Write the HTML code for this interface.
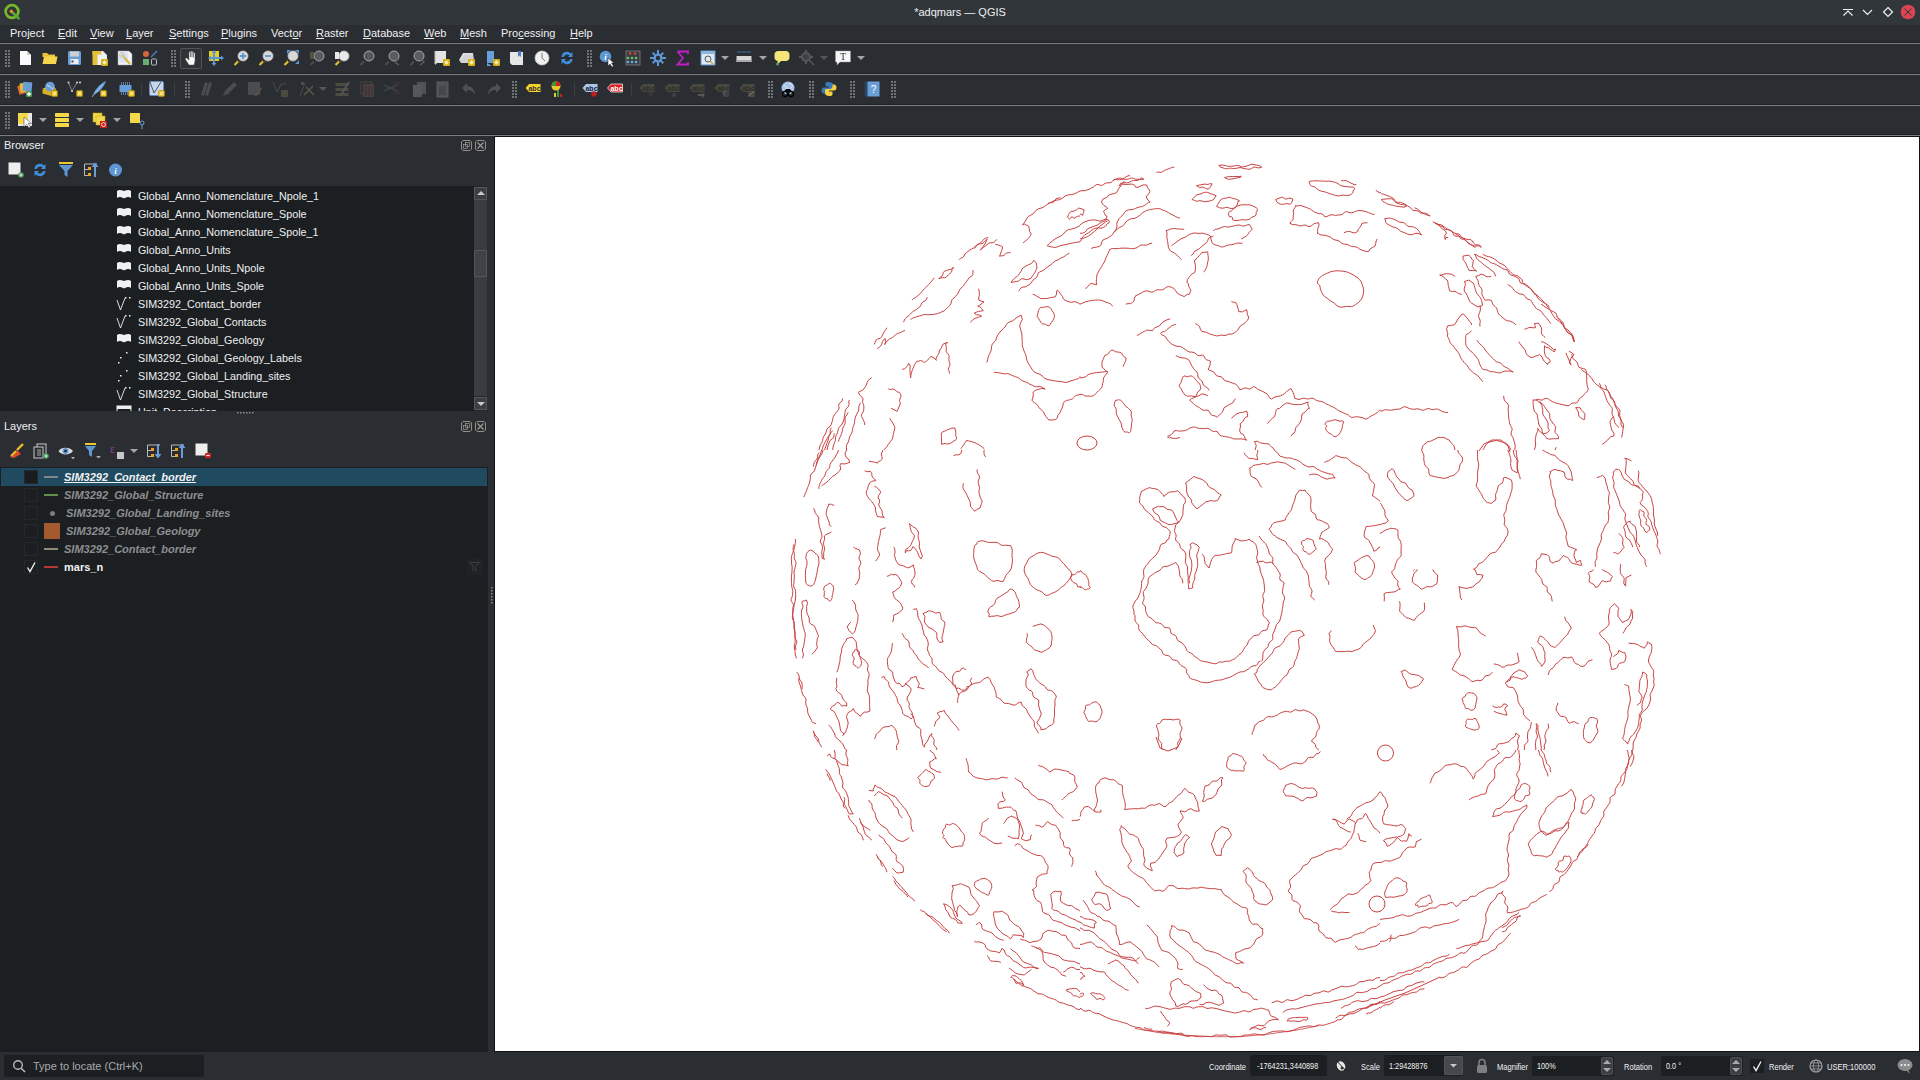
<!DOCTYPE html>
<html><head><meta charset="utf-8">
<style>
*{margin:0;padding:0;box-sizing:border-box}
html,body{width:1920px;height:1080px;overflow:hidden;background:#2a2d31;font-family:"Liberation Sans",sans-serif;color:#eff0f1;font-size:11px}
.a{position:absolute}
.mi{font-size:11px;color:#eff0f1;white-space:pre}
.mi u{text-decoration:underline;text-underline-offset:1px}
.st{font-size:9px;color:#eff0f1;white-space:pre}
.fld{background:#1c1f22;border-radius:2px}
svg{overflow:visible}
</style></head><body>
<div class="a" style="left:0;top:0;width:1920px;height:25px;background:#31363b"></div>
<svg class="a" style="left:0px;top:0px;" width="24" height="24" viewBox="0 0 24 24"><circle cx="12" cy="11.5" r="6.4" fill="none" stroke="#78b82a" stroke-width="2.7"/><path d="M11.5 11.5L18.5 18.3" stroke="#5aa83a" stroke-width="2.6" stroke-linecap="round"/><circle cx="11.3" cy="11.3" r="1.7" fill="#f08a20"/></svg>
<div class="a" style="left:0;top:5px;width:1920px;text-align:center;font-size:11px;color:#eff0f1;line-height:14px">*adqmars — QGIS</div>
<svg class="a" style="left:1840px;top:0px;" width="16" height="25" viewBox="0 0 16 25"><path d="M3 9.5H13M3.5 15.5L8 11L12.5 15.5" stroke="#eff0f1" stroke-width="1.2" fill="none"/></svg>
<svg class="a" style="left:1860px;top:0px;" width="16" height="25" viewBox="0 0 16 25"><path d="M3 10L7.5 14.5L12 10" stroke="#eff0f1" stroke-width="1.2" fill="none"/></svg>
<svg class="a" style="left:1880px;top:0px;" width="16" height="25" viewBox="0 0 16 25"><path d="M8 7.5L12.5 12L8 16.5L3.5 12Z" stroke="#eff0f1" stroke-width="1.2" fill="none"/></svg>
<svg class="a" style="left:1900px;top:0px;" width="16" height="25" viewBox="0 0 16 25"><circle cx="8" cy="12" r="7.3" fill="#da4453"/><path d="M4.5 8.5L11.5 15.5M11.5 8.5L4.5 15.5" stroke="#31363b" stroke-width="1"/></svg>
<div class="a" style="left:0;top:25px;width:1920px;height:18px;background:#2a2d31"></div>
<div class="a mi" style="left:10px;top:26px;line-height:14px">Pro<u>j</u>ect</div>
<div class="a mi" style="left:58px;top:26px;line-height:14px"><u>E</u>dit</div>
<div class="a mi" style="left:90px;top:26px;line-height:14px"><u>V</u>iew</div>
<div class="a mi" style="left:126px;top:26px;line-height:14px"><u>L</u>ayer</div>
<div class="a mi" style="left:169px;top:26px;line-height:14px"><u>S</u>ettings</div>
<div class="a mi" style="left:221px;top:26px;line-height:14px"><u>P</u>lugins</div>
<div class="a mi" style="left:271px;top:26px;line-height:14px">Vect<u>o</u>r</div>
<div class="a mi" style="left:316px;top:26px;line-height:14px"><u>R</u>aster</div>
<div class="a mi" style="left:363px;top:26px;line-height:14px"><u>D</u>atabase</div>
<div class="a mi" style="left:424px;top:26px;line-height:14px"><u>W</u>eb</div>
<div class="a mi" style="left:460px;top:26px;line-height:14px"><u>M</u>esh</div>
<div class="a mi" style="left:501px;top:26px;line-height:14px">Pro<u>c</u>essing</div>
<div class="a mi" style="left:570px;top:26px;line-height:14px"><u>H</u>elp</div>
<div class="a" style="left:0;top:44px;width:1920px;height:30px;background:#2a2d31"></div>
<div class="a" style="left:0;top:75px;width:1920px;height:30px;background:#2a2d31"></div>
<div class="a" style="left:0;top:106px;width:1920px;height:29px;background:#2a2d31"></div>
<div class="a" style="left:0;top:42px;width:1920px;height:1px;background:#1f2225"></div>
<div class="a" style="left:0;top:43px;width:1920px;height:1px;background:#7b7f82"></div>
<div class="a" style="left:0;top:73px;width:1920px;height:1px;background:#1f2225"></div>
<div class="a" style="left:0;top:74px;width:1920px;height:1px;background:#7b7f82"></div>
<div class="a" style="left:0;top:104px;width:1920px;height:1px;background:#1f2225"></div>
<div class="a" style="left:0;top:105px;width:1920px;height:1px;background:#7b7f82"></div>
<div class="a" style="left:0;top:134px;width:1920px;height:1px;background:#1f2225"></div>
<div class="a" style="left:0;top:135px;width:1920px;height:1px;background:#7b7f82"></div>
<svg class="a" style="left:5px;top:50px;" width="5" height="18" viewBox="0 0 5 18"><rect x="0" y="0" width="2" height="2" fill="#6f7276"/><rect x="3" y="0" width="2" height="2" fill="#6f7276"/><rect x="0" y="3" width="2" height="2" fill="#6f7276"/><rect x="3" y="3" width="2" height="2" fill="#6f7276"/><rect x="0" y="6" width="2" height="2" fill="#6f7276"/><rect x="3" y="6" width="2" height="2" fill="#6f7276"/><rect x="0" y="9" width="2" height="2" fill="#6f7276"/><rect x="3" y="9" width="2" height="2" fill="#6f7276"/><rect x="0" y="12" width="2" height="2" fill="#6f7276"/><rect x="3" y="12" width="2" height="2" fill="#6f7276"/><rect x="0" y="15" width="2" height="2" fill="#6f7276"/><rect x="3" y="15" width="2" height="2" fill="#6f7276"/></svg>
<svg class="a" style="left:17px;top:50px;" width="16" height="16" viewBox="0 0 16 16"><path d="M3 1H10L14 5V15H3Z" fill="#fafafa"/><path d="M10 1V5H14" fill="#ccc"/></svg>
<svg class="a" style="left:42px;top:50px;" width="16" height="16" viewBox="0 0 16 16"><path d="M0.5 3H5L6.5 4.5H13V7H0.5Z" fill="#e6c23a"/><path d="M0.5 14L2 6.5H15.5L14 14Z" fill="#f7d64e"/></svg>
<svg class="a" style="left:67px;top:50px;" width="16" height="16" viewBox="0 0 16 16"><rect x="1" y="1" width="13" height="14" rx="1.5" fill="#6a9ed8"/><rect x="3" y="1.5" width="9" height="5" fill="#cfcfcf"/><rect x="3.5" y="9" width="8" height="5" fill="#eee"/><rect x="4.5" y="10.5" width="2" height="2" fill="#2a4a70"/></svg>
<svg class="a" style="left:92px;top:50px;" width="16" height="16" viewBox="0 0 16 16"><path d="M4 1H11L15 5V15H4Z" fill="#eef1f8"/><rect x="0.5" y="1" width="5" height="14" fill="#e4c03a"/><rect x="0.5" y="1" width="9" height="3.5" fill="#e4c03a"/><rect x="9" y="9" width="7" height="7" rx="1" fill="#d4b21c"/><path d="M12.5 10.2v4.6M10.3 12.5h4.4M11 11l3 3M14 11l-3 3" stroke="#fff6c0" stroke-width="0.8"/></svg>
<svg class="a" style="left:117px;top:50px;" width="16" height="16" viewBox="0 0 16 16"><path d="M1 1H12L15 4V15H1Z" fill="#f0f2f8" stroke="#9aa" stroke-width="0.5"/><rect x="2" y="2.5" width="9" height="10" fill="#dbe4f6"/><path d="M5 5L13 14" stroke="#d8b83a" stroke-width="2.2"/><circle cx="5" cy="5" r="2.3" fill="none" stroke="#ccc" stroke-width="1.2"/></svg>
<svg class="a" style="left:142px;top:50px;" width="16" height="16" viewBox="0 0 16 16"><circle cx="4" cy="4" r="3" fill="#d9663a"/><path d="M9 7L15 1" stroke="#4a7cc0" stroke-width="1.5"/><rect x="1" y="9" width="6" height="6" fill="#6bab72"/><rect x="9.5" y="9" width="5" height="6" rx="1" fill="none" stroke="#bbb" stroke-width="1"/></svg>
<svg class="a" style="left:171px;top:50px;" width="5" height="18" viewBox="0 0 5 18"><rect x="0" y="0" width="2" height="2" fill="#6f7276"/><rect x="3" y="0" width="2" height="2" fill="#6f7276"/><rect x="0" y="3" width="2" height="2" fill="#6f7276"/><rect x="3" y="3" width="2" height="2" fill="#6f7276"/><rect x="0" y="6" width="2" height="2" fill="#6f7276"/><rect x="3" y="6" width="2" height="2" fill="#6f7276"/><rect x="0" y="9" width="2" height="2" fill="#6f7276"/><rect x="3" y="9" width="2" height="2" fill="#6f7276"/><rect x="0" y="12" width="2" height="2" fill="#6f7276"/><rect x="3" y="12" width="2" height="2" fill="#6f7276"/><rect x="0" y="15" width="2" height="2" fill="#6f7276"/><rect x="3" y="15" width="2" height="2" fill="#6f7276"/></svg>
<div class="a" style="left:180px;top:48px;width:22px;height:21px;border:1px solid #505357;border-radius:2px;background:#2f3236"></div>
<svg class="a" style="left:184px;top:50px;" width="16" height="16" viewBox="0 0 16 16"><path d="M5 15L1.5 9.5C1 8.5 2 7.5 3 8.3L5 10V2.5C5 1.5 6.5 1.5 6.5 2.5V7V1.8C6.5 0.8 8 0.8 8 1.8V7V2.2C8 1.2 9.5 1.2 9.5 2.2V7.5V3.5C9.5 2.5 11 2.5 11 3.5V11L10 15Z" fill="#fafafa" stroke="#555" stroke-width="0.5"/></svg>
<svg class="a" style="left:208px;top:50px;" width="16" height="16" viewBox="0 0 16 16"><rect x="1" y="1" width="10" height="10" fill="#e9cf2a"/><path d="M6 0L8.5 3H3.5ZM6 16L8.5 13H3.5ZM0 8L3 5.5V10.5ZM16 8L13 5.5V10.5Z" fill="#5d97d3"/><rect x="5" y="2" width="2" height="12" fill="#5d97d3"/><rect x="1" y="7" width="14" height="2" fill="#5d97d3"/></svg>
<svg class="a" style="left:233px;top:50px;" width="16" height="16" viewBox="0 0 16 16"><path d="M1.5 15L6 10.5" stroke="#e3c231" stroke-width="2.2"/><path d="M5 11.5L6.8 9.7" stroke="#222" stroke-width="1.5"/><circle cx="10" cy="6" r="5" fill="#d9d9d9" stroke="#bbb" stroke-width="0.8"/><path d="M10 3V9M7 6H13" stroke="#5d97d3" stroke-width="1.8"/></svg>
<svg class="a" style="left:258px;top:50px;" width="16" height="16" viewBox="0 0 16 16"><path d="M1.5 15L6 10.5" stroke="#e3c231" stroke-width="2.2"/><path d="M5 11.5L6.8 9.7" stroke="#222" stroke-width="1.5"/><circle cx="10" cy="6" r="5" fill="#d9d9d9" stroke="#bbb" stroke-width="0.8"/><path d="M7 6H13" stroke="#5d97d3" stroke-width="1.8"/></svg>
<svg class="a" style="left:283px;top:50px;" width="16" height="16" viewBox="0 0 16 16"><path d="M1.5 15L6 10.5" stroke="#e3c231" stroke-width="2.2"/><path d="M5 11.5L6.8 9.7" stroke="#222" stroke-width="1.5"/><circle cx="10" cy="6" r="5" fill="#d9d9d9" stroke="#bbb" stroke-width="0.8"/><path d="M4 0H8L4 4ZM16 0V4L12 0ZM16 14V10L12 14Z" fill="#5d97d3"/></svg>
<svg class="a" style="left:309px;top:50px;" width="16" height="16" viewBox="0 0 16 16"><path d="M1.5 15L6 10.5" stroke="#4a4c4e" stroke-width="2.2"/><path d="M5 11.5L6.8 9.7" stroke="#222" stroke-width="1.5"/><circle cx="10" cy="6" r="5" fill="#5a5c5f" stroke="#bbb" stroke-width="0.8"/><rect x="1" y="2" width="4" height="7" fill="#505246"/></svg>
<svg class="a" style="left:334px;top:50px;" width="16" height="16" viewBox="0 0 16 16"><path d="M1.5 15L6 10.5" stroke="#e3c231" stroke-width="2.2"/><path d="M5 11.5L6.8 9.7" stroke="#222" stroke-width="1.5"/><circle cx="10" cy="6" r="5" fill="#e8e8e8" stroke="#bbb" stroke-width="0.8"/><rect x="1" y="2" width="4" height="7" fill="#e9e9e9"/></svg>
<svg class="a" style="left:359px;top:50px;" width="16" height="16" viewBox="0 0 16 16"><path d="M1.5 15L6 10.5" stroke="#4a4c4e" stroke-width="2.2"/><path d="M5 11.5L6.8 9.7" stroke="#222" stroke-width="1.5"/><circle cx="10" cy="6" r="5" fill="#5a5c5f" stroke="#bbb" stroke-width="0.8"/><text x="10" y="8" font-size="6" text-anchor="middle" fill="#3a3c3e" font-family="Liberation Sans">1:1</text></svg>
<svg class="a" style="left:384px;top:50px;" width="16" height="16" viewBox="0 0 16 16"><path d="M1.5 15L6 10.5" stroke="#4a4c4e" stroke-width="2.2"/><path d="M5 11.5L6.8 9.7" stroke="#222" stroke-width="1.5"/><circle cx="10" cy="6" r="5" fill="#5a5c5f" stroke="#bbb" stroke-width="0.8"/><path d="M15 9L11 12L15 15" stroke="#5a5c5f" stroke-width="1.5" fill="none"/></svg>
<svg class="a" style="left:409px;top:50px;" width="16" height="16" viewBox="0 0 16 16"><path d="M1.5 15L6 10.5" stroke="#4a4c4e" stroke-width="2.2"/><path d="M5 11.5L6.8 9.7" stroke="#222" stroke-width="1.5"/><circle cx="10" cy="6" r="5" fill="#5a5c5f" stroke="#bbb" stroke-width="0.8"/><path d="M11 9L15 12L11 15" stroke="#5a5c5f" stroke-width="1.5" fill="none"/></svg>
<svg class="a" style="left:434px;top:50px;" width="16" height="16" viewBox="0 0 16 16"><path d="M1 1H12V13H3L1 15Z" fill="#e3e3e3"/><path d="M1 1V14" stroke="#bbb"/><rect x="9" y="9" width="7" height="7" rx="1" fill="#d4b21c"/><path d="M12.5 10.2v4.6M10.3 12.5h4.4M11 11l3 3M14 11l-3 3" stroke="#fff6c0" stroke-width="0.8"/></svg>
<svg class="a" style="left:459px;top:50px;" width="16" height="16" viewBox="0 0 16 16"><path d="M0 10L4 3H14L15 10L11 13H2Z" fill="#d3d3d3"/><path d="M2 9L5 4H13" stroke="#eee" stroke-width="0.8" fill="none"/><rect x="9" y="9" width="7" height="7" rx="1" fill="#d4b21c"/><path d="M12.5 10.2v4.6M10.3 12.5h4.4M11 11l3 3M14 11l-3 3" stroke="#fff6c0" stroke-width="0.8"/></svg>
<svg class="a" style="left:484px;top:50px;" width="16" height="16" viewBox="0 0 16 16"><path d="M3 1H10V13H3Z" fill="#6a9ed8"/><path d="M3 13L8 16H3Z" fill="#6a9ed8"/><rect x="9" y="9" width="7" height="7" rx="1" fill="#d4b21c"/><path d="M12.5 10.2v4.6M10.3 12.5h4.4M11 11l3 3M14 11l-3 3" stroke="#fff6c0" stroke-width="0.8"/></svg>
<svg class="a" style="left:509px;top:50px;" width="16" height="16" viewBox="0 0 16 16"><path d="M1 2H14V15H3L1 13Z" fill="#e6e6e6"/><path d="M9 1H12V7L10.5 5.5L9 7Z" fill="#4a7cc0"/></svg>
<svg class="a" style="left:534px;top:50px;" width="16" height="16" viewBox="0 0 16 16"><circle cx="8" cy="8" r="7" fill="#f1f1f1" stroke="#c8c8c8" stroke-width="0.8"/><path d="M8 3V8L11 11" stroke="#777" stroke-width="1" fill="none"/></svg>
<svg class="a" style="left:559px;top:50px;" width="16" height="16" viewBox="0 0 16 16"><path d="M2.5 7A5.5 5.5 0 0 1 12 3.5L13.5 2V7H9L10.5 5.5A3.5 3.5 0 0 0 4.8 7Z" fill="#3f8fd8"/><path d="M13.5 9A5.5 5.5 0 0 1 4 12.5L2.5 14V9H7L5.5 10.5A3.5 3.5 0 0 0 11.2 9Z" fill="#3f8fd8"/></svg>
<svg class="a" style="left:587px;top:50px;" width="5" height="18" viewBox="0 0 5 18"><rect x="0" y="0" width="2" height="2" fill="#6f7276"/><rect x="3" y="0" width="2" height="2" fill="#6f7276"/><rect x="0" y="3" width="2" height="2" fill="#6f7276"/><rect x="3" y="3" width="2" height="2" fill="#6f7276"/><rect x="0" y="6" width="2" height="2" fill="#6f7276"/><rect x="3" y="6" width="2" height="2" fill="#6f7276"/><rect x="0" y="9" width="2" height="2" fill="#6f7276"/><rect x="3" y="9" width="2" height="2" fill="#6f7276"/><rect x="0" y="12" width="2" height="2" fill="#6f7276"/><rect x="3" y="12" width="2" height="2" fill="#6f7276"/><rect x="0" y="15" width="2" height="2" fill="#6f7276"/><rect x="3" y="15" width="2" height="2" fill="#6f7276"/></svg>
<svg class="a" style="left:599px;top:50px;" width="16" height="16" viewBox="0 0 16 16"><circle cx="6.5" cy="6.5" r="5.8" fill="#5d97d3"/><text x="6.5" y="10" font-size="9" font-style="italic" font-weight="bold" text-anchor="middle" fill="#fff" font-family="Liberation Serif">i</text><path d="M9 8V16L11 14L13 17L14.5 16L12.5 13H15Z" fill="#fff" stroke="#222" stroke-width="0.5"/></svg>
<svg class="a" style="left:625px;top:50px;" width="16" height="16" viewBox="0 0 16 16"><rect x="1" y="1" width="14" height="14" fill="#3a3d40" stroke="#999" stroke-width="0.6"/><circle cx="5" cy="3.5" r="1.3" fill="#e04040"/><circle cx="10" cy="3.5" r="1.3" fill="#e04040"/><circle cx="3" cy="8" r="1.3" fill="#6bbf6b"/><circle cx="7" cy="8" r="1.3" fill="#6bbf6b"/><circle cx="11" cy="8" r="1.3" fill="#6bbf6b"/><circle cx="3" cy="12" r="1.3" fill="#6ab0e0"/><circle cx="7" cy="12" r="1.3" fill="#6ab0e0"/><circle cx="11" cy="12" r="1.3" fill="#6ab0e0"/></svg>
<svg class="a" style="left:650px;top:50px;" width="16" height="16" viewBox="0 0 16 16"><g fill="#5d97d3"><circle cx="8" cy="8" r="4.5"/><path d="M7 0H9V16H7ZM0 7H16V9H0Z"/><path d="M2 3.4L3.4 2L14 12.6L12.6 14ZM12.6 2L14 3.4L3.4 14L2 12.6Z"/></g><circle cx="8" cy="8" r="2.2" fill="#2a2d31"/></svg>
<svg class="a" style="left:675px;top:50px;" width="16" height="16" viewBox="0 0 16 16"><path d="M2.5 1.5H13V4M2.5 1.5L8 8L2.5 14.5H13V12" stroke="#c020c8" stroke-width="1.8" fill="none"/></svg>
<svg class="a" style="left:700px;top:50px;" width="16" height="16" viewBox="0 0 16 16"><rect x="1" y="1" width="14" height="14" fill="#dfe8f5" stroke="#5d8fc8" stroke-width="1"/><rect x="1" y="1" width="14" height="3" fill="#8fb4e0"/><circle cx="8" cy="9" r="3" fill="none" stroke="#555" stroke-width="1"/><path d="M10 11L13 14" stroke="#c8a040" stroke-width="1.2"/></svg>
<svg class="a" style="left:736px;top:50px;" width="16" height="16" viewBox="0 0 16 16"><path d="M1 2H15" stroke="#3d6e9e" stroke-width="1"/><rect x="0.5" y="6" width="15" height="6" fill="#d8d8d8"/><rect x="0.5" y="10" width="15" height="2" fill="#aaa"/></svg>
<svg class="a" style="left:774px;top:50px;" width="16" height="16" viewBox="0 0 16 16"><rect x="0.5" y="1" width="15" height="10" rx="4" fill="#f2e67a"/><path d="M4 10L3 15L8 10" fill="#f2e67a"/><circle cx="3.5" cy="14" r="1.5" fill="#5a9e5a"/></svg>
<svg class="a" style="left:799px;top:50px;" width="16" height="16" viewBox="0 0 16 16"><g fill="#55585b"><circle cx="7" cy="7" r="5"/><path d="M6 0H8V14H6ZM0 6H14V8H0Z"/></g><circle cx="7" cy="7" r="3" fill="#3e4144"/><path d="M9 9L15 15" stroke="#55585b" stroke-width="1.5"/></svg>
<svg class="a" style="left:835px;top:50px;" width="16" height="16" viewBox="0 0 16 16"><path d="M0.5 1H15.5V12H5L2 15V12H0.5Z" fill="#f7f7f7" stroke="#999" stroke-width="0.5"/><text x="8" y="10" font-size="10" text-anchor="middle" fill="#333" font-family="Liberation Serif">T</text></svg>
<svg class="a" style="left:721px;top:56px;" width="8" height="5" viewBox="0 0 8 5"><path d="M0 0H8L4 4Z" fill="#a3a5a8"/></svg>
<svg class="a" style="left:759px;top:56px;" width="8" height="5" viewBox="0 0 8 5"><path d="M0 0H8L4 4Z" fill="#a3a5a8"/></svg>
<svg class="a" style="left:820px;top:56px;" width="8" height="5" viewBox="0 0 8 5"><path d="M0 0H8L4 4Z" fill="#55585b"/></svg>
<svg class="a" style="left:857px;top:56px;" width="8" height="5" viewBox="0 0 8 5"><path d="M0 0H8L4 4Z" fill="#a3a5a8"/></svg>
<svg class="a" style="left:5px;top:81px;" width="5" height="18" viewBox="0 0 5 18"><rect x="0" y="0" width="2" height="2" fill="#6f7276"/><rect x="3" y="0" width="2" height="2" fill="#6f7276"/><rect x="0" y="3" width="2" height="2" fill="#6f7276"/><rect x="3" y="3" width="2" height="2" fill="#6f7276"/><rect x="0" y="6" width="2" height="2" fill="#6f7276"/><rect x="3" y="6" width="2" height="2" fill="#6f7276"/><rect x="0" y="9" width="2" height="2" fill="#6f7276"/><rect x="3" y="9" width="2" height="2" fill="#6f7276"/><rect x="0" y="12" width="2" height="2" fill="#6f7276"/><rect x="3" y="12" width="2" height="2" fill="#6f7276"/><rect x="0" y="15" width="2" height="2" fill="#6f7276"/><rect x="3" y="15" width="2" height="2" fill="#6f7276"/></svg>
<svg class="a" style="left:17px;top:81px;" width="16" height="16" viewBox="0 0 16 16"><rect x="1" y="4" width="8" height="9" fill="#e06a3a" transform="rotate(-15 5 8)"/><rect x="3" y="2" width="8" height="9" fill="#e8c030" transform="rotate(-8 7 6)"/><rect x="6" y="1" width="9" height="9" fill="#6a9ed8" transform="rotate(5 10 5)"/><rect x="9" y="10" width="6" height="6" rx="1" fill="#4d9a5a"/><path d="M12 11V15M10 13H14" stroke="#fff" stroke-width="1.3"/></svg>
<svg class="a" style="left:42px;top:81px;" width="16" height="16" viewBox="0 0 16 16"><path d="M0.5 8L5 5.5L14 7.5L9.5 10Z" fill="#f2d448"/><path d="M0.5 8V12.5L9.5 15V10Z" fill="#d6b222"/><path d="M9.5 10V15L14 12.5V7.5Z" fill="#b8941a"/><circle cx="8" cy="5.5" r="4.8" fill="#6a9ed8"/><path d="M5 4C6 6 8 4.5 9 6.5S11 8 12 6" stroke="#e8eef8" stroke-width="0.9" fill="none"/><rect x="9.5" y="9.5" width="6" height="6" rx="1" fill="#e8c32a" stroke="#b08a10" stroke-width="0.6"/><rect x="11" y="11" width="3" height="3" fill="#f7e48a"/></svg>
<svg class="a" style="left:67px;top:81px;" width="16" height="16" viewBox="0 0 16 16"><circle cx="1.5" cy="1.5" r="1" fill="#ddd"/><circle cx="10" cy="1.5" r="1" fill="#ddd"/><circle cx="13" cy="1.5" r="1" fill="#ddd"/><circle cx="5" cy="10" r="1" fill="#ddd"/><path d="M1.5 1.5L5 10L10 1.5" stroke="#bbb" stroke-width="0.6" fill="none"/><rect x="9.5" y="9.5" width="6" height="6" rx="1" fill="#e8c32a" stroke="#b08a10" stroke-width="0.6"/><rect x="11" y="11" width="3" height="3" fill="#f7e48a"/></svg>
<svg class="a" style="left:91px;top:81px;" width="16" height="16" viewBox="0 0 16 16"><path d="M1 16C3 10 8 3 15 0C13 6 8 12 3 13Z" fill="#6a9ed8"/><path d="M1 16L12 3" stroke="#cfe0f5" stroke-width="0.6"/><rect x="9.5" y="9.5" width="6" height="6" rx="1" fill="#e8c32a" stroke="#b08a10" stroke-width="0.6"/><rect x="11" y="11" width="3" height="3" fill="#f7e48a"/></svg>
<svg class="a" style="left:119px;top:81px;" width="16" height="16" viewBox="0 0 16 16"><rect x="0.5" y="4" width="12" height="7" fill="#6a9ed8"/><path d="M2.5 1V4M4.5 1V4M6.5 1V4M8.5 1V4M10.5 1V4M2.5 11V14M4.5 11V14M6.5 11V14M8.5 11V14" stroke="#8fb4e0" stroke-width="0.6"/><rect x="9.5" y="9.5" width="6" height="6" rx="1" fill="#e8c32a" stroke="#b08a10" stroke-width="0.6"/><rect x="11" y="11" width="3" height="3" fill="#f7e48a"/></svg>
<svg class="a" style="left:149px;top:81px;" width="16" height="16" viewBox="0 0 16 16"><rect x="0.5" y="0.5" width="14" height="14" rx="1.5" fill="#c6d6ee" stroke="#6a8fc8" stroke-width="0.8"/><path d="M1 1L5 12L12 1" stroke="#333" stroke-width="0.8" fill="none"/><rect x="9.5" y="9.5" width="6" height="6" rx="1" fill="#e8c32a" stroke="#b08a10" stroke-width="0.6"/><rect x="11" y="11" width="3" height="3" fill="#f7e48a"/></svg>
<div class="a" style="left:141px;top:83px;width:1px;height:14px;background:#3c3f43"></div>
<div class="a" style="left:174px;top:83px;width:1px;height:14px;background:#3c3f43"></div>
<svg class="a" style="left:185px;top:81px;" width="5" height="18" viewBox="0 0 5 18"><rect x="0" y="0" width="2" height="2" fill="#6f7276"/><rect x="3" y="0" width="2" height="2" fill="#6f7276"/><rect x="0" y="3" width="2" height="2" fill="#6f7276"/><rect x="3" y="3" width="2" height="2" fill="#6f7276"/><rect x="0" y="6" width="2" height="2" fill="#6f7276"/><rect x="3" y="6" width="2" height="2" fill="#6f7276"/><rect x="0" y="9" width="2" height="2" fill="#6f7276"/><rect x="3" y="9" width="2" height="2" fill="#6f7276"/><rect x="0" y="12" width="2" height="2" fill="#6f7276"/><rect x="3" y="12" width="2" height="2" fill="#6f7276"/><rect x="0" y="15" width="2" height="2" fill="#6f7276"/><rect x="3" y="15" width="2" height="2" fill="#6f7276"/></svg>
<svg class="a" style="left:199px;top:81px;" width="16" height="16" viewBox="0 0 16 16"><path d="M2 14L6 1L9 2L5 15Z" fill="#4a4c4f"/><path d="M6 14L10 1L13 2L9 15Z" fill="#4a4c4f"/></svg>
<svg class="a" style="left:222px;top:81px;" width="16" height="16" viewBox="0 0 16 16"><path d="M1 15L3 10L12 1L15 4L6 13Z" fill="#4a4c4f"/></svg>
<svg class="a" style="left:247px;top:81px;" width="16" height="16" viewBox="0 0 16 16"><rect x="1" y="1" width="12" height="13" fill="#4a4c4f"/><path d="M8 15L14 7" stroke="#55504a" stroke-width="2.5"/></svg>
<svg class="a" style="left:272px;top:81px;" width="16" height="16" viewBox="0 0 16 16"><path d="M1 1L5 11L9 3H14" stroke="#4a4c4f" stroke-width="1" fill="none"/><rect x="9" y="9" width="7" height="7" fill="#4a4a40"/></svg>
<svg class="a" style="left:299px;top:81px;" width="16" height="16" viewBox="0 0 16 16"><path d="M1 15L6 2" stroke="#4a4c4f"/><rect x="2" y="1" width="3" height="3" fill="#4a4c4f"/><path d="M5 14L14 5M7 6L15 14" stroke="#5a5646" stroke-width="1.6"/></svg>
<svg class="a" style="left:335px;top:81px;" width="16" height="16" viewBox="0 0 16 16"><rect x="0.5" y="2" width="13" height="3" fill="#4d4c40"/><rect x="0.5" y="7" width="13" height="3" fill="#4d4c40"/><rect x="0.5" y="12" width="13" height="3" fill="#4d4c40"/><path d="M6 14L14 1" stroke="#555" stroke-width="2"/></svg>
<svg class="a" style="left:360px;top:81px;" width="16" height="16" viewBox="0 0 16 16"><rect x="1" y="1" width="11" height="12" fill="none" stroke="#4a4440" stroke-width="1"/><rect x="3" y="3" width="11" height="13" fill="#4a3f3f"/><path d="M6 5V15M9 5V15M12 5V15" stroke="#3a3030"/></svg>
<svg class="a" style="left:384px;top:81px;" width="16" height="16" viewBox="0 0 16 16"><path d="M0 4L13 10M0 10L13 4" stroke="#4a4c4f" stroke-width="1.2"/><circle cx="13" cy="3" r="2" fill="none" stroke="#4a3a3a"/><circle cx="13" cy="11" r="2" fill="none" stroke="#4a3a3a"/></svg>
<svg class="a" style="left:411px;top:81px;" width="16" height="16" viewBox="0 0 16 16"><rect x="6" y="1" width="9" height="12" fill="#4f5255"/><rect x="2" y="4" width="9" height="12" fill="#55585b"/></svg>
<svg class="a" style="left:436px;top:81px;" width="16" height="16" viewBox="0 0 16 16"><rect x="1" y="1" width="11" height="15" fill="#505356" stroke="#5a5d60"/><rect x="3" y="5" width="7" height="9" fill="#45484b"/></svg>
<svg class="a" style="left:461px;top:81px;" width="16" height="16" viewBox="0 0 16 16"><path d="M6 2L1 7L6 12V9C10 9 12 10 14 14C14 9 11 5 6 5Z" fill="#4e5154"/></svg>
<svg class="a" style="left:486px;top:81px;" width="16" height="16" viewBox="0 0 16 16"><path d="M10 2L15 7L10 12V9C6 9 4 10 2 14C2 9 5 5 10 5Z" fill="#4e5154"/></svg>
<svg class="a" style="left:319px;top:87px;" width="8" height="5" viewBox="0 0 8 5"><path d="M0 0H8L4 4Z" fill="#55585b"/></svg>
<svg class="a" style="left:512px;top:81px;" width="5" height="18" viewBox="0 0 5 18"><rect x="0" y="0" width="2" height="2" fill="#6f7276"/><rect x="3" y="0" width="2" height="2" fill="#6f7276"/><rect x="0" y="3" width="2" height="2" fill="#6f7276"/><rect x="3" y="3" width="2" height="2" fill="#6f7276"/><rect x="0" y="6" width="2" height="2" fill="#6f7276"/><rect x="3" y="6" width="2" height="2" fill="#6f7276"/><rect x="0" y="9" width="2" height="2" fill="#6f7276"/><rect x="3" y="9" width="2" height="2" fill="#6f7276"/><rect x="0" y="12" width="2" height="2" fill="#6f7276"/><rect x="3" y="12" width="2" height="2" fill="#6f7276"/><rect x="0" y="15" width="2" height="2" fill="#6f7276"/><rect x="3" y="15" width="2" height="2" fill="#6f7276"/></svg>
<svg class="a" style="left:525px;top:81px;" width="16" height="16" viewBox="0 0 16 16"><path d="M0.5 7L4 3H15.5V11H4Z" fill="#f2d22c"/><text x="9.5" y="9.8" font-size="7" text-anchor="middle" fill="#333" font-family="Liberation Sans" font-weight="bold">abc</text></svg>
<svg class="a" style="left:551px;top:81px;" width="16" height="16" viewBox="0 0 16 16"><circle cx="5" cy="5" r="4.5" fill="#e8c82a"/><path d="M5 5V0.5A4.5 4.5 0 0 1 9.5 5Z" fill="#cc2020"/><path d="M5 5L0.5 5A4.5 4.5 0 0 1 5 0.5Z" fill="#3a9a3a"/><rect x="6" y="9" width="2" height="7" fill="#3a9a3a"/><rect x="3" y="12" width="2" height="4" fill="#e8c82a"/><rect x="9" y="13" width="2" height="3" fill="#cc2020"/></svg>
<svg class="a" style="left:582px;top:81px;" width="16" height="16" viewBox="0 0 16 16"><path d="M0.5 7L4 3H15.5V11H4Z" fill="#a8c8ee"/><text x="9.5" y="9.8" font-size="7" text-anchor="middle" fill="#223" font-family="Liberation Sans" font-weight="bold">abc</text><circle cx="12" cy="13" r="2.8" fill="#c02020"/></svg>
<svg class="a" style="left:607px;top:81px;" width="16" height="16" viewBox="0 0 16 16"><path d="M0.5 7L4 3H15.5V11H4Z" fill="#d82020" stroke="#fff" stroke-width="0.7"/><text x="9.5" y="9.8" font-size="7" text-anchor="middle" fill="#fff" font-family="Liberation Sans" font-weight="bold">abc</text></svg>
<svg class="a" style="left:639px;top:81px;" width="16" height="16" viewBox="0 0 16 16"><path d="M0.5 7L4 3H15.5V11H4Z" fill="#48483e"/><text x="9.5" y="9.8" font-size="7" text-anchor="middle" fill="#2e2e2a" font-family="Liberation Sans" font-weight="bold">abc</text><circle cx="12" cy="13" r="2.5" fill="#3e3434"/></svg>
<svg class="a" style="left:664px;top:81px;" width="16" height="16" viewBox="0 0 16 16"><path d="M0.5 7L4 3H15.5V11H4Z" fill="#48483e"/><text x="9.5" y="9.8" font-size="7" text-anchor="middle" fill="#2e2e2a" font-family="Liberation Sans" font-weight="bold">abc</text><circle cx="10" cy="14" r="1.3" fill="none" stroke="#666" stroke-width="0.6"/></svg>
<svg class="a" style="left:689px;top:81px;" width="16" height="16" viewBox="0 0 16 16"><path d="M0.5 7L4 3H15.5V11H4Z" fill="#48483e"/><text x="9.5" y="9.8" font-size="7" text-anchor="middle" fill="#2e2e2a" font-family="Liberation Sans" font-weight="bold">abc</text><path d="M9 13H13V11L16 14L13 17V15H9Z" fill="#555"/></svg>
<svg class="a" style="left:714px;top:81px;" width="16" height="16" viewBox="0 0 16 16"><path d="M0.5 7L4 3H15.5V11H4Z" fill="#48483e"/><text x="9.5" y="9.8" font-size="7" text-anchor="middle" fill="#2e2e2a" font-family="Liberation Sans" font-weight="bold">abc</text><rect x="9" y="10" width="6" height="6" fill="#3e4144"/><path d="M13 11A2 2 0 1 0 11 14" stroke="#666" fill="none"/></svg>
<svg class="a" style="left:739px;top:81px;" width="16" height="16" viewBox="0 0 16 16"><path d="M0.5 7L4 3H15.5V11H4Z" fill="#48483e"/><text x="9.5" y="9.8" font-size="7" text-anchor="middle" fill="#2e2e2a" font-family="Liberation Sans" font-weight="bold">abc</text><rect x="9" y="10" width="7" height="6" fill="#4a4a40"/><path d="M10 15L15 10" stroke="#777" stroke-width="1"/></svg>
<div class="a" style="left:574px;top:83px;width:1px;height:14px;background:#3c3f43"></div>
<div class="a" style="left:631px;top:83px;width:1px;height:14px;background:#3c3f43"></div>
<svg class="a" style="left:768px;top:81px;" width="5" height="18" viewBox="0 0 5 18"><rect x="0" y="0" width="2" height="2" fill="#6f7276"/><rect x="3" y="0" width="2" height="2" fill="#6f7276"/><rect x="0" y="3" width="2" height="2" fill="#6f7276"/><rect x="3" y="3" width="2" height="2" fill="#6f7276"/><rect x="0" y="6" width="2" height="2" fill="#6f7276"/><rect x="3" y="6" width="2" height="2" fill="#6f7276"/><rect x="0" y="9" width="2" height="2" fill="#6f7276"/><rect x="3" y="9" width="2" height="2" fill="#6f7276"/><rect x="0" y="12" width="2" height="2" fill="#6f7276"/><rect x="3" y="12" width="2" height="2" fill="#6f7276"/><rect x="0" y="15" width="2" height="2" fill="#6f7276"/><rect x="3" y="15" width="2" height="2" fill="#6f7276"/></svg>
<svg class="a" style="left:780px;top:81px;" width="16" height="16" viewBox="0 0 16 16"><circle cx="8" cy="7" r="6.5" fill="#a9c4e4"/><path d="M4 4C5 6 7 5 7 8S10 9 12 6M9 2C10 3 12 3 13 5" stroke="#e8f0f8" stroke-width="1" fill="none"/><circle cx="5" cy="13" r="2.5" fill="none" stroke="#000" stroke-width="1.3"/><circle cx="11" cy="13" r="2.5" fill="none" stroke="#000" stroke-width="1.3"/><path d="M4 11L6 8H10L12 11" fill="#000"/></svg>
<svg class="a" style="left:809px;top:81px;" width="5" height="18" viewBox="0 0 5 18"><rect x="0" y="0" width="2" height="2" fill="#6f7276"/><rect x="3" y="0" width="2" height="2" fill="#6f7276"/><rect x="0" y="3" width="2" height="2" fill="#6f7276"/><rect x="3" y="3" width="2" height="2" fill="#6f7276"/><rect x="0" y="6" width="2" height="2" fill="#6f7276"/><rect x="3" y="6" width="2" height="2" fill="#6f7276"/><rect x="0" y="9" width="2" height="2" fill="#6f7276"/><rect x="3" y="9" width="2" height="2" fill="#6f7276"/><rect x="0" y="12" width="2" height="2" fill="#6f7276"/><rect x="3" y="12" width="2" height="2" fill="#6f7276"/><rect x="0" y="15" width="2" height="2" fill="#6f7276"/><rect x="3" y="15" width="2" height="2" fill="#6f7276"/></svg>
<svg class="a" style="left:821px;top:81px;" width="16" height="16" viewBox="0 0 16 16"><path d="M7.5 1C4 1 4.5 2.5 4.5 4V5.5H8V6.5H3C1 6.5 0.5 8 0.5 9.5S1.5 12.5 3 12.5H4.5V10.5C4.5 9 5.5 8 7 8H10.5C11.5 8 12 7.5 12 6.5V4C12 2 10.5 1 7.5 1Z" fill="#3c7ab8"/><path d="M8.5 15C12 15 11.5 13.5 11.5 12V10.5H8V9.5H13C15 9.5 15.5 8 15.5 6.5S14.5 3.5 13 3.5H11.5V5.5C11.5 7 10.5 8 9 8H5.5C4.5 8 4 8.5 4 9.5V12C4 14 5.5 15 8.5 15Z" fill="#f2d040"/></svg>
<svg class="a" style="left:850px;top:81px;" width="5" height="18" viewBox="0 0 5 18"><rect x="0" y="0" width="2" height="2" fill="#6f7276"/><rect x="3" y="0" width="2" height="2" fill="#6f7276"/><rect x="0" y="3" width="2" height="2" fill="#6f7276"/><rect x="3" y="3" width="2" height="2" fill="#6f7276"/><rect x="0" y="6" width="2" height="2" fill="#6f7276"/><rect x="3" y="6" width="2" height="2" fill="#6f7276"/><rect x="0" y="9" width="2" height="2" fill="#6f7276"/><rect x="3" y="9" width="2" height="2" fill="#6f7276"/><rect x="0" y="12" width="2" height="2" fill="#6f7276"/><rect x="3" y="12" width="2" height="2" fill="#6f7276"/><rect x="0" y="15" width="2" height="2" fill="#6f7276"/><rect x="3" y="15" width="2" height="2" fill="#6f7276"/></svg>
<svg class="a" style="left:864px;top:81px;" width="16" height="16" viewBox="0 0 16 16"><rect x="0.5" y="0.5" width="3" height="15" fill="#2b4563"/><rect x="3.5" y="0.5" width="12" height="15" fill="#6a9ed8"/><text x="9.5" y="12" font-size="10" text-anchor="middle" fill="#fff" font-family="Liberation Sans">?</text></svg>
<svg class="a" style="left:891px;top:81px;" width="5" height="18" viewBox="0 0 5 18"><rect x="0" y="0" width="2" height="2" fill="#6f7276"/><rect x="3" y="0" width="2" height="2" fill="#6f7276"/><rect x="0" y="3" width="2" height="2" fill="#6f7276"/><rect x="3" y="3" width="2" height="2" fill="#6f7276"/><rect x="0" y="6" width="2" height="2" fill="#6f7276"/><rect x="3" y="6" width="2" height="2" fill="#6f7276"/><rect x="0" y="9" width="2" height="2" fill="#6f7276"/><rect x="3" y="9" width="2" height="2" fill="#6f7276"/><rect x="0" y="12" width="2" height="2" fill="#6f7276"/><rect x="3" y="12" width="2" height="2" fill="#6f7276"/><rect x="0" y="15" width="2" height="2" fill="#6f7276"/><rect x="3" y="15" width="2" height="2" fill="#6f7276"/></svg>
<svg class="a" style="left:5px;top:112px;" width="5" height="18" viewBox="0 0 5 18"><rect x="0" y="0" width="2" height="2" fill="#6f7276"/><rect x="3" y="0" width="2" height="2" fill="#6f7276"/><rect x="0" y="3" width="2" height="2" fill="#6f7276"/><rect x="3" y="3" width="2" height="2" fill="#6f7276"/><rect x="0" y="6" width="2" height="2" fill="#6f7276"/><rect x="3" y="6" width="2" height="2" fill="#6f7276"/><rect x="0" y="9" width="2" height="2" fill="#6f7276"/><rect x="3" y="9" width="2" height="2" fill="#6f7276"/><rect x="0" y="12" width="2" height="2" fill="#6f7276"/><rect x="3" y="12" width="2" height="2" fill="#6f7276"/><rect x="0" y="15" width="2" height="2" fill="#6f7276"/><rect x="3" y="15" width="2" height="2" fill="#6f7276"/></svg>
<svg class="a" style="left:17px;top:112px;" width="16" height="16" viewBox="0 0 16 16"><rect x="1" y="1" width="14" height="13" fill="#e8e8e8"/><rect x="1" y="1" width="10" height="11" fill="#f2d84a"/><path d="M7 5V15L9.5 12.5L12 16L13.5 15L11 11.5H14.5Z" fill="#fff" stroke="#333" stroke-width="0.5"/></svg>
<svg class="a" style="left:54px;top:112px;" width="16" height="16" viewBox="0 0 16 16"><rect x="1" y="1" width="14" height="4" rx="0.8" fill="#f2d84a"/><rect x="1" y="6" width="14" height="4" rx="0.8" fill="#f2d84a"/><rect x="1" y="11" width="14" height="4" rx="0.8" fill="#f2d84a"/></svg>
<svg class="a" style="left:92px;top:112px;" width="16" height="16" viewBox="0 0 16 16"><rect x="1" y="1" width="9" height="9" fill="#f2d84a" stroke="#c8a81a" stroke-width="0.5"/><rect x="4" y="4" width="9" height="9" fill="#f2d84a" stroke="#c8a81a" stroke-width="0.5"/><rect x="8" y="9" width="7" height="7" fill="#cc2020"/><circle cx="11.5" cy="12.5" r="2" fill="none" stroke="#fff" stroke-width="0.8"/></svg>
<svg class="a" style="left:129px;top:112px;" width="16" height="16" viewBox="0 0 16 16"><rect x="1" y="1" width="10" height="10" fill="#f2d84a"/><circle cx="13" cy="11" r="2" fill="none" stroke="#6a9ed8" stroke-width="1"/><path d="M13 13V17" stroke="#6a9ed8"/></svg>
<svg class="a" style="left:39px;top:118px;" width="8" height="5" viewBox="0 0 8 5"><path d="M0 0H8L4 4Z" fill="#a3a5a8"/></svg>
<svg class="a" style="left:76px;top:118px;" width="8" height="5" viewBox="0 0 8 5"><path d="M0 0H8L4 4Z" fill="#a3a5a8"/></svg>
<svg class="a" style="left:113px;top:118px;" width="8" height="5" viewBox="0 0 8 5"><path d="M0 0H8L4 4Z" fill="#a3a5a8"/></svg>
<div class="a" style="left:0;top:136px;width:495px;height:915px;background:#2a2d31"></div>
<div class="a" style="left:4px;top:139px;font-size:11px;line-height:13px;color:#eff0f1">Browser</div>
<svg class="a" style="left:461px;top:140px;" width="11" height="11" viewBox="0 0 11 11"><path d="M2 0.5H9L10.5 2V9L9 10.5H2L0.5 9V2Z" fill="none" stroke="#9e9a94" stroke-width="0.9"/><rect x="4.5" y="2.5" width="4" height="4" fill="none" stroke="#9e9a94" stroke-width="0.7"/><rect x="2.5" y="4.5" width="4" height="4" fill="none" stroke="#9e9a94" stroke-width="0.7"/></svg><svg class="a" style="left:475px;top:140px;" width="11" height="11" viewBox="0 0 11 11"><path d="M2 0.5H9L10.5 2V9L9 10.5H2L0.5 9V2Z" fill="none" stroke="#9e9a94" stroke-width="0.9"/><path d="M2.5 2.5L8.5 8.5M8.5 2.5L2.5 8.5" stroke="#9e9a94" stroke-width="1.2"/></svg>
<svg class="a" style="left:8px;top:162px;" width="16" height="16" viewBox="0 0 16 16"><rect x="0.5" y="0.5" width="12" height="12" fill="#eeeeee"/><circle cx="13" cy="13" r="2.8" fill="#4d9a5a"/><path d="M13 11.5V14.5M11.5 13H14.5" stroke="#fff" stroke-width="0.8"/></svg>
<svg class="a" style="left:33px;top:162px;" width="16" height="16" viewBox="0 0 16 16"><path d="M1.5 7A5.5 5.5 0 0 1 11 3.5L12.5 2V7H8L9.5 5.5A3.5 3.5 0 0 0 3.8 7Z" fill="#3f8fd8"/><path d="M12.5 9A5.5 5.5 0 0 1 3 12.5L1.5 14V9H6L4.5 10.5A3.5 3.5 0 0 0 10.2 9Z" fill="#3f8fd8"/></svg>
<svg class="a" style="left:58px;top:162px;" width="16" height="16" viewBox="0 0 16 16"><rect x="1" y="0" width="14" height="2" fill="#e8c830"/><path d="M1 3H15L9.5 9V15L6.5 13V9Z" fill="#5d97d3"/></svg>
<svg class="a" style="left:83px;top:162px;" width="16" height="16" viewBox="0 0 16 16"><path d="M1.5 2V13.5H5M1.5 2H14M1.5 7.5H5" stroke="#c8c8c8" stroke-width="0.9" fill="none"/><rect x="5" y="5" width="3" height="3" fill="#f0a020"/><rect x="5" y="11" width="3" height="3" fill="#f0a020"/><path d="M11 15V5H8.5L12 0.5L15.5 5H13V15Z" fill="#6a9ed8"/></svg>
<svg class="a" style="left:108px;top:162px;" width="16" height="16" viewBox="0 0 16 16"><circle cx="7.5" cy="8" r="6.5" fill="#5d97d3"/><text x="7.5" y="11.5" font-size="9" font-style="italic" font-weight="bold" text-anchor="middle" fill="#fff" font-family="Liberation Serif">i</text></svg>
<div class="a" style="left:0;top:186px;width:474px;height:225px;background:#1c1f22;overflow:hidden">
<svg class="a" style="left:116px;top:2px;" width="16" height="16" viewBox="0 0 16 16"><path d="M1 3C3 1.5 5 2 8 3C11 2 13 1.5 15 3V10C13 8.5 11 9 8 10.5C5 9 3 8.5 1 10Z" fill="#f0f0f0"/></svg>
<div class="a" style="left:138px;top:4px;font-size:10.75px;line-height:13px;color:#eff0f1;white-space:pre">Global_Anno_Nomenclature_Npole_1</div>
<svg class="a" style="left:116px;top:20px;" width="16" height="16" viewBox="0 0 16 16"><path d="M1 3C3 1.5 5 2 8 3C11 2 13 1.5 15 3V10C13 8.5 11 9 8 10.5C5 9 3 8.5 1 10Z" fill="#f0f0f0"/></svg>
<div class="a" style="left:138px;top:22px;font-size:10.75px;line-height:13px;color:#eff0f1;white-space:pre">Global_Anno_Nomenclature_Spole</div>
<svg class="a" style="left:116px;top:38px;" width="16" height="16" viewBox="0 0 16 16"><path d="M1 3C3 1.5 5 2 8 3C11 2 13 1.5 15 3V10C13 8.5 11 9 8 10.5C5 9 3 8.5 1 10Z" fill="#f0f0f0"/></svg>
<div class="a" style="left:138px;top:40px;font-size:10.75px;line-height:13px;color:#eff0f1;white-space:pre">Global_Anno_Nomenclature_Spole_1</div>
<svg class="a" style="left:116px;top:56px;" width="16" height="16" viewBox="0 0 16 16"><path d="M1 3C3 1.5 5 2 8 3C11 2 13 1.5 15 3V10C13 8.5 11 9 8 10.5C5 9 3 8.5 1 10Z" fill="#f0f0f0"/></svg>
<div class="a" style="left:138px;top:58px;font-size:10.75px;line-height:13px;color:#eff0f1;white-space:pre">Global_Anno_Units</div>
<svg class="a" style="left:116px;top:74px;" width="16" height="16" viewBox="0 0 16 16"><path d="M1 3C3 1.5 5 2 8 3C11 2 13 1.5 15 3V10C13 8.5 11 9 8 10.5C5 9 3 8.5 1 10Z" fill="#f0f0f0"/></svg>
<div class="a" style="left:138px;top:76px;font-size:10.75px;line-height:13px;color:#eff0f1;white-space:pre">Global_Anno_Units_Npole</div>
<svg class="a" style="left:116px;top:92px;" width="16" height="16" viewBox="0 0 16 16"><path d="M1 3C3 1.5 5 2 8 3C11 2 13 1.5 15 3V10C13 8.5 11 9 8 10.5C5 9 3 8.5 1 10Z" fill="#f0f0f0"/></svg>
<div class="a" style="left:138px;top:94px;font-size:10.75px;line-height:13px;color:#eff0f1;white-space:pre">Global_Anno_Units_Spole</div>
<svg class="a" style="left:116px;top:110px;" width="16" height="16" viewBox="0 0 16 16"><path d="M1 4L4.5 14L9 2" stroke="#eee" stroke-width="0.9" fill="none"/><rect x="9" y="1" width="1.5" height="1.5" fill="#eee"/><rect x="13" y="1" width="1.5" height="1.5" fill="#eee"/></svg>
<div class="a" style="left:138px;top:112px;font-size:10.75px;line-height:13px;color:#eff0f1;white-space:pre">SIM3292_Contact_border</div>
<svg class="a" style="left:116px;top:128px;" width="16" height="16" viewBox="0 0 16 16"><path d="M1 4L4.5 14L9 2" stroke="#eee" stroke-width="0.9" fill="none"/><rect x="9" y="1" width="1.5" height="1.5" fill="#eee"/><rect x="13" y="1" width="1.5" height="1.5" fill="#eee"/></svg>
<div class="a" style="left:138px;top:130px;font-size:10.75px;line-height:13px;color:#eff0f1;white-space:pre">SIM3292_Global_Contacts</div>
<svg class="a" style="left:116px;top:146px;" width="16" height="16" viewBox="0 0 16 16"><path d="M1 3C3 1.5 5 2 8 3C11 2 13 1.5 15 3V10C13 8.5 11 9 8 10.5C5 9 3 8.5 1 10Z" fill="#f0f0f0"/></svg>
<div class="a" style="left:138px;top:148px;font-size:10.75px;line-height:13px;color:#eff0f1;white-space:pre">SIM3292_Global_Geology</div>
<svg class="a" style="left:116px;top:164px;" width="16" height="16" viewBox="0 0 16 16"><rect x="2" y="12" width="1.5" height="1.5" fill="#eee"/><rect x="4" y="7" width="1.5" height="1.5" fill="#eee"/><rect x="10" y="2" width="1.5" height="1.5" fill="#eee"/></svg>
<div class="a" style="left:138px;top:166px;font-size:10.75px;line-height:13px;color:#eff0f1;white-space:pre">SIM3292_Global_Geology_Labels</div>
<svg class="a" style="left:116px;top:182px;" width="16" height="16" viewBox="0 0 16 16"><rect x="2" y="12" width="1.5" height="1.5" fill="#eee"/><rect x="4" y="7" width="1.5" height="1.5" fill="#eee"/><rect x="10" y="2" width="1.5" height="1.5" fill="#eee"/></svg>
<div class="a" style="left:138px;top:184px;font-size:10.75px;line-height:13px;color:#eff0f1;white-space:pre">SIM3292_Global_Landing_sites</div>
<svg class="a" style="left:116px;top:200px;" width="16" height="16" viewBox="0 0 16 16"><path d="M1 4L4.5 14L9 2" stroke="#eee" stroke-width="0.9" fill="none"/><rect x="9" y="1" width="1.5" height="1.5" fill="#eee"/><rect x="13" y="1" width="1.5" height="1.5" fill="#eee"/></svg>
<div class="a" style="left:138px;top:202px;font-size:10.75px;line-height:13px;color:#eff0f1;white-space:pre">SIM3292_Global_Structure</div>
<svg class="a" style="left:116px;top:218px;" width="16" height="16" viewBox="0 0 16 16"><rect x="1" y="2" width="14" height="11" fill="none" stroke="#eee" stroke-width="1"/><rect x="1" y="2" width="14" height="3" fill="#eee"/></svg>
<div class="a" style="left:138px;top:220px;font-size:10.75px;line-height:13px;color:#eff0f1;white-space:pre">Unit_Description</div>
</div>
<div class="a" style="left:474px;top:186px;width:13px;height:225px;background:#232629"></div>
<div class="a" style="left:474px;top:187px;width:13px;height:13px;background:#3b3e42;border:1px solid #53565a"></div>
<svg class="a" style="left:477px;top:190px;" width="8" height="6" viewBox="0 0 8 6"><path d="M0 5L4 1L8 5Z" fill="#c8c9ca"/></svg>
<div class="a" style="left:474px;top:397px;width:13px;height:13px;background:#3b3e42;border:1px solid #53565a"></div>
<svg class="a" style="left:477px;top:401px;" width="8" height="6" viewBox="0 0 8 6"><path d="M0 1L4 5L8 1Z" fill="#c8c9ca"/></svg>
<div class="a" style="left:474px;top:200px;width:13px;height:196px;background:#393c40"></div>
<div class="a" style="left:474px;top:250px;width:13px;height:27px;background:#3f4246;border:1px solid #53565a;border-radius:1px"></div>
<svg class="a" style="left:237px;top:412px;" width="18" height="3" viewBox="0 0 18 3"><rect x="0" y="0" width="1.5" height="1.5" fill="#8a8d90"/><rect x="3" y="0" width="1.5" height="1.5" fill="#8a8d90"/><rect x="6" y="0" width="1.5" height="1.5" fill="#8a8d90"/><rect x="9" y="0" width="1.5" height="1.5" fill="#8a8d90"/><rect x="12" y="0" width="1.5" height="1.5" fill="#8a8d90"/><rect x="15" y="0" width="1.5" height="1.5" fill="#8a8d90"/></svg>
<div class="a" style="left:4px;top:420px;font-size:11px;line-height:13px;color:#eff0f1">Layers</div>
<svg class="a" style="left:461px;top:421px;" width="11" height="11" viewBox="0 0 11 11"><path d="M2 0.5H9L10.5 2V9L9 10.5H2L0.5 9V2Z" fill="none" stroke="#9e9a94" stroke-width="0.9"/><rect x="4.5" y="2.5" width="4" height="4" fill="none" stroke="#9e9a94" stroke-width="0.7"/><rect x="2.5" y="4.5" width="4" height="4" fill="none" stroke="#9e9a94" stroke-width="0.7"/></svg><svg class="a" style="left:475px;top:421px;" width="11" height="11" viewBox="0 0 11 11"><path d="M2 0.5H9L10.5 2V9L9 10.5H2L0.5 9V2Z" fill="none" stroke="#9e9a94" stroke-width="0.9"/><path d="M2.5 2.5L8.5 8.5M8.5 2.5L2.5 8.5" stroke="#9e9a94" stroke-width="1.2"/></svg>
<svg class="a" style="left:8px;top:443px;" width="16" height="16" viewBox="0 0 16 16"><path d="M2 14L9 7L13 11L6 15Z" fill="#d84a2a"/><path d="M3 13L8 8" stroke="#e8c030" stroke-width="2"/><path d="M9 7L15 1" stroke="#e8c030" stroke-width="2.4"/></svg>
<svg class="a" style="left:33px;top:443px;" width="16" height="16" viewBox="0 0 16 16"><rect x="4" y="1" width="9" height="11" fill="none" stroke="#ccc" stroke-width="1"/><rect x="1" y="4" width="9" height="11" fill="#2a2d31" stroke="#ccc" stroke-width="1"/><path d="M5 6V13M7 6V13" stroke="#aaa"/><circle cx="13" cy="13" r="2.8" fill="#4d9a5a"/><path d="M13 11.5V14.5M11.5 13H14.5" stroke="#fff" stroke-width="0.8"/></svg>
<svg class="a" style="left:58px;top:443px;" width="18" height="17" viewBox="0 0 18 17"><path d="M0.5 8C3 3.5 12 3.5 15 8C12 12.5 3 12.5 0.5 8Z" fill="#ddd"/><circle cx="7.5" cy="8" r="3" fill="#5d97d3"/><circle cx="7.5" cy="8" r="1.3" fill="#223"/><path d="M13 14H17L15 16.5Z" fill="#aaa"/></svg>
<svg class="a" style="left:84px;top:443px;" width="18" height="17" viewBox="0 0 18 17"><rect x="1" y="0" width="11" height="2" fill="#e8c830"/><path d="M1 3H12L8 8V14L5 12V8Z" fill="#5d97d3"/><path d="M12 13H17L14.5 15.5Z" fill="#aaa"/></svg>
<svg class="a" style="left:109px;top:443px;" width="16" height="16" viewBox="0 0 16 16"><text x="1" y="10" font-size="12" fill="#9040a0" font-family="Liberation Serif">ε</text><rect x="8" y="9" width="7" height="7" fill="#c8c8c8"/></svg>
<svg class="a" style="left:130px;top:449px;" width="8" height="5" viewBox="0 0 8 5"><path d="M0 0H8L4 4Z" fill="#a3a5a8"/></svg>
<svg class="a" style="left:146px;top:443px;" width="16" height="16" viewBox="0 0 16 16"><path d="M1.5 2V13.5H5M1.5 2H14M1.5 7.5H5" stroke="#c8c8c8" stroke-width="0.9" fill="none"/><rect x="5" y="5" width="3" height="3" fill="#f0a020"/><rect x="5" y="11" width="3" height="3" fill="#f0a020"/><path d="M11 1V11H8.5L12 15.5L15.5 11H13V1Z" fill="#6a9ed8"/></svg>
<svg class="a" style="left:170px;top:443px;" width="16" height="16" viewBox="0 0 16 16"><path d="M1.5 2V13.5H5M1.5 2H14M1.5 7.5H5" stroke="#c8c8c8" stroke-width="0.9" fill="none"/><rect x="5" y="5" width="3" height="3" fill="#f0a020"/><rect x="5" y="11" width="3" height="3" fill="#f0a020"/><path d="M11 15V5H8.5L12 0.5L15.5 5H13V15Z" fill="#6a9ed8"/></svg>
<svg class="a" style="left:195px;top:443px;" width="16" height="16" viewBox="0 0 16 16"><rect x="0.5" y="0.5" width="12" height="12" fill="#eeeeee"/><rect x="10" y="10" width="6" height="5" rx="1" fill="#d82020"/><path d="M11.5 12.5H14.5" stroke="#fff" stroke-width="1"/></svg>
<div class="a" style="left:0;top:467px;width:488px;height:585px;background:#1c1f22"></div>
<div class="a" style="left:1px;top:468px;width:486px;height:18px;background:#1f4a5f"></div>
<div class="a" style="left:24px;top:470px;width:14px;height:14px;background:#1a1d20;border:1px solid #25282b"></div>
<div class="a" style="left:44px;top:476px;width:14px;height:2px;background:#8b8e90;opacity:0.9"></div>
<div class="a" style="left:64px;top:471px;font-size:11px;line-height:13px;color:#eff0f1;white-space:pre;font-weight:bold;font-style:italic;text-decoration:underline;">SIM3292_Contact_border</div>
<div class="a" style="left:24px;top:488px;width:14px;height:14px;background:#1c1f22;border:1px solid #25282b"></div>
<div class="a" style="left:44px;top:494px;width:14px;height:2px;background:#6c9a50;opacity:0.9"></div>
<div class="a" style="left:64px;top:489px;font-size:11px;line-height:13px;color:#8c8e90;white-space:pre;font-weight:bold;font-style:italic;">SIM3292_Global_Structure</div>
<div class="a" style="left:24px;top:506px;width:14px;height:14px;background:#1c1f22;border:1px solid #25282b"></div>
<div class="a" style="left:50px;top:511px;width:5px;height:5px;border-radius:50%;background:#7b7e80"></div>
<div class="a" style="left:66px;top:507px;font-size:11px;line-height:13px;color:#8c8e90;white-space:pre;font-weight:bold;font-style:italic;">SIM3292_Global_Landing_sites</div>
<div class="a" style="left:24px;top:524px;width:14px;height:14px;background:#1c1f22;border:1px solid #25282b"></div>
<div class="a" style="left:44px;top:523px;width:16px;height:16px;background:#a35a2e"></div>
<div class="a" style="left:66px;top:525px;font-size:11px;line-height:13px;color:#8c8e90;white-space:pre;font-weight:bold;font-style:italic;">SIM3292_Global_Geology</div>
<div class="a" style="left:24px;top:542px;width:14px;height:14px;background:#1c1f22;border:1px solid #25282b"></div>
<div class="a" style="left:44px;top:548px;width:14px;height:2px;background:#a09680;opacity:0.9"></div>
<div class="a" style="left:64px;top:543px;font-size:11px;line-height:13px;color:#8c8e90;white-space:pre;font-weight:bold;font-style:italic;">SIM3292_Contact_border</div>
<div class="a" style="left:24px;top:560px;width:14px;height:14px;background:#1c1f22;border:1px solid #25282b"></div>
<svg class="a" style="left:25px;top:561px;" width="12" height="12" viewBox="0 0 12 12"><path d="M2.5 6.5L5 10.5L10 1.5" stroke="#eff0f1" stroke-width="1.4" fill="none"/></svg>
<div class="a" style="left:44px;top:566px;width:14px;height:2px;background:#c83a3a;opacity:0.9"></div>
<div class="a" style="left:64px;top:561px;font-size:11px;line-height:13px;color:#eff0f1;white-space:pre;font-weight:bold;">mars_n</div>
<div class="a" style="left:467px;top:559px;width:16px;height:16px;background:#202326"></div>
<svg class="a" style="left:468px;top:560px;" width="14" height="14" viewBox="0 0 14 14"><path d="M1.5 2.5H11.5L7.5 6.5V11.5M1.5 2.5L5 5.5V11" stroke="#3e4144" stroke-width="0.9" fill="none"/></svg>
<svg class="a" style="left:491px;top:587px;" width="3" height="18" viewBox="0 0 3 18"><rect x="0" y="0" width="1.5" height="1.5" fill="#8a8d90"/><rect x="0" y="3" width="1.5" height="1.5" fill="#8a8d90"/><rect x="0" y="6" width="1.5" height="1.5" fill="#8a8d90"/><rect x="0" y="9" width="1.5" height="1.5" fill="#8a8d90"/><rect x="0" y="12" width="1.5" height="1.5" fill="#8a8d90"/><rect x="0" y="15" width="1.5" height="1.5" fill="#8a8d90"/></svg>
<div class="a" style="left:0;top:1052px;width:1920px;height:28px;background:#2a2d31"></div>
<div class="a" style="left:4px;top:1055px;width:200px;height:22px;background:#1c1f22;border-radius:3px"></div>
<svg class="a" style="left:12px;top:1059px;" width="14" height="14" viewBox="0 0 14 14"><circle cx="6" cy="6" r="4.3" fill="none" stroke="#b8b9ba" stroke-width="1.4"/><path d="M9.2 9.2L13 13" stroke="#b8b9ba" stroke-width="1.6"/></svg>
<div class="a" style="left:33px;top:1060px;font-size:11px;line-height:13px;color:#a8aaac;white-space:pre">Type to locate (Ctrl+K)</div>
<div class="a st" style="left:1209px;top:1062px;line-height:11px;transform:scaleX(0.84);transform-origin:0 0">Coordinate</div>
<div class="a fld" style="left:1250px;top:1055px;width:77px;height:21px"></div>
<div class="a st" style="left:1257px;top:1061px;line-height:11px;transform:scaleX(0.81);transform-origin:0 0">-1764231,3440898</div>
<svg class="a" style="left:1333px;top:1057px;" width="16" height="16" viewBox="0 0 16 16"><ellipse cx="8" cy="9" rx="4" ry="5" fill="#e8e8e8" transform="rotate(-30 8 9)"/><path d="M3 3L13 14" stroke="#222" stroke-width="1"/><circle cx="9" cy="11" r="1.5" fill="#333"/></svg>
<div class="a st" style="left:1361px;top:1062px;line-height:11px;transform:scaleX(0.84);transform-origin:0 0">Scale</div>
<div class="a fld" style="left:1384px;top:1055px;width:79px;height:21px"></div>
<div class="a st" style="left:1389px;top:1061px;line-height:11px;transform:scaleX(0.81);transform-origin:0 0">1:29428876</div>
<div class="a" style="left:1444px;top:1056px;width:19px;height:19px;background:#45484c;border:1px solid #505357;border-radius:1px"></div>
<svg class="a" style="left:1450px;top:1064px;" width="7" height="4" viewBox="0 0 7 4"><path d="M0 0H7L3.5 3.5Z" fill="#c8c9ca"/></svg>
<svg class="a" style="left:1476px;top:1058px;" width="12" height="16" viewBox="0 0 12 16"><path d="M3 7V4.5A3 3 0 0 1 9 4.5V7" stroke="#7d7f81" stroke-width="1.6" fill="none"/><rect x="1" y="7" width="10" height="8" rx="1.5" fill="#7d7f81"/></svg>
<div class="a st" style="left:1497px;top:1062px;line-height:11px;transform:scaleX(0.84);transform-origin:0 0">Magnifier</div>
<div class="a fld" style="left:1532px;top:1056px;width:82px;height:20px"></div>
<div class="a st" style="left:1537px;top:1061px;line-height:11px;transform:scaleX(0.81);transform-origin:0 0">100%</div>
<div class="a" style="left:1601px;top:1057px;width:12px;height:18px;background:#3b3e42;border:1px solid #4d5054;border-radius:2px"></div>
<svg class="a" style="left:1603px;top:1060px;" width="8" height="12" viewBox="0 0 8 12"><path d="M0 4L4 0L8 4Z" fill="#aaa"/><path d="M0 8L4 12L8 8Z" fill="#aaa"/></svg>
<div class="a st" style="left:1624px;top:1062px;line-height:11px;transform:scaleX(0.84);transform-origin:0 0">Rotation</div>
<div class="a fld" style="left:1661px;top:1056px;width:82px;height:20px"></div>
<div class="a st" style="left:1666px;top:1061px;line-height:11px;transform:scaleX(0.81);transform-origin:0 0">0.0 °</div>
<div class="a" style="left:1730px;top:1057px;width:12px;height:18px;background:#3b3e42;border:1px solid #4d5054;border-radius:2px"></div>
<svg class="a" style="left:1732px;top:1060px;" width="8" height="12" viewBox="0 0 8 12"><path d="M0 4L4 0L8 4Z" fill="#aaa"/><path d="M0 8L4 12L8 8Z" fill="#aaa"/></svg>
<div class="a" style="left:1750px;top:1059px;width:14px;height:14px;background:#1c1f22"></div>
<svg class="a" style="left:1751px;top:1060px;" width="12" height="12" viewBox="0 0 12 12"><path d="M2.5 6.5L5 10.5L10 1.5" stroke="#eff0f1" stroke-width="1.4" fill="none"/></svg>
<div class="a st" style="left:1769px;top:1062px;line-height:11px;transform:scaleX(0.84);transform-origin:0 0">Render</div>
<svg class="a" style="left:1809px;top:1059px;" width="14" height="14" viewBox="0 0 14 14"><circle cx="7" cy="7" r="6" fill="none" stroke="#9a9c9e" stroke-width="1.2"/><ellipse cx="7" cy="7" rx="2.5" ry="6" fill="none" stroke="#9a9c9e" stroke-width="0.9"/><path d="M1 7H13M2 4H12M2 10H12" stroke="#9a9c9e" stroke-width="0.8"/></svg>
<div class="a st" style="left:1827px;top:1062px;line-height:11px;transform:scaleX(0.84);transform-origin:0 0">USER:100000</div>
<svg class="a" style="left:1897px;top:1058px;" width="16" height="16" viewBox="0 0 16 16"><ellipse cx="8" cy="7" rx="7.5" ry="6" fill="#8a8c8e"/><path d="M9 12L13 16L11 11" fill="#8a8c8e"/><circle cx="4.5" cy="7" r="1.1" fill="#eee"/><circle cx="8" cy="7" r="1.1" fill="#eee"/><circle cx="11.5" cy="7" r="1.1" fill="#eee"/></svg>
<div class="a" style="left:494px;top:136px;width:1426px;height:916px;background:#0e1012"></div>
<div class="a" style="left:495px;top:137px;width:1424px;height:914px;background:#fff"></div>
<svg class="a" style="left:0;top:0;overflow:hidden" width="1920" height="1080" viewBox="0 0 1920 1080"><defs><clipPath id="mc"><rect x="495" y="137" width="1424" height="914"/></clipPath></defs><g clip-path="url(#mc)" fill="none" stroke="#c94040" stroke-width="1" stroke-linejoin="round">
<path d="M1080.0 191.1 1077.3 192.4 1074.6 193.9 1071.5 194.6 1068.2 194.8 1065.2 196.0 1062.6 198.1 1059.8 199.6 1056.7 200.1 1053.8 200.7 1051.3 202.1 1049.0 203.4 1046.9 204.7 1044.5 206.6 1041.9 207.9 1039.0 208.6 1036.5 209.9 1034.6 212.0 1032.9 214.0 1030.6 215.3 1028.3 216.5 1026.7 218.5 1025.5 220.9 1024.1 222.9 1022.6 225.1 1024.3 224.0 1026.5 225.2 1028.7 226.2 1029.3 228.8 1029.6 231.3 1031.0 233.5 1030.6 235.5 1029.4 237.2 1027.9 238.7 1026.4 240.3 1024.5 241.5 1023.1 243.1M1048.1 203.3 1050.2 202.6 1052.7 202.7 1054.6 201.2 1056.0 198.7 1058.2 198.1 1060.6 197.8M1080.0 225.6 1077.4 227.1 1074.7 228.1 1071.7 229.0 1068.6 229.6 1065.8 231.2 1063.6 233.8 1061.1 235.9 1058.1 237.3 1055.1 238.9 1052.4 241.0 1049.6 243.2 1047.1 245.7 1049.1 246.3 1051.1 246.8 1053.3 247.3 1055.8 247.4 1058.4 246.4 1061.1 245.5 1064.1 244.9 1067.1 244.2 1070.2 243.5 1073.4 242.8 1076.7 242.3 1080.0 241.7M1067.5 217.2 1068.0 215.9 1068.5 214.6 1069.3 213.4 1070.1 212.2 1071.3 211.4 1073.0 211.3 1074.3 210.9 1075.5 210.3 1076.7 209.7 1077.7 208.8 1078.8 208.1 1080.0 208.3M1080.0 216.1 1078.5 216.0 1077.1 216.4 1076.0 217.0 1075.0 218.1 1073.9 218.2 1072.6 217.2 1071.6 216.8 1070.7 218.2 1069.7 219.1 1068.9 218.6 1068.2 217.7 1067.5 217.2M1018.3 291.1 1019.8 289.7 1021.0 287.8 1022.9 287.1 1025.1 286.9 1026.9 286.0 1028.7 285.0 1030.4 283.9 1031.7 282.0 1032.9 280.3 1034.6 278.9 1036.3 277.7 1037.4 275.8 1038.1 273.6 1039.4 272.0 1041.7 271.2 1043.7 270.1 1045.5 268.6 1047.3 267.3 1049.1 265.9 1051.0 264.6 1052.5 263.3 1054.0 261.9 1055.7 260.7 1057.7 260.0 1059.5 259.0 1061.2 257.8 1063.2 257.2 1065.3 255.8 1067.2 254.2 1069.4 253.3M1011.0 282.3 1012.3 280.7 1013.6 279.1 1015.2 277.7 1017.1 276.5 1018.5 275.0 1019.7 273.2 1020.9 271.6 1021.7 269.5 1023.1 267.8 1025.0 266.7 1026.8 265.6 1028.7 264.6 1030.8 263.8 1032.5 262.5 1033.7 260.4 1036.3 262.9 1036.6 265.5 1037.0 268.0 1035.9 270.3 1034.9 272.5 1033.6 274.4 1032.2 276.4 1030.9 278.4 1028.3 279.3 1026.3 279.7 1024.1 279.0 1021.9 278.6 1020.1 279.8 1018.3 281.1 1016.3 281.5 1013.5 282.0 1011.0 282.3M1032.8 294.4 1035.1 295.0 1037.0 296.4 1039.1 297.5 1041.1 298.7 1043.1 298.5 1045.2 298.6 1047.3 298.5 1049.2 298.0 1051.2 297.5 1053.2 297.2 1055.2 296.8 1056.5 294.3 1056.5 291.9 1057.3 290.0 1059.2 291.8 1060.2 293.5 1061.4 295.1 1062.6 296.7 1063.2 298.7 1065.1 300.3 1067.1 301.1 1069.2 301.9 1071.3 302.4 1073.9 301.7 1076.1 301.9 1078.1 302.9 1080.0 304.2M1037.2 316.7 1037.4 315.0 1037.9 313.6 1038.2 312.2 1038.3 310.8 1039.0 309.6 1039.7 308.3 1040.9 307.4 1042.5 307.3 1043.9 307.3 1045.3 306.9 1046.6 306.6 1048.0 306.7 1049.6 307.5 1050.9 308.4 1051.6 309.9 1052.2 311.1 1053.1 312.0 1053.8 313.2 1054.2 314.6 1054.5 316.1 1054.2 317.7 1053.6 319.2 1052.8 320.6 1051.8 322.0 1050.8 322.9 1050.1 324.5 1049.0 325.8 1047.1 325.4 1045.4 324.2 1044.2 324.1 1042.9 324.0 1041.7 323.3 1040.7 322.1 1039.8 320.6 1038.8 318.8 1037.2 316.7M959.2 259.7 960.6 258.2 962.6 257.5 964.0 256.0 965.0 254.0 966.5 252.6 968.2 251.3 969.8 250.1 971.5 249.1 973.3 248.0 974.8 246.7 976.4 245.4 978.1 244.3 979.9 243.3 981.5 242.0 982.8 240.4 984.3 239.0 986.2 238.0 988.3 237.5M974.4 248.6 975.9 246.8 977.2 244.8 979.4 243.9 982.1 243.7 984.0 242.4 985.5 240.7 987.1 239.1 986.2 241.0 985.5 243.1 984.2 244.9 982.9 246.7 981.7 248.5 980.4 250.2 981.6 248.5 983.5 247.3 985.3 246.1 987.0 244.7 988.7 243.2 991.0 242.8 993.5 242.6 995.2 241.2 996.7 239.4M995.3 244.4 997.9 244.9 1000.4 245.7 1002.6 246.9 1001.9 250.1 1001.0 252.1 1000.3 254.3 999.5 256.3 1000.9 255.8 1003.0 255.9 1004.8 254.6 1006.4 253.0 1008.4 252.7 1010.6 252.8M938.9 278.6 940.3 277.2 942.0 276.0 942.9 274.3 943.4 272.4 944.6 271.1 946.5 270.6 948.0 269.9 949.6 269.6 951.0 269.4 952.0 268.6 953.0 268.0 953.9 267.5 952.6 267.9 952.1 269.2 951.9 271.0 951.1 272.5 949.8 273.6 948.5 274.8 947.3 276.0 946.0 277.3 944.3 277.8 942.3 277.6 940.9 278.1 938.9 278.6M911.9 300.0 913.4 298.5 915.5 297.6 917.1 296.3 918.8 295.0 920.3 293.5 921.6 291.9 923.0 290.3 924.4 288.8 925.9 287.3 927.4 285.8 928.9 284.3 930.3 282.8 931.7 281.2 932.9 279.5 934.2 277.8M903.6 322.2 904.4 320.1 905.4 318.4 906.9 317.0 908.7 315.9 910.1 314.4 911.5 312.9 912.9 311.5 914.7 310.5 916.5 309.4 918.1 308.1 919.8 306.9 920.9 305.2 921.7 303.1 923.1 301.6 925.1 300.8 926.4 299.3 927.2 297.2M910.6 319.4 912.4 318.4 914.3 317.5 916.3 316.9 918.3 316.3 920.2 315.7 922.2 315.1 924.2 314.5 926.6 314.7 928.8 314.7 931.1 314.5 933.3 314.5 935.5 314.0 937.6 313.5 939.7 312.9 941.8 311.8 943.9 311.1 945.5 309.6 947.0 308.1 948.5 306.6 950.1 305.2 951.1 303.2 951.5 300.8 952.4 299.1 954.2 297.8 955.6 296.3 956.9 294.7 958.2 293.0 959.0 291.2 959.9 289.3 961.3 287.9 962.8 286.3 964.3 284.6 965.5 282.7 966.9 281.0 968.2 279.1 969.5 277.3 971.5 276.3 972.9 274.4 972.9 272.2 973.1 270.0M978.6 288.9 979.1 291.1 979.4 293.3 979.3 295.6 978.7 297.9 978.8 300.1 981.8 301.4 984.0 301.9 982.6 302.7 981.2 304.3 979.5 305.3 977.8 306.4 979.8 306.7 981.6 308.6 983.3 310.6 980.5 311.2 978.3 311.4 976.2 312.3 974.2 313.1 976.7 314.9 979.4 314.9 981.6 316.2 979.2 317.0 977.3 317.7 975.3 318.3 973.4 319.2 971.9 320.8 970.3 322.2M874.4 344.4 875.1 342.3 875.9 340.3 877.6 339.0 880.2 338.4 881.7 336.8 882.5 334.8 883.5 333.0 884.6 331.2 885.7 329.5 886.9 327.8M877.2 348.6 879.1 347.4 880.7 346.0 881.8 344.1 882.3 341.7 883.6 340.0 885.0 338.4 885.5 341.8 884.8 344.6 885.4 342.6 887.0 341.2 888.6 339.7 890.3 338.5 892.4 337.6 894.0 336.2 895.5 334.8 897.3 333.7 899.3 333.0 901.2 332.2 903.0 331.1 905.0 330.6M986.9 362.5 987.6 359.7 988.3 356.8 989.3 354.3 990.6 351.8 991.4 349.3 991.5 346.6 992.3 344.2 994.0 342.2 995.7 340.4 996.5 338.0 997.3 335.8 998.6 333.8 1000.1 332.0 1001.7 330.2 1003.3 328.6 1005.0 326.9 1006.3 324.7 1007.8 322.8 1010.1 321.7 1012.5 320.8 1014.6 319.4 1016.6 317.7 1018.9 316.4 1021.1 315.0 1022.4 319.4 1020.8 322.3 1019.7 325.7 1020.5 329.3 1021.7 332.9 1022.0 336.7 1022.1 340.6 1022.3 342.6 1022.2 344.7 1022.6 346.8 1023.3 348.8 1024.0 350.8 1024.8 352.8 1025.7 354.7 1026.2 356.8 1026.6 359.0 1027.2 361.1 1028.6 363.9 1030.3 366.5 1032.0 369.2 1033.9 371.7 1036.9 373.3 1040.0 374.3 1042.5 376.2 1044.9 378.4 1047.9 379.7 1051.2 380.2 1054.5 380.8 1057.9 381.3 1060.5 381.4 1063.1 382.0 1065.6 382.5 1067.9 382.1 1070.0 381.2 1072.0 380.6 1073.9 380.0 1075.5 379.4 1077.1 379.0 1078.5 378.5 1079.5 377.6 1080.0 376.4M993.9 372.2 996.2 372.5 998.5 372.7 1000.8 373.1 1003.1 373.6 1005.4 373.8 1007.8 373.6 1009.8 374.3 1011.7 375.2 1013.7 376.1 1015.7 376.8 1017.7 377.5 1019.6 378.6 1021.3 380.2 1023.2 381.2 1025.5 381.9 1027.7 382.8 1029.6 384.1 1031.5 385.0 1033.4 385.8 1035.3 386.6 1037.4 386.8 1039.7 386.4 1041.7 387.0 1043.4 388.2 1045.2 389.1 1043.0 388.6 1040.8 388.6 1038.8 389.2 1036.7 389.8 1034.8 390.8 1032.9 392.4 1033.4 393.9 1033.1 396.0 1032.8 398.1 1031.9 400.1 1032.9 401.5 1034.6 402.8 1036.4 404.0 1037.8 405.6 1038.9 407.4 1040.3 409.0 1041.9 410.4 1043.6 412.0 1044.6 414.3 1045.8 416.4 1047.3 418.2 1048.9 420.0 1051.7 420.0 1053.8 419.8 1055.8 419.3 1057.7 417.6 1057.6 415.7 1059.1 413.9 1060.4 412.0 1061.1 409.9 1062.1 408.0 1062.9 405.9 1063.2 403.5 1064.3 401.6 1066.6 400.3 1068.5 400.2 1070.5 399.5 1072.5 398.8 1074.2 397.2 1075.8 395.4 1077.9 395.1 1080.0 394.4M902.2 369.4 904.5 368.7 906.3 367.4 907.7 365.6 908.7 363.3 910.3 366.1 910.0 368.5 910.0 370.8 910.1 373.1 910.3 375.5 910.7 377.8 910.8 375.6 911.4 373.4 911.9 371.3 912.6 369.2 913.5 367.2 914.3 365.1 915.6 363.2 916.7 361.3 918.2 361.3 920.5 360.5 922.5 361.2 924.4 362.5 926.3 361.2 927.9 359.7 929.5 358.2 930.9 356.3 934.4 358.1 936.3 360.4 935.9 358.7 937.0 356.6 938.3 354.5 939.2 352.3 939.8 350.0 941.1 348.3 942.0 346.2 943.0 344.2 945.2 343.2 947.7 342.5 945.6 343.8 946.1 345.7 946.3 347.7 946.2 349.8 946.3 351.8 947.8 353.6 949.0 355.5 949.0 357.6 948.9 359.6 949.2 361.6 949.8 363.5 949.8 365.5 948.7 367.6 948.4 369.7 949.3 371.6 949.4 373.6M871.7 377.8 869.7 379.0 868.2 380.6 867.1 382.6 866.5 384.9 865.3 386.7 864.0 388.5 862.7 390.2 860.3 391.2 858.3 392.3 859.9 395.4 861.8 396.9 863.1 398.8 862.7 400.6 862.7 402.6 863.6 404.7 863.9 406.7 863.8 408.7 863.6 410.7 862.8 412.7 861.6 414.6 861.6 416.6 862.8 418.7 863.6 420.7 864.6 422.7 864.7 425.0M888.3 388.9 890.6 389.5 893.0 388.9 895.2 389.9 897.0 391.8 899.3 392.4 900.4 393.8 901.1 396.0 900.2 398.3 899.5 400.7 900.3 402.8 899.9 404.9 898.9 407.0 898.1 409.2 897.0 411.3 894.8 410.2 893.0 409.2 891.1 408.3M889.7 418.1 890.7 419.9 892.0 421.7 893.0 423.6 894.0 425.4 894.9 427.4 894.3 430.2 893.7 432.5 893.3 434.7 892.9 437.0 892.2 439.2 890.7 441.2 889.4 443.0 888.1 444.7 886.9 446.6 885.6 448.3 884.2 450.0M818.9 450.0 819.5 448.1 819.8 446.0 820.7 444.2 821.8 442.5 822.6 440.6 822.9 438.5 823.6 436.6 824.8 434.9 825.8 433.2 826.4 431.2 826.9 429.3 828.2 427.6 830.2 426.3 831.2 424.6 831.8 422.6 832.5 420.7 832.8 418.6 833.3 416.6 834.4 414.9 835.7 413.3 836.8 411.6 838.4 410.1 839.1 408.2 838.7 405.7 839.0 403.7 840.9 402.3 842.2 400.7 842.5 398.6M821.7 450.0 822.7 448.3 823.0 446.2 823.9 444.4 824.9 442.6 825.8 440.8 826.9 439.0 827.8 437.3 829.1 435.6 830.2 433.9 830.3 431.7 830.3 429.5 831.4 427.8M824.4 450.0 825.3 448.1 825.9 446.0 826.7 444.0 827.4 442.1 828.1 440.1 828.5 437.9 829.1 435.9 830.1 434.0 831.3 432.2 832.8 430.6M827.2 450.0 827.5 447.9 827.9 445.9 828.6 444.1 829.3 442.2 830.2 440.4 832.2 439.1 833.5 437.4 834.0 435.4 834.2 433.3M832.8 450.0 832.9 447.9 833.3 446.0 834.0 444.0 834.8 442.2 835.4 440.2 835.4 438.1 835.8 436.1 836.8 434.3 837.6 432.5 838.0 430.5 838.5 428.3 839.7 426.5 841.6 424.9 842.6 423.0 843.4 421.0 844.2 419.0 844.3 416.7 844.6 414.6 845.1 412.4 845.3 410.2 846.5 408.3 848.4 406.6 849.1 404.5 848.7 402.1 849.4 400.0M838.3 441.7 839.0 439.6 839.8 437.7 840.7 435.7 841.5 433.7 842.2 431.7 842.5 429.5 843.1 427.5 844.2 425.5 845.1 423.4 845.1 421.1 845.0 418.7 845.7 416.5 847.0 414.6 848.1 412.5M846.7 450.0 846.4 447.8 846.5 445.7 847.2 443.9 848.3 442.0 848.9 440.1 849.3 438.1 849.9 436.2 850.9 434.4 851.9 432.6 852.4 430.6 852.7 428.6 853.2 426.6 854.0 424.7 854.5 422.8 854.7 420.7 855.0 418.7 855.5 416.8 856.4 414.9 857.3 413.0 858.4 411.1 858.8 409.0 858.8 406.7 859.6 404.7 860.6 402.8M941.7 444.4 941.5 441.4 941.5 438.8 941.5 436.4 941.2 433.9 942.3 432.0 944.7 431.1 946.4 430.4 947.9 429.6 949.5 429.1 951.1 428.4 953.0 428.0 955.0 428.2 955.3 430.1 955.8 432.0 955.8 433.8 955.7 435.5 956.4 437.2 956.5 439.1 955.1 440.4 953.4 441.3 952.0 442.4 950.5 443.3 948.6 443.9 946.5 443.8 943.9 443.5 941.7 444.4M960.6 448.6 962.1 447.3 963.2 445.6 964.3 443.9 965.4 442.2 966.4 440.5 968.4 440.8 970.6 441.4 972.8 442.0 975.0 442.7 976.9 443.8 978.8 444.8 980.7 445.9 982.4 447.4 984.2 448.6M803.6 497.2 804.5 495.3 805.4 493.4 806.2 491.5 806.9 489.5 807.6 487.5 808.5 485.6 809.2 483.7 809.7 481.6 810.2 479.6 810.4 477.4 810.4 475.2 811.7 473.4 813.7 471.9 814.7 470.1 815.3 468.1 816.0 466.1 816.4 464.0 816.9 461.9 817.7 459.9 818.6 458.0 819.5 456.0 820.5 454.1 821.0 452.0 821.7 450.0M813.3 466.7 813.5 464.4 814.3 462.4 815.4 460.6 817.0 458.9 817.7 456.9 817.8 454.6 818.9 452.8M816.1 465.3 816.9 463.3 817.6 461.3 818.5 459.4 819.5 457.6 820.5 455.7 821.7 454.0 822.5 452.1 823.1 450.0M818.9 488.9 819.0 486.6 819.6 484.6 820.4 482.6 821.4 480.7 822.4 478.8 824.0 477.1 825.0 475.2 825.5 473.3 826.2 471.4 827.6 469.9 829.0 468.4 829.8 466.6 830.1 464.3 831.1 462.6 832.3 461.0 833.4 459.3 834.8 457.8 835.6 456.0 836.8 454.1 837.9 452.2 838.3 450.0M821.7 486.1 823.3 484.6 825.2 483.4 826.9 482.0 828.6 480.5 830.6 478.4 832.7 476.3 834.6 475.4 836.2 473.9 837.9 472.7 838.7 471.6 840.4 470.0 840.6 467.9 840.0 465.7 840.5 463.7 843.4 463.9 845.7 463.8 847.8 463.0 849.8 462.3 848.5 459.0 846.2 457.5 845.4 455.3 845.1 452.9 846.7 450.0M868.9 461.1 871.0 461.6 873.3 461.9 875.4 462.5 877.5 463.1 878.2 461.7 880.6 460.6 882.3 459.0 881.8 456.3 881.3 454.0 882.2 452.0 882.8 450.0M864.7 470.8 867.4 471.7 870.5 471.3 871.8 473.6 871.9 475.9 872.9 477.7 874.5 479.0 875.8 480.6 873.7 480.9 871.6 481.4 869.9 482.6 868.7 484.8 868.0 486.7 867.7 488.8 866.6 490.6 866.2 492.6 866.5 494.8 867.8 496.7 868.9 498.6 870.5 500.3 872.2 501.9 873.4 503.8 874.5 505.7 875.5 507.7 875.5 510.3 875.9 512.5 876.6 514.6 877.4 516.6 879.6 516.8 882.0 517.1 884.3 517.4 882.8 515.9 882.3 513.6 882.2 511.2 881.4 509.6 880.3 507.9 879.2 506.2 878.7 504.1 879.7 502.2 879.4 500.0 878.2 497.8 878.4 495.7 879.9 493.8 880.7 491.7 878.7 489.2 876.7 487.5 874.4 486.1M963.3 483.3 963.1 485.5 962.9 487.7 963.7 489.7 965.1 491.6 966.3 493.5 967.2 495.6 968.2 497.8 969.2 499.9 970.1 501.7 970.4 503.9 970.5 506.2 971.6 507.9 973.2 509.4 974.3 511.2 976.2 510.0 978.0 508.9 979.9 508.1 980.7 505.9 981.5 503.6 982.2 501.2 981.4 499.6 980.4 497.8 979.8 495.8 979.3 493.8 978.8 491.8 979.3 489.5 979.5 487.2 978.9 485.1 978.1 482.6 978.5 480.2 979.6 477.8 979.2 475.5 977.7 473.6 977.1 471.6 977.2 469.4M953.6 455.6 956.0 454.8 958.7 454.8 960.9 453.5 961.9 450.0M984.2 450.0 983.9 452.5 984.3 454.8 985.6 456.9M813.3 508.3 814.7 510.1 815.0 512.5 816.3 514.4 817.8 516.1 818.9 518.0 818.6 520.2 818.7 522.3 819.1 524.4 819.4 526.4 820.1 528.5 820.8 530.5 821.3 532.8 821.9 535.1 821.9 537.4 820.6 539.9 820.3 542.2 821.8 544.4 822.7 546.8 822.3 549.1 821.8 551.4 821.8 553.7 822.1 556.0 822.1 558.3 824.7 559.2 823.5 557.5 823.7 555.1 823.7 552.6 824.2 550.8 824.7 548.7 824.4 546.6 823.3 544.4 823.4 542.3 824.3 540.3 824.7 538.2 824.3 536.1 825.9 534.6 827.8 533.8 829.7 533.1 831.4 531.9M828.6 504.2 831.5 504.3 834.2 505.6M828.6 504.2 828.4 506.2 827.1 508.2 826.7 510.3 826.3 512.3 826.2 514.4 827.0 516.6 827.7 518.7 828.6 520.7 829.3 522.8 829.2 524.9 831.4 526.4M795.3 538.9 795.6 541.1 795.3 543.2 794.9 545.3 794.6 547.3 794.1 549.4 793.2 551.4 792.6 553.4 791.8 555.4 791.3 557.6 791.4 559.8 791.5 561.9 791.6 564.1 792.1 566.2 792.1 568.4 792.0 570.5 791.9 572.7 791.6 574.8 791.4 576.9 791.4 579.1 791.5 581.2 791.5 583.4 791.7 585.3 791.9 587.3 792.5 589.3 792.8 591.3 792.6 593.4 792.5 595.4 791.8 597.5 790.9 599.6 791.5 601.6 793.1 603.5 793.4 605.5 792.9 607.6 792.7 609.6 792.7 611.6 792.6 613.7 792.5 615.7 792.3 617.7 792.8 619.7 794.1 621.7 794.4 623.7 794.4 625.7 794.5 627.7 794.7 629.8 794.9 631.9 794.9 634.0 794.9 636.1 795.0 638.2 795.1 640.3 795.1 642.4 794.4 644.5 794.3 646.9 794.6 649.2 795.0 651.5 795.2 653.8 795.7 656.1 796.7 658.3M793.9 544.4 793.4 546.5 793.0 548.6 793.4 550.6 794.2 552.6 794.4 554.6 794.3 556.7 794.3 558.7 795.3 560.7 796.1 562.7 795.8 564.8 795.2 566.8 794.9 568.9 794.1 571.0 794.0 573.0 794.3 575.0 794.3 577.1 794.2 579.1 794.1 581.2 793.9 583.3 793.6 585.4 794.0 587.5 795.3 589.6 795.5 591.7 795.6 593.8 795.7 595.9 795.5 598.0 795.4 600.0 794.9 602.1 794.3 604.2 794.1 606.2 793.7 608.3 793.5 610.4 793.0 612.5 792.7 614.5 793.0 616.6 793.4 618.8 793.6 620.9 793.9 622.9 794.0 625.0 793.9 627.1 794.1 629.2 794.8 631.3 795.1 633.3 795.1 635.4 795.1 637.5 795.9 639.6 796.8 641.6 796.5 643.7 795.3 645.9 795.6 647.9 796.1 650.0M805.8 558.2 806.1 555.7 806.6 553.5 807.7 551.8 809.1 550.7 810.5 550.1 812.0 550.6 813.1 551.2 814.1 552.0 815.0 553.1 816.4 554.1 818.0 555.7 818.6 558.1 818.9 561.1 818.9 564.0 818.0 567.0 817.5 569.9 817.0 572.6 816.4 575.3 815.9 577.9 815.4 580.2 814.6 582.3 813.7 584.2 812.4 585.6 810.5 586.1 809.3 585.5 807.7 585.1 806.1 583.6 805.7 581.1 805.6 578.3 805.4 575.4 805.5 572.3 805.7 569.2 806.6 566.2 807.1 563.4 806.8 560.7 805.8 558.2M823.7 590.2 823.8 588.6 824.2 586.9 825.2 585.7 826.9 585.2 827.6 584.7 828.0 584.0 828.6 583.7 829.4 583.3 830.6 583.6 831.9 584.6 833.2 586.1 833.7 588.6 833.2 590.9 833.0 592.8 832.5 594.5 832.1 596.0 832.1 597.4 831.8 598.7 831.3 599.8 830.7 600.7 829.6 601.0 828.6 600.4 828.1 600.0 827.8 599.2 827.6 598.6 826.3 598.6 825.2 598.3 824.6 597.6 824.0 596.9 824.0 596.0 824.3 595.0 824.3 594.1 824.3 593.2 824.3 592.3 824.7 591.3 823.7 590.2M853.6 547.2 855.3 548.4 857.3 549.1 859.3 549.8 860.2 552.1 860.3 554.4 859.2 556.8 859.0 559.0 860.3 561.1 860.8 563.4 859.9 565.5 858.9 567.7 859.0 569.9 859.7 572.3 859.6 574.5 859.4 576.8 859.1 579.0 858.0 581.1 857.3 583.3 855.0 584.7M885.6 527.8 882.8 528.7 880.2 530.0 880.6 531.3 880.3 533.4 880.0 535.5 879.4 537.5 879.1 539.6 878.4 541.6 878.1 544.0 877.8 546.3 877.4 548.6 877.9 550.9 879.3 553.2 879.5 555.6 878.1 557.6 876.9 559.4 875.8 561.1M893.9 547.2 894.7 549.3 895.1 551.4 894.9 553.5 894.3 555.6 895.1 557.1 895.5 559.3 896.3 561.2 897.4 562.8 898.6 564.5 901.2 565.4 903.4 565.9 905.4 566.8 907.4 567.9 910.2 567.0 912.0 565.9 913.9 564.9 913.3 566.2 914.3 568.5 914.7 570.8 915.1 573.1 914.8 575.4 913.8 577.9 912.4 579.2 911.3 581.5 912.3 584.1 914.1 585.5 914.7 587.5M909.5 523.6 909.9 525.6 910.3 527.7 910.8 529.8 911.4 531.8 912.8 533.5 914.4 535.4 913.9 538.6 912.8 540.6 911.8 542.6 911.1 544.6 909.8 546.3 908.3 547.8 906.3 548.8 905.3 550.6 905.4 553.0 906.1 550.8 908.5 550.8 910.7 550.5 911.9 548.7 912.9 546.6 915.3 548.6 916.5 550.7 917.7 552.6 918.4 555.0 919.6 557.0 920.9 558.9 922.3 556.2 921.7 554.1 920.8 552.1 920.3 550.1 919.4 548.0 919.2 546.0 919.5 543.8 919.3 541.7 918.7 539.6 918.1 537.6 918.2 535.4 918.6 533.1 917.5 530.4 915.5 527.9 914.0 527.4 912.4 526.1 910.7 524.9 909.5 523.6M886.9 576.4 889.3 575.5 891.5 574.2 892.9 574.8 895.3 574.5 897.2 575.2 898.8 577.5 899.9 579.2 900.9 581.0 901.9 582.7 900.4 586.2 898.4 588.6 896.9 589.2 895.0 591.2 892.7 592.1 893.1 593.7 893.7 595.7 894.4 597.6 896.6 600.1 899.1 601.7 900.7 603.6 901.8 605.8 902.8 608.1 901.7 610.4 899.7 611.7 898.3 613.3 896.5 613.9 893.8 615.0 893.5 617.6 893.4 620.0 892.5 622.2M802.2 601.4 804.3 600.8 806.4 600.0 807.6 603.7 806.6 606.3 806.7 608.8 806.7 611.3 807.2 613.6 808.2 615.7 809.1 617.9 809.3 620.2 809.4 622.5 811.1 624.3 813.5 625.2 814.8 626.8 815.5 628.7 816.4 630.5 817.1 632.5 817.9 634.3 818.5 636.4 817.4 638.2 817.1 640.4 816.8 642.6 816.7 644.9 817.4 647.2 816.4 649.2 815.1 651.0 813.7 652.7 811.9 654.2M802.2 601.4 802.0 603.6 803.0 605.8 802.7 607.9 801.6 610.1 801.4 612.3 801.5 614.5 801.5 616.7 801.8 618.9 802.0 621.0 802.4 623.1 802.9 625.1 803.3 627.2 804.0 629.2 804.4 631.3 805.3 633.3 805.2 635.6 804.9 637.8 804.7 640.1 804.3 642.3 804.0 644.5 803.5 646.8 802.5 649.0 802.4 651.3 803.4 653.8 803.2 656.1 802.2 658.3M852.2 600.0 853.8 601.9 855.1 604.0 855.6 606.3 855.6 608.9 856.3 611.1 857.4 613.1 858.2 615.1 857.9 617.5 857.9 619.9 857.4 621.4 857.0 623.6 856.4 625.8 855.7 628.0 855.3 630.3 854.4 632.1 852.6 633.9 850.4 632.1 849.1 630.5 848.1 628.7 847.1 627.0 849.0 624.0 850.8 622.2M846.7 638.9 849.4 637.8 852.2 637.3 854.4 639.5 856.2 641.9 856.4 643.8 856.6 645.9 856.9 648.0 857.2 650.1 858.1 652.2 858.9 654.1 859.7 656.0 861.8 658.0 863.9 659.6 865.9 661.3 867.3 663.2 868.2 665.3 867.7 667.8 867.4 670.2 868.6 672.3 869.2 674.6 868.8 676.9 868.1 679.2 867.8 681.5 868.0 683.8 867.8 686.1 867.5 688.5 867.3 690.8 868.2 693.1 869.2 695.3 869.5 697.6 869.6 699.9 869.6 702.2 869.6 704.4 869.6 706.7 869.8 708.9 869.9 711.1 867.1 712.1 864.7 712.1 862.9 713.1 860.3 716.4 858.8 714.7 856.6 713.2 854.7 711.5 853.3 708.5 852.4 710.2 850.5 711.4 848.4 712.5 847.3 714.3 846.5 716.6 847.0 718.9 847.8 721.0 848.2 723.2 847.6 725.6 847.2 727.9 846.4 729.6 845.6 731.7 844.3 733.7 842.8 735.5 844.1 733.7 841.8 732.3 840.5 730.6 840.2 728.4 839.9 726.2 839.4 724.1 839.1 721.9 838.1 719.7 837.1 717.6 836.1 715.5 835.2 713.4 834.2 711.6 832.1 710.3 830.2 708.9 832.5 706.2 834.5 705.1 836.2 703.6 837.7 702.0 840.6 704.3 841.9 706.4 843.7 705.5 846.8 706.0 846.6 703.0 845.1 701.4 843.4 699.9 842.4 697.9 841.8 695.7 840.6 693.9 838.4 692.6 836.7 690.9 835.9 688.6 836.9 686.8 836.6 684.5 836.3 682.2 836.5 680.0 836.9 677.8M846.7 638.9 846.1 640.9 844.6 642.5 843.6 644.3 842.7 646.1 841.9 648.1 841.6 650.2 841.5 652.1 840.8 654.1 840.3 656.0 840.1 658.1 840.1 660.1 839.7 662.1 839.2 664.1 838.8 666.1 838.4 668.2 837.7 670.2 836.9 672.2M852.3 655.8 852.4 654.4 852.8 653.1 853.3 652.2 854.2 651.6 854.5 651.1 854.5 650.1 855.3 649.5 856.2 649.7 857.1 650.2 858.0 650.6 859.0 651.2 859.5 652.5 859.2 654.5 859.5 656.0 860.2 657.4 860.6 658.9 861.3 660.5 861.8 662.1 861.5 663.6 861.1 665.0 860.4 666.2 859.4 667.0 858.6 667.7 857.8 668.0 857.1 667.5 856.5 666.8 856.0 666.1 855.0 665.6 853.8 664.9 853.4 663.7 853.2 662.4 853.2 661.1 854.0 659.6 854.2 658.3 853.7 656.9 852.3 655.8M913.3 609.7 916.3 608.6 917.1 610.4 917.6 612.7 917.7 615.0 918.2 617.3 919.1 619.4 920.2 621.1 921.0 623.0 921.9 624.9 922.3 627.0 922.6 629.1 923.4 631.1 923.7 633.1 924.4 635.3 926.1 637.2 927.1 639.3 927.9 641.5 928.3 643.9 927.9 646.3 927.3 648.7 927.9 651.0 929.0 653.2 929.5 655.5 930.8 656.7 932.0 658.6 932.0 661.2 932.3 663.6 933.9 665.1 935.7 666.6 937.1 668.1 938.2 670.0 939.8 671.4 941.9 672.2 943.6 673.4 944.7 675.4 946.0 677.2 947.4 678.5 949.1 679.9 950.5 681.6 952.1 683.1 953.4 684.8 954.9 686.4 956.1 688.2 956.8 690.5 957.7 692.7 959.0 694.6 958.4 696.5 957.9 698.5 957.4 700.6 957.8 702.8M922.9 613.6 924.8 612.8 926.8 612.0 928.5 610.9 931.3 611.2 933.6 612.1 935.8 613.2 937.5 612.6 939.7 612.3 940.5 614.5 940.9 616.6 941.2 618.8 942.5 620.5 944.6 621.9 944.9 624.4 944.2 626.7 943.9 628.9 943.4 631.1 943.0 633.3 942.5 635.2 941.9 637.3 942.1 639.5 943.1 641.8 939.7 642.5 937.8 640.0 936.8 637.9 936.9 635.3 936.7 632.8 934.6 630.9 932.9 629.5 931.0 628.4 928.7 627.7 927.4 625.8 925.7 624.0 924.4 622.1 924.6 619.4 924.9 616.4 922.9 613.6M902.2 633.3 903.3 635.4 904.3 637.6 906.0 639.2 908.1 640.6 909.1 642.7 909.2 645.3 909.9 647.6 911.6 649.0 913.1 650.6 913.8 652.5 915.4 654.4 917.0 656.5 918.3 658.9 920.1 660.9 921.9 662.7 923.8 664.5 926.6 665.9 928.6 668.1M892.5 643.1 892.1 645.4 891.9 647.7 891.6 650.1 890.9 652.5 889.9 654.6 888.7 656.6 887.5 658.6 887.4 660.6 887.4 662.9 887.8 665.2 888.1 667.5 889.2 669.6 891.7 671.1 892.8 673.1 893.0 675.6 893.7 677.9 894.4 679.9 895.1 681.8 896.8 683.3 899.1 683.2 900.7 684.5 901.9 686.7 904.4 685.8 905.7 683.8 907.3 682.4 908.5 681.4 909.9 679.8 910.8 677.9 913.4 677.2 916.2 676.6 916.7 678.8 917.7 681.1 919.2 683.2 918.7 685.6 917.8 687.6 919.9 687.7 922.1 688.4 924.4 688.9M881.4 677.8 881.7 677.4 882.3 677.2 882.9 677.0 883.9 676.5 884.7 677.0 884.9 678.4 885.3 679.3 886.1 679.8 886.9 680.5 887.7 681.2 888.6 682.0 888.7 683.2 889.0 685.3 889.9 687.1 891.0 688.8 892.1 690.4 893.7 691.8 894.7 693.7 895.7 695.7 896.8 697.6 897.3 699.8 897.7 701.8 898.7 703.6 900.2 705.2 901.2 707.3 901.8 709.4 902.5 711.5 902.9 713.7 904.0 714.8 905.8 715.8 907.8 716.4 909.5 717.5 910.8 719.1 913.2 716.6 912.6 714.6 912.0 712.5 910.8 710.6 909.4 708.7 909.0 706.5 909.3 704.1 908.7 702.0 907.0 700.2 907.4 697.0 909.1 694.4 910.5 691.8 911.2 689.1 909.3 686.5 907.1 684.9 905.0 683.3M966.1 669.4 964.7 669.0 963.2 668.0 961.5 668.8 960.3 670.7 959.0 671.4 957.0 671.3 955.3 672.3 954.0 673.8 952.9 675.7 952.6 678.1 952.8 680.6 952.9 683.4 952.8 684.1 953.3 684.9 954.7 685.1 955.5 685.5 955.4 686.9 955.9 688.3 957.3 688.3 958.7 688.1 960.0 688.7 961.3 689.8 962.9 690.1 964.7 690.1 966.1 689.5 966.7 687.9 967.0 686.6 968.2 686.5 969.7 686.3 970.5 685.4 971.3 684.5 971.6 683.2 970.6 681.5 970.3 680.2 971.1 679.1 971.7 677.8M957.8 694.4 959.7 693.8 961.2 692.1 963.2 691.4 965.6 690.8 967.4 689.4 968.6 687.1 970.2 685.3 972.3 684.4 974.4 683.3 976.9 682.9 979.5 682.5 981.6 681.2 983.5 679.1 985.7 678.0 988.1 677.1 990.0 679.4 990.8 681.5 991.7 683.6 993.0 685.5 994.3 687.3 994.9 689.8 995.8 692.2 996.2 694.6 996.3 697.1 997.5 697.5 999.2 698.5 1001.0 699.5 1002.2 701.3 1004.2 703.1 1006.4 703.5 1008.7 703.6 1011.0 704.2 1013.1 705.1 1015.6 704.9 1017.5 703.4 1019.4 702.2 1021.6 702.6 1021.9 705.0 1023.2 706.6 1025.2 707.9 1026.6 709.6 1027.4 711.9 1028.5 713.9 1029.8 715.9 1031.1 717.8 1032.7 719.5 1033.9 721.3 1034.4 723.4 1034.3 725.7 1035.1 727.7 1036.4 729.5 1037.4 731.4 1038.3 733.3M977.0 543.8 977.2 542.7 977.7 541.9 979.2 541.3 981.1 540.8 983.6 540.9 986.4 541.9 989.5 542.5 993.2 542.3 997.2 542.4 999.2 543.7 1001.1 545.2 1003.4 545.4 1005.7 545.2 1008.2 545.5 1010.6 545.6 1012.1 548.9 1012.2 552.2 1012.0 555.4 1012.3 558.5 1012.4 561.7 1011.9 564.8 1011.4 568.0 1010.0 570.9 1007.6 573.2 1005.6 575.6 1004.6 578.6 1003.2 581.4 1000.2 581.4 998.0 580.4 996.0 580.7 993.8 581.3 991.6 580.6 989.8 579.1 987.8 577.6 986.1 575.8 984.3 574.0 982.0 572.7 979.5 571.3 977.4 569.2 977.0 567.2 976.4 565.2 975.4 563.2 974.8 561.1 974.1 559.0 973.6 556.9 973.6 554.6 973.7 552.3 973.9 550.0 974.2 547.7 974.7 545.4 977.0 543.8M1071.7 573.6 1070.3 570.6 1067.6 568.4 1065.8 566.0 1063.9 563.8 1061.8 561.7 1059.9 559.3 1057.6 557.4 1054.5 556.7 1051.5 556.1 1048.9 554.8 1046.1 553.7 1043.5 552.5 1040.7 552.4 1037.7 553.1 1035.3 554.5 1033.2 555.8 1031.1 556.9 1029.2 558.3 1028.0 560.1 1027.1 562.2 1026.0 564.1 1024.8 566.1 1024.3 568.4 1024.2 570.8 1025.0 573.9 1026.6 576.6 1028.3 579.1 1029.3 581.7 1030.4 584.4 1032.2 586.4 1034.4 588.2 1036.7 589.7 1039.3 590.7 1041.8 591.7 1043.8 593.9 1046.3 595.6 1049.4 594.7 1051.7 593.3 1053.9 592.6 1055.9 591.6 1057.8 590.4 1059.5 588.9 1061.3 587.2 1063.8 585.6 1066.1 583.5 1068.2 580.8 1070.5 577.8 1071.5 575.9 1072.4 574.0 1071.9 574.9 1073.3 574.8 1074.2 574.6 1075.0 574.3 1075.7 573.7 1076.4 573.0 1076.9 572.1 1077.8 571.8 1079.2 572.0 1079.9 571.6 1080.0 571.1 1080.0 570.8M1071.7 573.6 1071.3 575.9 1070.6 578.1 1071.4 580.0 1072.6 581.6 1073.8 582.8 1075.6 583.4 1076.9 584.1 1077.3 585.7 1077.9 587.0 1079.2 586.8 1080.3 586.5 1080.0 587.5M987.7 612.2 988.3 610.3 989.1 608.3 990.8 606.7 993.2 605.5 994.8 603.5 995.5 600.7 997.1 598.3 999.7 596.8 1002.3 595.2 1004.8 593.5 1007.6 591.9 1009.6 589.4 1011.1 589.0 1012.9 589.9 1014.2 591.2 1015.4 592.7 1016.0 594.7 1016.5 596.5 1017.5 598.1 1018.3 599.8 1018.8 601.6 1019.1 603.5 1019.5 605.3 1019.5 607.1 1018.0 607.9 1016.8 610.0 1015.3 611.8 1013.3 612.6 1011.2 613.2 1009.2 613.9 1007.1 614.5 1005.1 615.1 1003.2 616.0 1001.1 616.6 998.7 615.9 996.3 615.6 995.1 616.0 994.0 616.2 993.0 616.2 992.0 616.2 991.1 616.2 989.8 616.9 988.8 616.7 989.0 615.1 989.4 614.0 989.2 613.6 989.0 613.1 987.7 612.2M1032.8 626.4 1034.8 625.8 1036.8 625.0 1038.9 624.5 1040.9 623.9 1043.5 624.9 1045.5 626.3 1047.2 627.9 1049.0 629.4 1050.6 631.3 1051.5 633.6 1051.9 636.0 1052.2 638.3 1051.7 640.7 1051.5 642.8 1051.1 645.0 1050.3 647.0 1049.1 648.0 1047.8 648.8 1046.6 649.7 1045.3 650.4 1043.9 651.1 1042.4 652.1 1040.7 652.1 1039.0 651.4 1037.4 650.8 1035.7 650.4 1034.1 649.7 1032.9 648.4 1031.9 646.9 1030.7 646.0 1029.3 645.1 1028.2 644.0 1027.1 643.0 1026.3 641.8 1026.4 640.2 1026.6 638.8 1026.9 637.4 1027.6 636.2 1027.1 634.9 1027.2 633.3M1026.9 671.7 1028.9 670.3 1031.0 668.8 1032.9 671.1 1033.3 673.4 1034.2 675.4 1035.1 677.4 1036.1 679.4 1037.6 681.0 1039.7 682.9 1041.9 684.4 1044.2 685.8 1045.6 687.1 1046.7 689.1 1048.4 690.2 1050.6 690.5 1052.5 691.3 1054.1 693.1 1055.6 694.9 1056.4 697.2 1055.0 699.3 1054.9 701.5 1055.1 703.8 1054.9 706.1 1054.5 708.3 1054.5 710.6 1054.5 713.0 1054.5 715.3 1054.2 717.6 1053.7 719.9 1054.0 722.2 1053.3 723.5 1051.6 725.0 1049.6 725.9 1047.7 727.1 1046.2 728.6 1043.8 729.3 1040.9 729.8 1041.0 728.0 1039.7 726.1 1038.0 724.3 1036.9 722.3 1038.4 720.3 1039.6 718.3 1040.4 716.1 1041.3 714.0 1040.6 711.9 1039.8 710.0 1039.3 708.1 1038.8 706.1 1038.5 704.1 1038.8 702.0 1038.6 699.9 1036.1 698.5 1033.8 697.1 1032.6 694.6 1032.6 692.2 1031.1 690.8 1028.8 689.9 1027.5 688.4 1026.2 686.8 1025.9 683.9 1026.0 681.7 1026.1 679.4 1027.1 677.2 1028.4 675.0 1026.9 671.7M796.7 672.2 798.1 674.0 799.1 675.8 799.2 677.9 798.7 680.3 799.1 682.3 799.8 684.2 800.5 686.2 801.0 688.2 801.5 690.2 802.0 692.2 802.6 694.2 803.6 696.1 805.4 697.7 806.0 699.7 805.7 702.2 805.9 704.5 806.8 706.6 807.6 708.8 807.6 711.1 807.9 713.3 808.8 715.2 809.8 717.1 810.7 718.9 811.5 720.8 812.7 722.5 816.1 723.6M799.4 677.8 799.8 680.0 801.6 682.0 802.1 684.2 802.2 686.5 802.2 688.9M813.3 730.6 813.9 732.6 814.8 734.4 816.0 736.0 817.4 737.5 818.5 739.1 818.8 741.2 819.4 743.3 820.6 745.3 821.7 747.2M813.3 731.9 814.4 733.8 814.4 736.1 815.5 737.9 817.1 739.6 817.5 741.7M828.6 725.0 830.4 726.5 831.5 728.3 832.6 730.2 833.8 732.1 834.8 734.0 835.3 736.3 836.5 738.1 838.3 739.5 840.0 740.9 841.4 742.5 842.9 744.1 843.9 746.3 844.7 748.6 846.7 750.0M874.4 738.9 875.6 736.9 876.2 734.4 877.8 732.7 879.7 731.3 881.2 729.5 882.6 727.7 884.8 726.9 887.1 726.7 889.3 726.4 891.2 725.3 893.2 726.6 894.9 728.6 896.3 730.9 896.4 732.8 897.0 735.0 897.4 737.2 898.2 739.4 898.8 741.6 897.8 743.8 896.4 745.7 896.7 747.9 896.7 750.0M910.6 713.9 912.3 715.2 913.4 716.9 914.1 718.9 914.3 721.1 915.1 723.0 915.8 724.9 916.8 726.7 919.1 727.6 920.8 729.7 920.8 732.0 920.6 734.4 921.1 736.7 921.7 738.9 922.3 741.0 922.5 743.3 923.0 745.4 924.6 747.2 924.6 744.8 926.0 743.0 927.4 741.3 928.3 739.2 929.1 737.1 930.2 735.2 931.9 733.6 931.2 735.7 932.8 737.5 934.1 739.4 934.1 741.7 933.7 744.1 934.8 746.1 936.5 747.8 936.9 750.0M934.2 726.4 935.0 724.3 935.5 722.0 936.9 720.2 938.8 718.7 939.9 716.8 938.3 714.8 937.3 712.9 940.2 711.6 942.4 711.4 944.2 710.3 944.8 712.1 946.2 714.2 948.9 717.2 949.8 718.8 951.1 720.4 952.3 722.0 953.7 723.6 955.3 725.1 956.7 726.9 957.9 728.7 959.2 730.6M827.2 755.6 829.9 754.0 830.6 756.5 832.4 757.9 835.0 758.7 836.5 760.3 837.2 762.7 837.9 764.8 838.6 766.8 839.3 768.8 839.5 771.1 839.3 773.4 840.3 775.3 841.4 777.0 841.9 779.0 842.5 780.9 843.0 782.9 842.6 785.0 842.4 787.1 843.6 789.0 845.5 790.7 846.5 792.8 847.2 795.1 848.1 797.2 848.4 799.3 848.6 801.4 848.6 803.5 848.7 805.7 849.9 808.0 850.9 810.0 852.0 812.1 853.2 814.1 851.5 813.6 849.4 814.1 848.2 812.1 847.4 810.2 846.5 808.2 845.5 806.4 844.4 804.5 844.3 801.9 844.8 799.4 843.9 797.2M834.2 750.0 834.9 752.0 835.1 754.1 835.1 756.3 834.9 758.4 836.8 760.6 838.8 762.1 840.6 763.7 842.9 764.9 845.5 765.0 848.2 766.0 847.6 764.6 847.5 762.5 847.9 760.3 847.5 758.2 846.4 756.2 845.9 754.2 846.1 752.1 846.7 750.0M825.8 769.4 826.7 771.3 828.5 772.7 829.5 774.6 830.4 776.4 831.3 778.3 832.1 780.2 832.9 782.1 833.8 784.0 834.6 785.9 835.3 787.8 836.0 789.8 837.1 791.6 838.6 793.1 839.6 795.0 840.3 797.0 841.1 798.9 842.2 800.6 843.3 802.4 843.4 804.6 843.6 806.9 845.3 808.3M827.2 773.6 828.0 776.0 829.7 778.0 830.0 780.6M848.1 815.3 848.8 817.4 849.8 819.3 851.2 821.1 852.8 822.6 854.1 824.4 855.6 826.0 856.7 827.7 857.2 829.8 857.8 831.8 859.4 833.2 861.1 834.5 862.1 836.3 862.8 838.2 863.3 840.3M859.2 818.1 860.1 819.9 860.6 821.9 861.7 823.6 862.8 825.3 864.8 826.8 866.7 827.9 868.5 829.2 870.3 830.6M860.6 822.2 861.4 824.1 862.6 825.8 863.4 827.8 863.8 829.9 864.5 831.8 865.2 833.8 866.6 835.8 868.6 837.0 870.4 838.5 871.7 840.3M868.9 790.3 871.1 790.7 873.3 791.0 873.1 789.3 874.4 787.1 875.1 784.9 876.4 786.5 878.7 787.6 881.1 788.3 882.9 790.1 885.1 792.1 887.3 793.0 889.2 793.9 891.0 795.0 893.0 795.9 895.0 796.4 896.3 798.1 897.7 800.0 899.1 801.9 900.7 803.7 902.3 805.5 903.8 807.4 905.4 809.2 906.7 811.1 907.7 813.4 908.9 815.5 910.0 817.3 911.0 819.3 911.0 821.4 910.8 823.6 911.2 825.7 911.3 828.0 912.2 830.0 913.3 831.9M874.4 795.8 876.4 793.7 878.5 791.6 880.7 792.7 882.6 794.0 884.7 795.0 887.0 795.7 888.8 797.4 890.3 799.4 891.8 801.4 893.3 803.3 893.8 805.2 895.1 806.8 897.2 808.0 898.2 809.9 898.4 812.1 899.0 814.1 900.5 816.2 902.2 818.1M868.9 800.0 869.5 802.0 871.6 803.5 872.1 805.6 872.1 807.9 872.9 809.9 874.3 811.7 875.3 813.6 875.5 815.8 876.1 818.0 877.1 820.0 878.0 821.9 879.4 823.6 881.2 825.1 883.1 826.6 885.3 827.8 887.2 829.2 888.3 831.4 889.6 833.5 891.4 834.9 893.1 836.2 894.8 837.7 896.3 839.3 898.3 840.3 900.3 840.9 902.2 841.7 904.1 840.8 905.9 839.9 907.6 838.9 909.2 837.5M878.6 834.7 880.2 836.6 882.6 837.7 884.2 839.6 885.3 841.9 886.6 843.8 888.4 845.3 889.9 847.1 890.9 849.3 891.9 851.4 893.9 852.8 895.8 854.4 896.4 856.7 896.1 859.5 897.0 861.6 899.4 863.0 901.2 864.6 902.9 866.1 903.5 869.4 903.2 872.2 899.4 872.9 896.7 872.8 894.4 870.3 892.5 868.1M875.8 854.2 877.2 856.1 878.2 858.2 879.7 859.9 881.3 861.4 882.4 863.1 883.5 864.8 884.5 866.5 885.6 868.3 886.4 870.2 886.9 872.2M877.2 856.9 878.5 858.8 880.1 860.5 880.9 862.6 881.3 864.9 882.8 866.7M892.5 876.4 894.4 878.0 895.5 880.4 897.1 882.2 898.8 883.9 900.2 885.7 901.8 887.3 903.3 889.1 904.9 890.8 906.5 892.5 907.8 894.5 909.4 896.3 911.3 897.9 913.3 899.3 914.7 901.4M893.9 880.6 895.0 882.5 896.0 884.5 897.4 886.1 898.8 887.8 900.2 889.4 902.1 890.7 903.7 892.2 905.3 893.6 906.7 895.3 907.8 897.2M920.3 909.7 921.9 911.0 923.9 911.5 925.5 912.8 926.8 914.6 928.6 915.9 931.1 916.5 933.2 917.5 934.9 919.1 936.7 920.6 938.6 921.8 940.4 923.3 941.9 925.0 943.3 926.8 944.9 928.4 946.8 929.7 948.3 931.3 949.4 933.3M925.8 913.9 927.7 914.9 929.4 916.2 931.0 917.7 932.4 919.4 934.0 920.8 935.7 922.1 937.3 923.5 938.6 925.1 940.1 926.7 941.6 928.1 943.2 929.5 945.0 930.7 946.7 931.9M917.7 777.7 918.7 776.4 920.2 775.5 920.7 774.6 921.4 773.9 922.1 773.2 922.9 772.4 923.8 771.8 924.6 770.5 925.7 769.6 927.2 770.3 928.6 771.4 929.9 771.6 930.6 772.2 931.6 773.2 933.2 774.0 934.0 775.3 934.3 776.8 934.3 778.4 933.0 779.8 931.2 780.7 930.8 781.9 930.5 783.2 929.7 784.4 928.9 785.9 927.3 786.3 925.9 786.5 924.6 786.5 923.3 786.0 922.2 785.5 921.2 784.7 920.3 783.8 919.7 782.7 920.0 781.2 919.9 780.1 919.0 779.1 917.7 777.7M930.0 750.0 931.3 751.9 933.5 753.2 934.5 755.3 936.3 758.9 934.7 758.5 933.2 760.0 931.6 761.2 929.7 762.0 929.9 765.5 930.8 768.2 933.1 769.3 935.0 770.3 936.8 771.5 938.9 772.0 941.1 772.2M966.1 758.3 966.6 760.5 967.4 762.5 968.0 764.7 968.3 766.9 968.3 769.4 968.8 772.2 970.6 773.2 971.9 774.9 973.3 776.4 975.2 777.2 977.1 777.9 979.3 778.4 981.6 778.6 983.7 779.2 985.8 779.9 987.7 779.5 989.9 779.1 992.1 778.7 994.4 778.8 996.7 779.1 998.8 778.6 1001.0 777.5 1003.2 777.2 1005.5 777.8 1007.8 777.8M942.5 833.3 942.7 831.7 943.0 830.2 943.8 829.0 944.9 828.2 945.6 827.2 945.5 825.3 946.4 824.1 948.3 824.6 949.8 825.1 951.0 824.4 952.2 823.6 953.6 823.6 955.2 824.5 956.7 825.5 958.0 826.7 959.2 828.0 960.2 829.5 961.0 831.1 962.3 832.4 963.7 833.8 964.3 835.6 964.6 837.6 964.7 839.6 963.8 841.7 962.9 842.3 963.1 844.2 962.7 845.9 961.0 846.2 959.3 846.0 957.9 846.3 956.4 846.5 954.9 846.6 953.1 847.4 951.2 847.3 949.7 845.7 948.2 844.2 947.4 843.1 946.6 842.0 946.0 840.9 945.7 839.7 945.1 838.8 943.7 838.4 942.9 837.6 943.6 836.3 944.1 835.3 943.4 834.7 942.6 834.0 942.5 833.3M988.3 818.1 986.7 820.1 984.2 821.4 982.4 823.2 981.9 825.5 981.4 827.4 981.4 829.5 980.9 831.5 979.6 833.2 981.1 835.5 983.2 836.5 985.4 837.2 987.1 838.7 988.7 839.8 990.4 840.9 992.1 842.0 993.8 843.1 996.0 843.5 998.1 843.8 1000.1 843.1 1002.2 843.1M1002.2 791.7 1002.6 793.8 1002.8 796.1 1003.8 798.1 1005.4 799.9 1003.5 801.4 1001.2 801.6 999.3 802.4 997.9 804.0 998.3 806.2 998.2 808.3 1000.1 808.3 1002.2 808.2 1004.2 807.4 1006.3 807.1 1008.4 807.1 1010.6 807.0 1012.1 808.6 1013.7 810.0 1015.7 810.6 1016.3 812.0 1016.8 814.2 1017.2 816.5 1017.8 818.6 1019.2 820.6 1020.1 822.7 1020.8 824.9 1021.5 826.9 1022.2 829.0 1022.9 831.1 1023.4 833.2 1022.2 836.1 1021.4 838.8 1023.6 839.9 1025.7 840.6 1028.1 840.2 1030.3 839.6 1030.7 836.8 1031.4 834.7M1003.6 823.6 1005.5 821.3 1006.9 818.6 1009.3 817.2 1011.6 816.1 1014.4 817.5 1016.8 818.5 1018.2 820.9 1018.8 822.9 1019.4 824.9 1019.5 827.2 1019.2 829.6 1019.0 831.5 1019.2 834.0 1018.9 836.4 1018.5 838.8 1016.6 838.4 1014.3 838.2 1011.9 838.1 1010.2 837.0 1007.8 836.1M1014.7 777.8 1016.3 779.1 1017.9 780.3 1019.7 781.3 1021.5 782.2 1022.3 783.9 1023.1 785.8 1024.0 787.7 1026.2 788.7 1028.1 789.7 1029.4 791.5 1030.5 793.4 1032.2 794.7 1034.0 795.8 1035.6 797.2 1037.2 798.6 1039.0 799.7 1041.3 799.7 1043.5 799.9 1045.3 800.9 1047.1 802.0 1048.9 803.1 1050.7 804.0 1052.3 805.2 1053.2 807.4 1054.6 809.0 1055.6 810.6 1056.9 812.3 1058.5 813.8 1060.2 815.1 1061.8 816.5 1063.3 818.1M1038.3 765.3 1040.2 766.1 1042.3 766.5 1044.2 767.5 1046.1 769.0 1047.9 770.4 1049.6 772.0 1051.2 771.1 1053.0 770.0 1054.8 769.0 1057.4 769.3 1059.6 769.7 1061.9 770.1 1064.2 770.7 1066.5 771.1 1068.8 771.8 1069.4 773.3 1071.8 774.2 1074.0 775.3 1075.0 777.4 1074.6 780.2 1075.3 782.6 1076.6 784.9 1077.1 787.3 1074.9 790.0 1073.1 791.7 1070.6 792.7 1068.3 793.8 1066.8 795.4 1065.3 797.0 1063.5 798.4 1061.9 800.0M1071.7 820.8 1073.7 820.4 1075.9 820.4 1078.0 820.1 1080.0 819.4M1035.6 825.0 1037.6 825.6 1039.7 825.9 1041.4 827.1 1043.0 826.6 1044.7 825.2 1046.0 823.2 1047.5 821.6 1051.5 824.4 1053.2 824.8 1055.4 825.3 1057.2 827.4 1058.3 829.2 1059.3 830.9 1060.2 832.7 1060.0 835.6 1060.4 837.9 1062.0 839.9 1063.5 841.9 1063.4 844.4 1064.4 846.8 1066.6 847.8 1069.4 847.9 1070.3 850.3 1069.5 852.6 1069.6 854.7 1071.3 856.3 1072.7 858.0 1072.8 860.4 1073.0 862.5 1072.2 864.6 1071.7 866.7M1014.7 845.8 1017.2 843.8 1019.9 844.3 1021.4 845.8 1022.6 847.9 1024.3 849.1 1026.1 850.0 1027.9 850.9 1029.6 852.1 1031.5 853.3 1033.6 854.1 1035.7 854.9 1037.9 855.5 1040.3 855.5 1042.3 856.5 1043.9 858.3 1044.6 860.3 1045.5 862.1 1046.5 863.8 1047.8 865.4 1048.1 867.4 1047.8 869.4 1047.0 871.5 1047.1 873.6 1045.3 873.8 1042.5 874.2 1040.1 875.4 1037.4 876.9 1036.7 879.5 1036.3 881.7 1036.1 884.0 1036.6 886.5 1034.2 888.6 1032.1 890.0 1033.6 890.4 1033.8 892.9 1034.1 895.3 1035.0 897.5 1036.2 899.6 1038.0 901.1 1040.5 902.2 1041.5 904.5 1041.8 906.7 1042.3 908.9 1042.3 911.2 1044.0 913.0 1046.2 913.9 1048.6 914.6 1050.2 916.3 1051.3 918.7 1053.1 920.2 1055.4 920.8 1057.5 921.6 1059.8 922.1 1062.0 922.8 1063.8 924.2 1065.7 925.2 1067.8 925.9 1070.0 926.8 1072.2 927.4 1074.5 927.7 1076.4 928.6 1078.1 929.8 1080.0 930.6M952.1 885.7 954.3 885.4 956.5 885.1 958.6 884.4 960.7 883.7 962.5 884.6 964.8 885.3 966.9 886.3 969.0 887.2 970.1 889.7 970.6 892.2 971.0 894.7 972.9 896.9 974.5 899.0 976.4 900.8 977.3 902.3 978.4 904.1 979.6 905.8 978.5 907.3 977.3 909.3 976.3 911.4 974.5 912.8 973.0 914.2 971.1 915.0 968.5 914.7 967.7 912.3 965.3 910.5 963.3 908.9 961.5 906.9 959.8 904.9 957.7 907.2 957.6 909.4 956.7 911.3 957.0 913.9 957.5 916.7 957.1 914.3 956.1 912.2 954.5 910.4 954.3 908.8 953.8 906.6 953.1 904.4 952.7 902.2 951.9 900.0 951.7 897.7 951.9 895.4 952.0 893.1 952.6 890.7 953.3 888.4 952.1 885.7M974.7 882.1 975.5 881.4 976.4 881.2 977.1 880.8 978.1 880.4 979.2 880.0 980.5 879.0 982.1 878.7 983.8 878.5 985.5 878.6 987.1 879.4 988.6 880.5 990.0 881.5 990.9 882.9 991.5 884.2 991.7 885.7 991.8 887.1 991.4 888.4 990.9 889.6 990.4 890.7 989.7 891.6 989.4 892.7 989.1 894.7 987.5 895.2 985.5 894.1 984.1 893.1 982.6 892.7 981.2 892.1 980.1 891.3 979.0 890.4 978.0 889.7 976.7 889.0 975.9 887.9 974.8 886.8 974.2 885.3 974.8 883.6 974.7 882.1M943.4 903.8 946.4 904.6 948.4 905.7 949.9 907.3 951.7 908.7 953.0 910.5 953.5 912.7 954.3 914.5 955.1 916.4 956.0 918.2 957.7 919.5 960.4 921.0 962.3 923.3 959.9 923.1 957.8 922.9 956.8 921.1 955.1 919.3 952.6 918.4 950.3 917.2 949.2 915.1 948.3 913.0 946.9 911.2 945.6 909.4 945.2 907.3 944.4 905.1 943.4 903.8M993.9 911.8 996.0 911.9 998.1 911.9 1000.1 911.7 1002.2 911.1 1004.1 912.6 1006.2 913.8 1008.0 915.3 1008.9 917.8 1009.9 920.1 1011.8 921.9 1013.7 923.7 1015.8 925.3 1018.2 926.3 1019.9 927.9 1021.1 930.0 1022.6 931.8 1023.9 933.9 1023.3 935.4 1023.3 937.5 1021.9 935.8 1019.1 935.3 1016.2 935.2 1013.3 934.7 1012.0 936.8 1010.6 938.9 1008.8 937.4 1007.0 935.9 1004.9 934.9 1002.7 933.6 1000.9 931.9 999.2 930.1 997.4 928.4 996.2 926.1 995.2 924.0 994.9 921.5 994.4 919.2 994.1 917.4 993.5 915.3 993.6 913.2 993.9 911.8M975.8 925.0 977.7 923.6 979.6 922.4 981.9 925.0 981.9 927.8 983.2 929.6 985.5 930.6 987.7 931.3 989.8 932.1 991.9 932.9 993.6 934.6 995.1 936.4 997.1 937.6 999.1 938.9 1001.3 939.6 1003.6 940.3M974.4 941.7 976.6 942.0 979.0 941.8 981.1 942.5 983.2 943.2 985.0 944.7 985.7 947.3 987.0 948.9 988.8 949.9 990.5 950.9 993.0 951.3 995.3 951.4 997.4 952.1 999.4 952.9 1000.9 950.7 1001.8 948.4 1004.1 950.0 1004.9 952.2 1005.8 954.3 1007.5 955.8 1009.5 956.5 1011.0 957.9 1012.2 959.8 1013.8 961.0 1015.6 961.8 1017.4 962.8 1019.0 964.0 1020.6 965.2 1022.2 966.4 1023.7 967.7 1026.6 967.9 1029.2 967.1 1031.5 967.3 1033.9 967.4 1036.3 967.7 1038.5 968.4 1036.1 968.7 1034.3 967.3 1032.6 966.0 1030.8 964.6 1028.7 964.0 1026.3 963.1 1024.0 962.3 1022.0 960.7 1020.8 958.7 1019.5 956.8 1018.1 955.2 1016.8 953.4 1014.8 951.8 1012.4 950.5 1010.6 948.6M986.9 955.6 988.7 957.2 989.5 959.4 991.0 961.2 993.6 961.2 996.0 961.4 998.5 961.6 1000.8 962.5M1009.2 968.1 1010.8 969.3 1012.4 970.5 1014.1 971.7 1015.5 973.2 1017.8 974.0 1020.1 974.3 1022.2 974.7 1024.4 975.0 1026.0 973.4 1027.8 972.0 1029.6 970.8 1031.4 969.4M1010.9 977.7 1011.5 976.7 1012.4 975.5 1013.7 975.6 1015.2 975.9 1016.7 976.6 1017.9 977.8 1019.3 978.8 1020.5 980.0 1021.8 981.1 1022.5 982.7 1022.8 984.4 1023.5 985.4 1023.1 983.5 1021.9 983.3 1020.6 983.1 1019.3 982.7 1017.5 983.2 1015.8 983.2 1015.0 981.6 1014.6 979.8 1013.6 978.9 1012.6 978.0 1011.7 977.1 1010.9 977.7M1013.3 979.2 1015.3 980.1 1016.7 981.9 1018.5 983.1 1020.2 984.5 1022.0 985.6 1024.1 986.2 1026.1 987.1 1028.2 987.7 1030.3 988.4 1032.0 989.6 1033.6 990.9 1035.4 992.0 1037.1 993.2 1039.0 994.0 1041.4 993.9 1043.4 994.4 1045.1 995.6 1046.9 996.8 1048.7 997.5 1050.6 998.1 1052.5 998.8 1054.5 999.4 1056.3 1000.2 1057.9 1001.6 1059.7 1002.6 1061.7 1002.9 1063.7 1003.3 1065.7 1004.1 1067.7 1004.9 1069.8 1005.5 1072.0 1006.0 1074.0 1006.9 1075.8 1008.5 1077.8 1009.3 1080.0 1009.7M1050.8 894.4 1052.8 892.2 1055.8 891.1 1057.6 891.7 1060.7 891.1 1061.4 894.0 1060.5 896.6 1060.4 899.1 1060.9 901.5 1063.3 903.2 1065.2 904.2 1067.0 905.1 1068.9 905.7 1071.4 905.6 1073.2 906.5 1074.6 908.0 1076.4 909.1 1078.4 909.8 1080.0 911.1M1050.8 894.4 1051.0 896.8 1051.4 899.1 1051.7 901.4 1052.2 903.7 1052.3 906.0 1051.7 908.4 1053.7 910.0 1055.8 910.5 1057.8 911.1 1059.4 912.3 1060.9 913.6 1062.8 914.5 1064.9 914.9 1066.7 915.9 1068.6 917.0 1070.6 918.0 1072.8 918.9 1075.0 919.7 1077.3 921.2 1080.0 922.2M1020.3 938.9 1022.1 939.9 1024.4 940.0 1026.3 940.9 1028.2 942.0 1030.1 942.8 1032.0 941.9 1034.0 941.4 1036.1 941.2 1038.2 941.0 1039.5 940.0 1041.3 938.8 1042.2 937.0 1042.5 934.8 1043.5 933.0 1045.4 931.7 1047.2 930.7 1049.3 930.2 1051.7 931.1 1053.9 931.4 1056.2 931.7 1058.4 932.7 1060.3 934.2 1061.7 935.2 1064.2 935.1 1066.1 935.8 1067.0 938.1 1068.1 940.0 1069.6 941.3 1071.8 943.1 1072.3 945.6 1073.5 947.3 1075.5 948.2 1077.8 948.3 1080.0 948.6M1031.4 945.8 1033.5 946.6 1035.6 947.5 1037.6 948.5 1039.6 949.6 1041.5 950.7 1042.4 953.1 1043.1 955.1 1043.0 957.5 1043.2 959.7 1044.0 961.7 1046.0 963.6 1047.6 964.9 1049.3 966.2 1051.2 967.4 1053.7 967.6 1055.7 968.6 1057.3 969.9 1059.0 971.3 1060.5 973.0 1061.8 975.0 1064.1 975.5 1066.1 976.4M1035.6 947.2 1037.3 948.3 1039.8 947.9 1041.5 949.3 1042.7 951.5 1044.5 952.5 1046.7 952.7 1049.1 953.2 1051.4 953.7 1053.7 954.3 1056.0 955.0 1058.3 955.6 1060.3 957.0 1062.0 959.2 1064.2 960.2 1066.6 960.5 1068.9 961.2 1071.2 961.2 1073.5 961.4 1075.7 962.2 1077.8 963.2 1080.0 963.9M1063.3 972.2 1065.3 971.0 1067.1 969.3 1069.1 968.2 1071.3 967.2 1073.9 967.7 1075.8 969.1 1077.8 969.6 1080.0 969.4M1066.1 990.3 1066.7 989.4 1068.0 989.5 1069.1 989.2 1070.3 988.8 1071.7 988.7 1073.1 988.4 1074.5 988.5 1076.0 988.7 1077.3 989.1 1078.3 990.1 1079.1 991.2 1080.0 991.7M1066.1 990.3 1067.0 991.2 1068.4 991.6 1069.4 992.2 1070.6 992.6 1071.7 993.3 1072.5 995.0 1073.6 995.9 1075.1 995.8 1076.5 995.9 1077.7 996.6 1078.8 997.3 1080.0 997.2M1080.0 191.1 1081.9 190.6 1084.1 190.8 1086.1 190.2 1088.0 189.7 1089.9 189.0 1091.6 187.8 1093.4 186.9 1095.1 185.6 1096.9 184.4 1099.1 184.8 1101.5 185.6 1103.3 184.7 1105.0 183.4 1106.9 182.8 1109.1 182.9 1111.1 182.5 1112.7 181.0 1114.4 179.7 1116.3 179.0 1118.2 178.3 1120.3 178.1 1122.5 178.6 1124.5 178.1 1126.1 176.7 1128.0 175.9 1130.0 175.6M1113.3 180.0 1115.3 179.4 1117.4 179.8 1119.4 179.7 1121.5 179.4 1123.5 179.3 1125.6 179.3 1127.6 179.2 1129.6 178.5 1131.6 177.9 1133.7 178.5 1135.8 179.3 1137.8 179.3 1139.9 179.4 1141.9 179.3 1143.9 179.3 1141.6 177.9 1139.7 179.3 1137.8 180.4 1135.6 180.5 1133.3 180.5 1131.3 181.2 1129.4 182.3 1127.3 182.8 1125.0 182.7 1122.9 183.0 1121.1 184.6 1119.2 185.9 1120.6 183.3 1122.9 182.9 1124.4 181.1M1080.0 208.3 1082.1 209.1 1084.1 209.8 1083.4 212.5 1082.7 215.3 1080.0 213.9M1080.0 225.0 1081.9 223.5 1083.8 222.3 1086.0 221.5 1088.1 220.7 1090.4 220.2 1092.7 220.0 1095.1 219.9 1097.5 220.6 1099.9 221.2 1102.4 220.3 1105.1 219.3 1107.9 219.6 1109.3 221.3 1109.2 222.7 1107.8 223.4 1106.9 223.9 1106.4 225.1 1105.4 226.3 1103.9 227.1 1102.2 228.0 1100.2 228.2 1098.0 227.8 1095.9 228.2 1093.8 228.9 1092.0 230.2 1090.3 231.5 1088.6 232.8 1086.8 233.8 1084.9 234.8 1083.4 236.3 1082.1 238.2 1080.0 238.9M1080.0 241.7 1081.2 239.9 1082.7 238.6 1084.6 237.7 1086.6 237.1 1088.3 236.1 1090.0 235.0 1091.7 233.9 1093.1 232.5 1094.7 231.2 1096.2 229.9 1097.8 228.0 1099.8 226.2 1102.0 224.7 1103.9 223.3 1105.6 221.8 1107.8 220.8M1091.1 248.6 1093.1 247.6 1095.3 247.4 1097.5 246.8 1099.6 246.4 1101.2 244.4 1101.8 242.0 1102.9 240.1 1105.1 239.0 1107.4 238.2 1109.3 236.9 1111.3 235.7 1112.9 234.0 1114.2 231.8 1115.9 230.3 1117.5 229.0 1119.2 227.6 1121.2 226.7 1123.1 225.7 1124.4 224.1 1125.7 222.3 1127.2 220.8 1129.2 219.6 1131.3 218.6 1133.9 218.5 1136.1 217.8 1137.8 216.6 1139.6 215.5 1141.2 214.1 1142.8 212.6 1144.6 211.6 1146.4 210.5 1148.5 210.0 1150.5 209.6 1152.5 209.2 1154.5 208.9 1156.5 208.6 1158.7 208.7 1160.9 209.0 1162.1 209.9 1164.3 210.5 1166.4 211.5 1168.4 212.6 1170.2 213.7 1172.1 214.7 1174.0 215.6 1175.8 216.7 1177.8 217.6 1180.0 218.1M1080.0 233.3 1082.2 233.2 1084.2 232.6 1085.9 231.2 1087.2 229.2 1089.0 228.1 1091.0 227.5 1093.0 226.6 1095.1 225.9 1097.2 225.1 1099.1 223.9 1100.9 222.5 1102.9 221.6 1105.0 220.9 1106.3 218.7 1107.0 216.2 1105.4 215.5 1104.5 213.3 1103.5 211.2 1105.6 209.6 1107.8 208.3 1106.1 206.8 1104.1 205.6 1102.6 203.9 1101.4 202.1 1102.9 199.1 1105.3 198.1 1107.4 197.0 1108.6 195.1 1110.1 194.5 1112.2 193.9 1114.4 193.5 1116.5 192.7 1117.7 190.3 1118.7 188.5 1120.0 187.0 1121.3 185.5 1122.5 183.9 1123.8 184.4 1125.8 184.4 1127.9 184.4 1130.0 184.1 1132.3 184.2 1134.5 185.1 1135.7 187.3 1137.9 187.3 1140.0 186.4 1142.1 185.2 1144.4 184.9 1146.8 185.1 1147.3 187.2 1148.8 189.2 1150.0 191.4 1148.7 193.6 1147.5 195.3 1146.2 197.0 1147.9 200.1 1150.1 202.1 1148.5 202.4 1146.5 204.0 1144.6 205.4 1142.5 206.5 1140.1 206.9 1137.8 207.4 1135.6 208.4 1133.4 209.3 1131.0 209.8 1128.5 209.8 1126.3 210.7 1124.5 212.6 1123.0 214.8 1121.1 216.6 1119.3 218.4 1118.3 220.2 1117.1 222.1 1116.8 224.3 1117.0 226.7 1116.0 229.3 1114.7 231.9M1085.6 288.9 1087.2 286.8 1089.2 285.1 1091.1 283.3 1093.9 284.1 1096.7 284.7 1096.3 282.2 1096.4 279.7 1096.7 277.3 1097.0 274.9 1098.2 272.4 1099.2 270.4 1100.4 268.3 1101.7 266.4 1102.7 264.6 1103.8 262.8 1104.8 261.0 1105.5 259.1 1106.3 257.1 1107.2 255.3 1108.1 253.4 1108.9 251.5 1109.6 249.5 1112.5 248.5 1115.0 248.7 1117.3 248.5 1119.6 248.4 1121.9 248.1 1123.8 248.2 1126.1 248.1 1128.3 248.3 1130.5 248.5 1132.8 248.8 1135.0 248.3 1137.1 247.6 1138.9 246.2 1140.8 245.0 1143.3 245.0 1145.7 245.3 1147.9 244.6 1150.0 243.6 1152.2 243.1M1080.0 304.2 1082.8 303.0 1085.6 301.8 1088.6 301.1 1091.6 300.5 1094.6 300.1 1097.6 300.0 1100.6 300.2 1103.3 301.0 1105.9 302.1 1108.5 303.0 1110.8 304.2 1112.8 306.1M1125.8 304.2 1128.0 303.6 1130.3 303.7 1132.3 302.6 1134.0 300.9 1134.3 298.5 1135.5 295.8 1137.7 294.9 1139.7 293.8 1141.8 292.7 1143.8 291.4 1146.1 290.9 1148.5 291.1 1150.9 292.1 1153.3 291.9 1155.5 290.4 1157.7 289.7 1160.1 289.9 1162.4 289.9 1164.5 288.7 1166.4 287.2 1168.6 286.5 1171.6 287.3 1173.9 288.5 1175.7 290.7 1177.2 293.1 1179.8 294.7 1182.2 295.7 1184.5 296.7 1185.5 295.2 1187.4 294.5 1189.5 294.1 1190.1 292.3 1190.9 290.2 1189.6 288.3 1188.6 285.9 1188.3 283.8 1186.9 282.0 1187.5 279.4 1188.9 277.5 1190.5 275.6 1192.1 273.9 1194.5 272.7 1195.4 270.2 1195.4 267.9 1195.4 265.6 1195.0 263.3 1194.4 261.0 1196.0 258.9 1197.7 257.4 1199.1 255.8 1200.5 254.2 1201.9 252.5 1205.0 252.2 1207.9 251.9 1207.7 253.5 1208.1 255.6 1208.3 257.7 1208.3 259.9 1207.8 261.8 1207.3 264.2 1206.9 266.5 1206.1 268.3 1205.0 270.4 1203.6 272.2M1166.1 230.6 1168.3 230.1 1170.3 229.1 1172.4 228.6 1174.7 228.4 1176.8 228.9 1179.2 229.1 1181.7 229.2 1184.2 229.2M1166.1 230.6 1167.1 233.3 1166.8 236.3 1167.1 238.4 1167.5 240.6 1167.8 242.8 1168.1 245.0 1168.3 247.2 1169.3 249.2 1170.5 251.0 1172.3 252.0 1174.2 252.9 1175.8 254.2 1177.8 255.9 1179.6 257.8 1181.4 259.7M1171.7 245.8 1173.4 244.3 1175.3 242.9 1177.1 241.6 1179.0 240.2 1180.9 238.9 1183.0 237.9 1185.2 237.2 1187.2 235.8 1189.2 234.5 1191.5 233.7 1193.8 233.0 1196.0 233.1 1198.1 233.4 1200.1 233.4 1202.2 233.1 1204.4 233.7 1206.5 234.3 1208.6 234.9 1210.5 236.1 1210.8 238.7 1211.6 241.1 1212.4 243.4 1215.0 244.9 1217.4 245.4 1219.6 246.2 1221.7 247.1 1223.6 246.7 1225.5 246.0 1227.4 245.2 1229.4 244.9 1231.5 244.7 1233.5 244.3 1235.4 243.6 1237.7 243.0 1240.1 243.3 1242.5 243.1M1191.1 255.6 1193.0 254.1 1194.1 251.9 1196.0 250.5 1198.3 249.4 1200.1 247.9 1201.7 246.5 1203.2 245.2 1205.0 243.9 1206.6 242.6 1207.7 240.6 1208.5 238.3 1210.3 237.2 1213.3 236.1M1213.3 230.6 1215.4 229.3 1217.8 229.0 1220.0 228.2 1222.2 227.2 1224.5 226.5 1226.8 227.0 1229.0 227.0 1231.2 226.5 1233.4 226.0 1235.6 225.5 1237.9 225.0 1240.2 225.2 1242.5 226.0 1244.9 225.9 1247.1 224.9 1249.4 224.5 1250.8 226.8 1252.2 229.2 1250.6 230.9 1249.0 232.6 1247.8 234.5 1246.4 235.9 1244.7 237.1 1243.0 238.1 1241.1 238.9M1191.9 199.6 1193.5 198.0 1195.1 196.2 1196.9 194.8 1198.9 194.3 1201.1 193.8 1203.2 192.8 1205.4 192.2 1207.7 192.4 1210.0 193.4 1212.0 194.1 1214.1 194.9 1216.2 195.7 1214.6 197.9 1213.2 199.9 1211.2 200.5 1209.1 201.2 1206.9 201.4 1204.7 201.8 1203.1 201.3 1201.0 200.8 1198.9 200.8 1196.7 201.3 1194.8 200.5 1192.9 199.7 1191.9 199.6M1196.5 185.7 1198.7 185.2 1200.9 184.8 1203.0 184.3 1205.3 184.1 1207.2 184.5 1209.7 183.8 1212.1 183.8 1210.3 187.3 1208.1 189.2 1205.7 188.5 1203.7 187.3 1201.6 187.2 1199.5 187.4 1196.5 185.7M1224.5 177.5 1226.6 177.1 1228.7 176.6 1230.7 176.5 1232.8 176.5 1234.9 176.5 1237.0 176.6 1239.1 176.5 1241.2 176.2 1240.0 177.8 1238.8 177.3 1236.5 178.1 1234.2 178.5 1231.9 179.0 1229.6 179.2 1227.2 179.0 1224.5 177.5M1218.9 165.2 1221.0 165.2 1223.0 165.1 1225.1 165.4 1227.2 166.2 1229.3 166.3 1231.4 166.2 1233.5 166.1 1235.6 165.7 1237.6 165.3 1239.7 166.0 1241.8 167.0 1243.9 166.7 1246.0 166.1 1248.1 165.7 1250.1 164.6 1252.2 164.2 1254.3 164.7 1256.4 165.1 1258.5 165.5 1260.6 166.1 1261.6 167.5 1259.9 167.7 1257.8 167.9 1255.7 167.3 1253.6 167.2 1251.6 168.4 1249.5 169.3 1247.4 169.1 1245.3 168.7 1243.2 168.5 1241.1 167.6 1239.0 167.7 1236.9 168.2 1234.8 168.5 1232.8 168.5 1230.8 168.1 1228.6 168.4 1226.4 168.9 1224.4 168.4 1222.3 167.6 1220.3 167.2 1218.9 165.2M1156.4 172.2 1158.5 172.1 1160.8 172.4 1162.7 171.6 1164.5 170.3 1166.5 169.6 1168.4 168.8 1170.4 168.1 1172.3 167.3 1174.4 167.2M1216.6 206.4 1217.6 204.6 1218.6 202.9 1219.7 201.2 1220.9 199.5 1223.5 198.4 1225.8 198.2 1227.9 197.6 1230.2 197.2 1231.7 198.2 1233.7 198.6 1235.7 199.0 1237.6 199.8 1239.5 200.8 1237.9 201.4 1237.5 203.9 1236.5 206.0 1235.2 207.8 1231.9 208.6 1229.4 208.1 1226.8 207.3 1224.4 207.9 1222.1 208.2 1219.7 207.8 1216.6 206.4M1229.4 216.8 1228.7 215.2 1228.4 213.3 1229.4 211.7 1231.5 210.8 1232.7 209.8 1233.7 208.3 1235.5 207.1 1237.6 206.0 1240.1 205.1 1242.9 204.8 1246.1 204.8 1249.4 204.8 1252.1 205.7 1254.2 206.7 1256.1 207.5 1257.5 208.9 1257.0 211.1 1256.2 212.5 1256.2 213.7 1256.0 215.1 1254.7 216.2 1252.9 216.7 1251.2 217.7 1249.4 219.3 1246.8 219.9 1244.2 219.8 1241.9 219.7 1239.8 220.1 1237.8 220.5 1236.0 220.5 1234.3 220.5 1232.9 219.9 1232.3 217.9 1231.8 216.9 1231.2 216.5 1229.4 216.8M1231.4 301.4 1233.4 302.3 1235.7 302.3 1236.9 304.7 1237.5 307.0 1238.3 309.2 1238.8 311.6 1242.3 311.9 1244.5 310.7 1246.7 309.7 1247.1 312.2 1247.4 314.8 1248.7 317.0 1248.4 318.7 1247.2 320.6 1245.6 322.1 1244.1 323.8 1242.2 324.8 1240.4 325.9 1239.2 327.8 1238.1 329.7 1236.6 331.1 1234.9 332.4 1233.2 333.6 1231.0 334.2 1229.2 333.9 1227.2 334.8 1225.1 335.5 1223.0 335.3 1220.9 335.1 1218.8 335.7 1216.6 335.9 1214.5 335.4 1212.4 334.8 1210.3 334.2 1208.3 333.2 1206.3 332.3 1204.1 331.8 1201.9 331.4 1200.3 329.1 1199.5 326.3 1197.5 324.8 1195.3 323.6M1136.9 335.6 1138.9 334.5 1140.7 333.3 1142.6 332.3 1144.6 331.3 1146.5 330.2 1149.7 330.3 1152.5 330.8 1153.1 329.5 1154.8 327.9 1157.1 326.8 1159.5 325.9 1161.0 324.0 1162.4 322.4 1164.2 321.3 1166.1 320.2 1168.1 319.4 1170.3 318.9M1160.6 333.3 1162.3 331.9 1164.6 331.5 1166.4 330.2 1168.0 328.6 1169.9 327.3 1171.6 325.9 1173.6 325.0 1175.8 324.4M1160.6 333.3 1162.2 335.1 1164.6 336.0 1166.1 337.8 1167.4 339.8 1168.9 341.6 1170.4 343.2 1172.2 344.4 1174.0 345.2 1175.9 346.1 1178.1 346.4 1180.4 346.4 1182.2 347.4 1183.9 348.6 1185.7 349.7 1187.5 351.0 1189.5 352.0 1191.8 352.1 1194.0 352.5 1195.9 353.8 1197.7 355.3 1199.9 355.6 1202.4 355.0 1204.2 356.2 1205.1 358.4 1206.5 359.9 1208.6 360.4 1210.5 361.1 1210.2 363.3 1209.9 365.5 1209.0 367.6 1208.0 369.5 1209.8 370.4 1211.9 371.1 1213.9 372.1 1215.2 374.0 1216.7 375.7 1218.9 376.4 1221.0 376.7 1222.7 378.0 1224.0 380.0 1225.8 381.0 1227.9 381.4 1229.9 382.1 1231.9 382.8 1233.9 383.5 1235.8 384.3 1237.5 385.8 1238.7 387.6 1239.6 389.6 1241.7 389.3 1243.6 388.4 1245.6 387.9 1247.7 388.6 1249.8 389.1 1251.7 388.0 1253.5 386.5 1255.9 387.6 1257.5 389.1 1259.4 390.0 1261.4 390.9 1263.3 391.8 1265.2 392.8 1267.1 394.0 1268.4 395.8 1269.5 397.8 1271.4 399.0 1273.8 397.6 1276.0 396.7 1278.4 396.3 1280.7 395.7 1282.9 394.7 1284.5 393.5 1286.1 392.1 1287.5 390.7 1289.2 389.6 1290.9 388.6 1292.1 390.7 1293.1 392.5 1293.9 394.4 1294.3 396.4 1294.8 398.4 1296.0 398.5 1298.1 399.5 1300.1 399.2 1302.2 398.3 1304.3 398.2 1306.4 398.8 1308.5 399.0 1310.6 398.2 1312.9 398.2 1314.7 399.3 1316.5 400.5 1318.5 401.0 1320.6 401.3 1322.6 401.9 1324.5 402.7 1326.3 403.9 1328.3 404.8 1330.3 405.8 1332.3 406.7 1334.3 407.6 1336.1 408.8 1337.8 410.2 1339.8 411.2 1341.8 412.1 1343.8 413.0 1345.9 413.9 1347.9 414.7 1349.6 416.3 1351.5 417.4 1353.6 417.3 1355.7 416.7 1357.8 416.8 1359.9 417.2 1362.0 417.5 1364.0 418.4 1366.0 419.2 1368.4 417.9 1370.0 416.6 1371.8 415.7 1373.6 414.8 1375.3 413.8 1377.1 412.7 1378.6 411.3 1380.0 409.7M1175.8 355.6 1177.8 356.6 1179.9 357.4 1182.0 357.9 1184.3 358.0 1186.4 358.7 1188.4 359.4 1189.6 361.3 1190.4 363.1 1191.3 365.0 1192.4 366.7 1193.4 368.4 1194.8 370.1 1196.6 371.7 1197.7 373.6 1197.9 376.1 1198.6 378.2 1200.4 379.6 1201.9 381.0 1202.7 382.9 1203.3 384.9 1205.4 386.6 1207.7 388.1 1209.2 390.3M1080.0 377.8 1082.2 377.7 1084.3 377.3 1086.3 376.3 1088.1 374.7 1090.1 373.9 1092.2 373.4 1094.3 372.9 1096.4 372.6 1098.8 372.4 1101.0 372.2 1103.2 371.9 1105.5 371.7 1107.7 371.6 1105.6 370.7 1103.8 368.8 1102.0 366.9 1101.9 364.2 1102.1 361.9 1102.9 359.8 1103.9 357.6 1104.7 355.5 1106.8 354.7 1108.5 353.5 1109.7 351.7 1111.2 350.4 1113.4 350.2 1115.1 351.6 1117.3 352.0 1119.5 352.3 1121.6 353.1 1122.6 355.0 1124.1 356.8 1126.1 358.1 1125.8 360.6 1124.8 362.6 1123.9 364.6 1123.1 366.7M1080.0 394.4 1082.3 394.4 1084.5 395.8 1086.9 396.0 1089.2 396.2 1091.5 396.2 1093.9 395.6 1095.4 393.9 1097.0 392.3 1098.7 390.6 1099.8 389.5 1101.7 387.8 1102.3 385.7 1102.6 383.5 1103.3 381.5 1103.3 379.2 1103.9 377.2 1105.1 375.5 1106.4 373.9 1107.8 372.2M1179.2 386.2 1179.8 384.1 1181.1 382.5 1181.4 381.2 1181.7 379.9 1182.4 378.8 1182.7 377.1 1183.9 375.9 1185.8 376.3 1187.5 376.7 1189.1 376.2 1190.8 375.9 1192.5 376.3 1193.9 377.7 1195.2 378.9 1196.2 380.2 1197.2 381.6 1198.7 382.8 1199.9 384.4 1200.4 386.3 1200.7 388.3 1199.9 390.3 1197.8 391.9 1196.9 393.6 1196.5 395.7 1195.0 396.6 1193.0 396.2 1191.2 395.9 1189.6 396.1 1188.0 396.2 1186.4 395.6 1185.1 394.8 1183.8 393.7 1182.9 392.2 1182.0 390.5 1181.0 388.5 1179.2 386.2M1189.7 400.0 1191.5 402.0 1193.6 403.6 1195.4 405.5 1197.4 406.5 1199.4 407.6 1201.2 409.2 1203.2 410.3 1205.7 410.1 1208.2 410.2 1209.6 412.3 1210.7 414.4 1212.6 415.5 1215.1 415.9 1216.8 417.2 1217.6 416.5 1219.3 415.2 1220.8 413.7 1222.3 412.1 1223.2 410.1 1224.0 407.9 1225.7 406.6 1227.6 405.6 1229.4 404.4 1231.5 403.5 1233.2 402.4 1234.3 400.4 1235.6 398.6M1189.7 400.0 1191.6 398.5 1193.7 397.8 1195.8 396.9 1197.9 396.1 1200.0 395.1 1201.9 393.8 1205.1 394.6 1207.8 395.8M1231.4 418.1 1233.1 417.0 1234.5 415.4 1236.2 414.3 1238.0 413.3 1240.2 412.6 1242.5 412.4 1244.6 411.8 1246.6 411.0 1247.5 413.9 1247.7 416.8 1245.6 417.1 1244.2 418.8 1243.2 421.0 1241.7 422.6 1240.1 424.0 1240.6 426.0 1240.0 428.5 1239.7 431.1 1240.9 433.4 1243.2 434.5 1244.4 436.4 1245.3 438.6 1246.7 440.3M1116.0 400.0 1114.9 401.9 1114.2 404.0 1114.5 406.2 1115.8 408.2 1116.3 410.2 1116.2 412.5 1116.7 414.8 1117.7 416.8 1118.8 418.9 1119.9 420.9 1121.0 422.9 1121.6 425.0 1121.8 427.2 1122.6 429.0 1123.4 430.6 1124.4 431.9 1126.3 432.1 1127.7 432.1 1128.3 432.5 1128.9 432.8 1129.5 432.7 1130.1 432.3 1130.6 431.5 1130.7 430.3 1131.2 428.2 1131.4 426.2 1131.5 424.2 1131.9 422.3 1132.2 420.4 1131.9 418.5 1131.5 416.7 1131.1 414.9 1131.4 412.9 1131.0 411.1 1129.7 409.7 1128.5 408.4 1127.1 407.3 1125.6 406.3 1124.6 404.9 1123.7 403.5 1122.7 402.3 1121.7 401.2 1120.7 400.3 1119.5 399.9 1118.5 399.7 1117.7 399.9 1117.1 400.4 1116.0 400.0M1167.5 436.1 1169.6 435.7 1171.3 434.6 1172.8 433.2 1174.0 431.1 1176.3 430.5 1178.7 431.1 1180.8 431.0 1183.0 430.9 1185.2 430.6 1187.2 429.7 1189.1 428.5 1191.1 427.6 1193.3 427.0 1195.4 427.2 1197.4 428.0 1199.4 428.4 1201.5 428.5 1203.6 428.6 1205.7 428.5 1207.8 428.3 1209.9 429.4 1211.5 430.7 1213.4 431.4 1215.6 431.3 1217.5 431.8 1218.8 433.9 1220.3 435.7 1222.3 436.1 1224.3 436.5 1226.5 436.8 1228.6 437.2 1230.6 437.6 1232.6 438.5 1234.7 439.0 1236.8 438.9 1239.0 439.0 1241.1 438.9 1244.0 439.2 1246.7 440.3M1167.5 437.5 1169.6 437.2 1171.7 438.2 1173.8 438.3 1175.8 438.4 1177.9 438.0 1180.0 437.5M1255.0 450.0 1255.7 447.9 1256.2 445.8 1255.7 443.8 1254.3 441.7 1257.4 441.2 1259.6 442.5 1261.9 443.2 1264.2 443.5 1266.5 443.7 1268.8 443.9 1269.7 445.2 1271.4 446.8 1273.2 448.1 1274.4 450.0M1267.5 423.6 1269.0 421.7 1270.7 419.9 1272.5 418.2 1274.5 416.7 1275.2 414.6 1275.6 412.4 1276.2 410.3 1277.6 408.5 1279.5 408.4 1281.2 406.9 1282.8 405.2 1284.7 404.2 1286.5 403.0 1289.0 403.1 1291.1 404.0 1293.2 404.4 1295.3 404.5 1297.4 404.5 1299.4 404.7 1301.8 404.3 1303.9 403.6 1305.9 402.7 1308.0 402.0 1307.8 404.1 1308.6 406.4 1309.4 408.8 1308.2 408.4 1306.8 410.0 1305.5 411.6 1303.9 412.8 1302.2 413.9 1301.6 416.0 1301.5 418.3 1301.0 420.4 1300.1 422.5 1298.9 424.2 1297.6 425.8 1296.1 427.3 1295.4 429.2 1295.1 431.4 1294.0 433.1 1292.1 434.3 1291.1 436.1M1327.1 426.2 1326.0 425.3 1324.9 424.2 1325.5 422.9 1326.5 421.8 1327.9 421.1 1329.7 421.1 1331.3 420.9 1333.0 420.2 1334.9 419.7 1337.0 420.2 1339.0 421.1 1341.1 421.0 1342.8 420.8 1343.7 422.1 1342.8 424.1 1342.4 425.5 1342.3 426.9 1342.0 428.3 1341.6 429.7 1340.9 431.1 1340.1 432.6 1339.2 434.3 1337.6 435.5 1335.8 436.6 1333.8 436.3 1332.4 435.2 1331.3 434.2 1330.1 433.7 1329.0 433.1 1328.1 432.3 1327.2 431.5 1326.6 430.6 1326.0 429.6 1325.6 428.6 1325.6 427.5 1327.1 426.2M1320.0 285.7 1318.6 284.6 1317.3 283.2 1317.5 281.5 1318.3 279.8 1319.3 278.2 1320.8 276.8 1322.4 275.5 1324.5 274.4 1326.8 273.4 1329.3 272.3 1332.2 271.3 1335.5 270.9 1337.7 270.8 1339.7 270.9 1343.8 271.3 1347.6 272.2 1351.1 273.8 1354.2 275.5 1357.1 277.4 1359.5 279.5 1361.3 281.8 1362.2 284.6 1363.0 286.9 1363.6 289.2 1363.6 291.7 1363.2 294.4 1362.5 296.9 1361.4 299.1 1360.1 300.8 1358.7 302.3 1357.1 303.5 1355.5 304.6 1353.7 305.8 1351.6 306.6 1349.1 306.5 1346.6 306.3 1343.9 306.9 1340.3 307.2 1337.1 305.8 1334.6 303.4 1332.1 301.8 1329.6 300.2 1327.4 298.4 1325.1 296.8 1323.1 295.0 1321.8 292.6 1320.9 290.3 1320.1 288.0 1320.0 285.7M1275.6 199.5 1278.0 198.6 1280.3 197.7 1282.8 197.2 1284.5 198.6 1286.4 199.1 1288.8 198.2 1290.9 198.2 1292.8 199.0 1291.8 202.6 1290.0 204.3 1287.6 203.7 1285.6 203.8 1283.5 204.2 1281.4 204.4 1279.0 203.5 1277.0 202.3 1275.6 199.5M1309.1 181.7 1310.4 181.2 1312.3 181.0 1314.6 180.8 1317.3 180.8 1320.6 181.0 1324.3 181.1 1326.4 181.3 1328.5 181.1 1330.9 181.3 1333.1 181.8 1335.6 182.5 1338.0 183.5 1340.3 185.4 1343.0 186.2 1346.0 186.5 1348.9 187.0 1351.1 187.0 1353.3 187.2 1355.1 188.7 1353.6 189.9 1353.2 191.0 1352.8 192.8 1351.5 193.9 1349.8 195.0 1347.8 195.6 1345.5 195.4 1343.2 195.1 1340.7 195.5 1338.2 195.9 1335.5 195.4 1332.8 194.6 1330.0 193.7 1327.3 192.7 1324.6 191.8 1321.9 191.3 1319.3 190.5 1317.2 189.0 1315.3 187.4 1313.4 186.5 1311.3 186.0 1310.0 184.8 1309.5 183.2 1309.1 181.7M1341.1 180.6 1343.4 180.7 1345.8 180.6 1347.9 181.4 1349.9 182.7 1352.0 183.5 1354.1 184.6 1356.4 184.7M1375.8 190.3 1377.9 191.7 1380.0 193.1M1295.3 205.6 1295.0 207.6 1293.5 209.4 1293.3 211.4 1293.6 213.6 1293.3 215.7 1293.2 217.8 1292.9 219.8 1291.2 221.5 1289.9 223.3 1293.1 224.8 1295.2 224.5 1297.3 225.0 1299.3 225.7 1301.4 225.9 1303.7 225.1 1305.9 225.1 1307.8 226.4 1310.2 226.6 1312.2 225.2 1314.2 223.6 1316.4 223.1 1318.7 222.8 1319.0 225.7 1318.2 227.6 1317.6 229.6 1317.6 231.6 1317.4 233.7 1318.3 233.3 1320.0 234.7 1322.1 235.1 1324.2 235.1 1326.3 235.6 1328.2 236.3 1330.2 237.0 1331.9 238.4 1333.8 239.6 1335.9 240.1 1338.0 240.5 1339.9 241.6 1341.6 243.1 1343.5 244.0 1345.7 244.2 1347.8 244.6 1349.6 245.6 1351.5 246.4 1353.6 246.7 1355.7 246.8 1357.7 247.6 1359.6 249.0 1361.8 250.0 1364.1 250.7 1366.3 251.5 1368.9 251.3 1370.1 248.9 1372.4 247.5 1374.9 246.3 1375.7 243.7 1376.1 241.1 1377.2 238.9M1295.3 205.6 1297.4 206.0 1299.8 205.4 1302.0 205.9 1304.1 206.7 1306.2 207.3 1308.3 208.3 1310.4 209.0 1311.8 210.2 1313.4 211.5 1315.3 212.3 1317.2 213.0 1319.2 213.7 1321.5 213.7 1323.3 214.7 1324.5 216.6 1326.7 216.6 1328.8 215.6 1331.0 214.7 1333.3 215.0 1335.6 215.4 1337.9 215.0 1340.2 214.9 1342.4 214.2 1344.3 212.5 1346.4 211.5 1348.9 212.4 1351.3 212.9 1353.5 212.2 1355.6 211.4 1357.8 210.7 1360.0 210.5 1362.1 210.8 1364.2 211.2 1366.3 211.7 1368.3 212.6 1370.3 213.3 1372.3 214.2 1374.4 214.4M1343.9 232.8 1346.2 231.8 1348.5 231.4 1350.8 231.8 1353.2 232.8 1355.5 232.7 1357.8 231.5 1358.1 229.5 1359.6 227.7 1361.0 225.8 1361.8 223.5 1364.7 222.8 1367.5 222.8M1080.0 570.8 1081.4 571.2 1082.3 572.9 1083.6 573.7 1085.2 574.3 1086.3 575.6 1087.1 577.2 1087.9 578.7 1088.4 580.3 1088.7 581.8 1088.9 583.3 1088.7 584.7 1089.1 586.0 1090.2 587.5 1089.7 588.5 1088.4 588.8 1087.4 589.1 1086.5 589.6 1085.4 589.9 1084.4 589.4 1083.4 588.7 1082.6 588.2 1081.9 587.3 1081.0 587.2 1080.0 587.5M1243.9 452.8 1245.4 455.0 1247.2 456.8 1249.2 458.5 1251.6 458.5 1253.7 458.8 1255.7 459.3 1257.8 459.6 1257.2 457.3 1256.8 454.9 1257.7 452.4 1257.8 450.0M1249.4 468.1 1251.5 467.2 1253.2 465.6 1255.4 465.0 1257.6 464.7 1259.7 464.4 1261.6 463.8 1263.6 463.4 1265.8 464.0 1267.9 464.4 1269.8 463.6 1271.7 462.8 1274.0 462.6 1276.4 461.9 1278.7 462.0 1281.0 462.4 1283.3 462.8 1285.6 463.3 1287.7 464.7 1289.6 465.9 1291.4 467.1 1293.3 468.3 1295.3 469.4M1249.4 468.1 1250.3 470.1 1250.0 472.3 1250.4 474.3 1251.2 476.3 1252.9 477.3 1255.0 478.3 1256.9 479.5 1258.2 481.5 1259.3 483.7 1260.3 485.8 1261.9 487.5M1274.4 450.0 1275.8 451.7 1277.7 453.1 1279.1 454.8 1280.5 456.5 1282.2 456.7 1284.2 457.5 1286.3 458.0 1288.4 457.9 1290.5 458.0 1292.6 458.7 1294.6 459.5 1296.6 459.9 1298.6 460.8 1300.5 461.9 1302.2 463.6 1304.0 464.8 1306.0 465.9 1308.0 466.9 1310.4 466.9 1313.2 466.4 1315.3 467.5 1317.2 469.2 1319.4 470.2 1321.5 471.4 1323.7 472.1 1325.9 472.8 1328.1 473.5 1330.3 474.0 1332.6 474.4 1333.6 476.1 1335.2 478.0 1333.4 477.8 1331.3 478.1 1329.2 478.5 1327.2 479.2 1325.0 478.5 1322.8 477.5 1320.7 476.6 1318.8 475.2 1316.5 474.3 1314.0 474.1 1311.6 474.3 1309.2 475.0M1324.4 462.5 1326.3 461.3 1328.5 460.8 1330.4 459.6 1332.2 458.4 1334.0 457.2 1335.7 455.7 1337.8 456.1 1339.9 456.9 1342.1 457.6 1344.4 457.8 1346.8 458.0 1348.7 459.5 1350.3 461.2 1352.2 462.6 1354.2 463.8 1356.1 465.0 1358.3 466.0 1360.4 467.1 1362.0 468.7 1363.6 470.5 1365.5 471.8 1367.3 473.2 1369.1 474.8 1369.2 477.4 1370.0 479.5 1371.8 481.1 1373.4 482.8 1374.6 484.6 1374.2 487.0 1373.8 489.3 1373.4 491.6 1372.9 493.8 1372.4 496.0 1373.7 496.3 1375.3 497.6 1376.9 498.8 1378.6 499.9 1380.0 501.4M1141.1 491.7 1143.2 490.5 1145.2 489.4 1147.3 488.5 1149.5 487.6 1151.5 488.3 1153.7 488.5 1155.9 489.0 1158.0 489.5 1159.9 491.4 1161.4 493.1 1162.9 494.7 1164.2 496.6 1164.8 495.3 1166.7 494.0 1168.6 492.6 1170.8 491.9 1173.1 491.8 1175.3 491.6 1177.4 490.7 1178.9 491.8 1180.4 493.4 1181.7 495.3 1183.5 496.6 1184.7 498.1 1185.5 500.4 1185.1 502.9 1183.7 504.5 1183.4 506.7 1183.2 508.9 1182.9 511.1 1183.0 513.5 1182.5 515.6 1181.4 518.0 1180.3 520.2 1178.8 522.3 1175.7 524.8 1175.1 527.8 1174.5 530.6 1174.9 532.6 1176.0 534.7 1176.1 536.8 1175.4 538.9 1176.3 541.0 1177.9 542.3 1179.3 543.8 1180.0 545.7 1180.6 547.8 1182.0 549.5 1184.3 551.0 1185.5 553.0 1185.9 555.4 1185.8 557.8 1185.5 560.1 1185.3 562.4 1186.3 564.5 1187.5 566.6 1187.6 569.0 1187.6 571.3 1187.7 573.6 1188.1 575.9 1188.3 578.2 1188.0 580.6 1188.2 582.5 1188.4 584.6 1188.6 586.7 1188.7 588.8 1190.6 588.6 1192.6 587.9 1192.6 585.4 1192.9 583.4 1193.7 581.5 1194.5 579.6 1194.8 577.6 1194.7 575.5 1195.3 573.3 1196.3 571.1 1196.8 568.9 1197.5 566.8 1197.8 564.6 1197.6 562.4 1197.5 560.2 1197.2 558.0 1196.6 555.8 1197.1 553.7 1198.2 551.6 1198.6 549.4 1199.2 547.3 1197.0 544.8 1194.8 543.9 1192.7 542.8 1189.9 544.7 1191.0 546.4 1190.7 548.6 1189.6 550.7 1189.5 552.9 1189.6 554.9 1189.8 557.0 1190.8 559.0 1191.6 561.1 1191.7 563.2 1191.9 565.2 1191.7 567.2 1191.5 569.2 1191.2 571.3 1190.5 573.2 1190.1 575.2 1189.4 577.2 1188.9 579.2 1189.3 581.3 1189.7 583.3M1141.1 491.7 1140.8 493.9 1139.9 496.0 1139.7 498.3 1139.6 500.5 1139.4 502.7 1141.2 504.4 1142.7 506.0 1143.7 507.9 1144.9 509.8 1146.6 511.2 1148.4 512.5 1149.9 514.0 1151.7 515.4 1153.1 517.1 1154.0 519.1 1155.5 520.6 1157.6 521.6 1159.6 522.6 1160.9 524.5 1162.3 526.2 1164.2 527.0 1166.3 527.4 1168.5 529.6 1170.4 531.9 1169.8 534.3 1169.3 536.6 1168.9 538.9M1152.6 508.8 1155.5 507.4 1158.6 506.3 1159.7 506.8 1161.9 506.5 1164.0 506.9 1165.9 508.0 1167.0 509.3 1169.6 509.6 1171.9 510.2 1173.2 512.0 1174.3 514.1 1175.1 516.1 1176.0 518.3 1177.1 520.4 1178.8 522.1 1176.3 523.1 1173.9 523.8 1171.5 524.4 1169.0 524.7 1166.4 523.4 1164.3 522.4 1162.2 521.4 1160.2 520.2 1159.4 517.3 1158.3 515.2 1156.1 513.8 1154.1 512.3 1152.6 508.8M1185.6 482.9 1187.3 481.6 1189.0 480.4 1190.7 479.1 1192.3 477.8 1194.0 476.5 1195.9 477.4 1197.9 478.2 1200.0 478.8 1202.1 479.4 1203.9 480.8 1205.8 482.1 1207.2 483.9 1208.3 486.0 1210.0 487.6 1212.2 488.6 1214.2 489.4 1215.8 491.2 1217.5 492.7 1219.4 493.9 1221.3 495.1 1220.1 496.0 1219.1 497.8 1218.3 499.7 1216.8 500.6 1214.8 501.2 1212.6 500.8 1210.4 500.6 1208.2 501.3 1206.1 501.8 1204.3 503.0 1202.8 504.7 1200.9 505.7 1199.0 507.4 1197.0 508.8 1194.7 506.6 1193.0 504.6 1191.5 502.4 1191.7 500.5 1190.6 498.6 1188.7 497.0 1187.9 495.1 1187.1 493.1 1186.5 491.1 1186.6 488.9 1186.6 486.8 1186.2 484.7 1185.6 482.9M1168.9 538.9 1166.9 540.0 1165.9 542.2 1163.9 543.4 1161.6 544.0 1160.1 546.1 1159.7 548.7 1158.7 550.9 1157.4 552.9 1156.1 554.9 1154.1 556.8 1152.3 558.4 1150.6 560.1 1148.9 562.0 1148.0 563.7 1146.2 565.4 1144.9 567.4 1143.8 569.4 1143.5 571.7 1143.7 574.1 1144.0 576.5 1143.3 578.7 1141.8 580.9 1141.5 583.2 1141.6 585.5 1141.2 587.9 1140.7 590.3 1140.1 592.6 1139.2 594.8 1138.3 597.0 1137.1 599.1 1135.4 600.9 1134.3 603.1 1133.2 605.2 1132.7 607.5 1133.5 609.7 1134.1 612.0 1133.9 614.1 1134.8 615.3 1135.2 617.5 1134.8 619.9 1135.6 621.9 1137.3 623.5 1138.6 625.2 1138.7 627.7 1139.1 630.1 1140.7 631.8 1142.5 633.4 1143.8 635.1 1145.0 636.9 1146.4 638.5 1148.2 639.9 1149.7 641.4 1151.0 643.0 1152.5 644.5 1154.4 645.2 1156.4 645.8 1158.3 647.4 1160.2 649.0 1161.8 650.8 1162.8 653.3 1164.5 655.0 1167.1 655.4 1169.5 656.1 1170.8 657.7 1172.1 659.5 1174.0 660.2 1176.3 660.3 1178.3 661.7 1179.5 663.9 1181.2 665.6 1183.2 666.7 1185.3 667.8 1186.8 669.7 1186.3 671.7 1187.2 673.7 1188.9 675.5 1189.4 677.6 1190.5 678.3 1192.4 679.3 1194.6 679.8 1196.7 680.3 1198.7 681.1 1200.7 682.1 1202.8 682.4 1204.9 682.7 1207.0 682.8 1209.1 682.5 1211.3 682.0 1213.3 681.2 1215.3 680.5 1217.4 680.3 1219.5 680.1 1221.6 679.9 1223.7 679.1 1225.9 678.3 1228.2 677.8 1230.5 677.0 1232.6 675.9 1234.5 674.7 1236.6 673.6 1238.7 672.5 1240.9 671.8 1243.2 671.8 1245.1 671.0 1246.9 669.9 1248.7 668.8 1250.3 667.4 1252.0 666.2 1254.0 665.8 1256.3 665.5 1257.7 664.0 1258.7 661.9 1260.6 661.1M1142.5 602.8 1143.5 600.6 1144.1 598.5 1143.9 596.2 1143.2 593.8 1143.4 591.6 1145.0 589.8 1146.1 588.0 1147.0 586.0 1147.9 584.1 1148.1 581.8 1148.1 579.6 1148.9 577.6 1150.7 576.0 1152.4 574.7 1154.2 573.5 1155.9 572.2 1158.0 571.3 1159.9 570.3 1161.2 568.8 1162.7 567.0 1164.8 566.4 1167.1 566.4 1169.1 565.7 1171.3 564.7 1173.6 563.7 1175.8 562.5 1177.3 564.5 1178.6 566.7 1179.1 569.5 1179.6 572.3 1179.6 574.7 1180.3 576.9 1182.0 578.8 1182.7 581.0 1182.8 583.3M1142.5 602.8 1143.3 604.7 1145.1 606.1 1145.6 608.1 1145.5 610.5 1146.2 612.5 1146.9 614.5 1148.4 616.6 1150.6 617.9 1152.7 619.4 1154.3 621.2 1156.1 622.9 1157.3 622.7 1159.4 623.2 1161.4 623.9 1163.2 625.7 1164.4 627.4 1167.2 627.6 1169.7 628.1 1170.5 630.6 1170.8 633.1 1172.6 634.4 1175.0 635.2 1176.4 636.8 1177.0 639.1 1178.2 640.9 1180.3 641.9 1182.2 643.0 1183.6 644.7 1184.9 646.4 1186.0 648.2 1187.0 650.5 1188.7 652.2 1191.1 653.1 1193.0 654.5 1194.4 656.4 1196.3 657.4 1198.3 658.8 1200.2 660.5 1202.4 661.2 1204.8 661.7 1207.0 662.0 1209.0 662.6 1211.1 663.0 1213.2 663.4 1215.2 663.8 1217.5 663.0 1219.7 661.8 1221.8 662.2 1223.5 661.8 1225.6 661.2 1228.1 661.3 1230.3 660.9 1232.3 659.9 1234.4 659.0 1236.2 657.5 1237.9 655.8 1239.0 654.6 1241.0 653.4 1242.4 651.7 1243.5 649.7 1244.4 647.9 1245.8 646.4 1247.1 644.9 1247.9 643.0 1248.5 641.1 1250.4 639.1 1252.0 637.3 1253.9 635.7 1256.9 635.2 1259.0 634.8 1260.4 632.7 1262.0 630.9 1264.2 630.4 1266.6 630.0 1267.9 627.6 1268.2 625.0 1269.5 623.0 1268.7 621.8 1267.4 619.8 1265.6 618.1 1263.9 616.4 1262.8 614.3 1263.1 611.6 1263.0 609.3 1262.5 606.9 1262.6 604.6 1263.5 602.3 1263.8 600.0 1263.1 597.8 1262.7 595.6 1263.5 593.5 1264.6 591.4 1264.6 589.2 1264.3 587.0 1264.3 584.9 1263.8 582.7 1263.7 580.5 1263.2 579.0 1262.5 577.0 1261.7 575.1 1261.0 573.2 1260.3 571.2 1260.1 569.0 1259.8 566.9 1258.4 564.6 1257.7 562.2 1257.1 559.8 1256.6 557.7 1257.1 555.3 1257.8 553.0 1257.4 550.8 1256.9 548.6 1256.4 546.4 1255.7 544.3 1253.6 542.2 1251.2 540.8 1249.0 539.3 1247.5 540.0 1245.4 540.5 1243.3 540.8 1241.2 541.0 1238.9 540.0 1236.9 539.4 1235.0 538.6 1235.2 540.3 1233.8 542.4 1233.2 544.0 1232.2 546.1 1232.0 548.3 1231.9 550.6 1231.6 552.8 1229.1 553.2 1226.7 553.6 1224.5 554.3 1222.4 554.6 1220.3 555.0 1218.2 555.5 1216.1 555.1 1214.5 555.8 1212.9 557.6 1211.6 559.5 1210.9 561.7 1210.3 563.8 1209.7 565.9 1209.0 568.0 1207.2 565.9 1205.2 563.7 1204.9 561.8 1204.5 559.8 1204.4 557.7 1203.6 555.9 1202.2 554.2M1256.4 562.5 1258.7 561.8 1261.0 561.3 1263.4 561.3 1265.2 562.6 1267.3 562.9 1269.6 562.2 1271.7 562.2 1273.3 564.0 1274.7 565.8 1276.1 567.5 1277.4 569.3 1278.4 571.3 1279.7 573.1 1280.3 575.1 1279.7 577.7 1280.0 579.9 1282.2 581.3 1284.1 582.8 1283.6 585.4 1282.9 587.5 1282.8 589.6 1282.4 591.8 1282.7 593.8 1284.0 595.8 1284.6 597.9 1284.3 600.0 1283.3 602.0 1283.1 604.2 1282.9 606.3 1282.5 608.4 1282.2 610.6 1281.8 612.7 1281.3 614.8 1280.8 616.9 1280.2 619.1 1279.6 621.2 1278.1 623.0 1276.4 624.7 1275.7 626.8 1275.1 628.9 1274.3 631.0 1273.4 633.0 1272.6 634.7 1272.8 637.2 1272.8 639.5 1271.2 641.0 1269.4 642.4 1268.6 644.3 1268.1 646.3 1267.0 648.0 1265.4 649.3 1264.1 650.9 1263.1 652.6 1262.9 654.8 1262.8 657.0 1262.6 659.1 1261.9 661.1M1259.2 536.1 1260.6 538.3 1262.2 540.5 1264.2 542.2 1265.6 543.7 1266.7 545.7 1267.5 547.7 1268.4 549.7 1268.9 552.0 1269.4 554.2 1271.2 555.8 1272.7 557.5 1272.8 559.6 1272.6 561.8 1273.1 563.9M1254.4 673.8 1255.7 676.0 1257.1 678.1 1258.0 680.5 1259.1 682.3 1260.5 684.1 1261.7 685.9 1263.1 687.7 1265.3 688.6 1267.3 689.4 1269.6 689.7 1271.8 689.8 1273.2 688.3 1275.3 687.0 1277.1 685.3 1278.7 683.5 1280.4 681.7 1281.8 679.6 1283.3 677.6 1285.3 676.2 1287.0 674.8 1288.0 672.9 1288.7 670.7 1289.9 669.0 1292.1 667.8 1293.6 666.3 1294.2 664.1 1294.5 662.0 1295.5 660.1 1296.5 658.4 1297.1 656.4 1297.5 654.4 1298.1 652.4 1298.7 650.5 1299.4 648.6 1299.0 646.2 1298.7 643.8 1298.6 641.3 1298.4 638.9 1301.2 636.5 1304.3 635.4 1302.3 631.9 1299.7 630.3 1297.3 630.8 1295.3 631.2 1293.2 631.5 1291.1 631.9 1289.7 633.6 1288.1 635.2 1286.3 636.7 1285.0 638.5 1284.2 640.7 1282.9 642.6 1281.4 644.2 1279.9 645.9 1277.7 646.9 1275.4 647.8 1274.0 649.5 1273.0 651.8 1271.7 653.7 1270.1 655.4 1268.6 657.2 1266.9 658.8 1265.4 660.6 1263.6 662.3 1261.6 664.0 1259.8 665.9 1258.4 667.8 1257.2 669.7 1256.9 672.3 1254.4 673.8M1268.9 529.2 1270.8 527.4 1271.9 524.8 1273.7 522.9 1276.4 522.1 1278.7 521.6 1280.9 521.2 1283.2 520.7 1285.3 519.9 1285.5 518.3 1286.7 516.3 1287.9 514.4 1289.2 512.5 1290.8 510.7 1291.8 508.6 1292.3 506.4 1293.0 504.3 1293.8 502.3 1294.7 500.3 1295.2 498.1 1295.6 495.8 1296.7 493.9 1298.2 492.1 1299.4 490.2 1302.5 490.5 1305.3 490.2 1305.4 491.1 1306.8 492.5 1308.1 494.0 1309.5 495.5 1310.7 497.2 1310.9 499.5 1311.0 501.9 1310.6 504.2 1310.7 506.6 1310.9 508.9 1311.2 511.2 1313.0 512.8 1314.9 513.9 1315.8 515.8 1316.1 518.0 1317.2 519.7 1319.5 520.1 1321.5 520.8 1323.4 521.8 1325.3 522.8 1327.3 523.4 1328.6 525.5 1329.2 527.6 1327.1 529.2 1325.3 530.2 1323.6 531.3 1321.9 532.3 1321.1 534.4 1320.1 536.7 1319.6 539.2 1321.4 538.5 1323.3 539.4 1325.1 540.6 1326.9 541.6 1328.6 543.0 1329.4 545.4 1331.1 547.4 1332.5 549.5 1331.2 552.4 1329.8 554.2 1328.4 555.8 1326.4 557.2 1325.2 559.0 1324.7 561.3 1325.3 563.4 1325.5 565.7 1325.6 568.0 1326.0 570.3 1326.3 572.6 1326.1 575.0 1325.7 577.1 1326.3 579.1 1328.1 580.7 1328.8 582.6 1328.6 584.7M1268.9 529.2 1270.5 530.9 1271.7 533.1 1273.4 534.7 1275.3 536.1 1277.0 537.7 1279.0 538.5 1280.8 539.4 1282.7 540.1 1284.6 540.9 1286.0 542.4 1287.1 544.5 1288.5 546.0 1290.0 547.5 1291.3 549.1 1292.2 551.1 1293.5 552.8 1295.3 553.9 1297.1 555.2 1298.1 557.0 1299.1 558.7 1300.1 560.5 1300.8 562.4 1301.8 564.1 1302.5 566.1 1303.3 568.0 1304.9 569.5 1306.3 571.1 1307.2 573.0 1308.1 574.9 1308.5 577.2 1308.7 579.5 1309.1 581.7 1309.1 584.1 1309.5 586.4 1310.9 588.5 1312.1 590.9 1311.6 593.4 1310.7 596.0 1312.7 598.3 1314.7 600.0M1301.7 544.4 1301.6 543.1 1301.5 541.7 1302.5 540.7 1304.2 540.6 1305.1 540.2 1305.7 539.2 1306.7 538.7 1308.0 538.8 1309.2 539.0 1310.6 539.3 1311.9 539.7 1313.2 540.5 1313.4 542.2 1313.9 543.6 1314.4 544.8 1314.7 546.1 1315.7 547.5 1316.2 549.1 1315.0 550.3 1313.5 551.1 1312.6 552.1 1311.7 553.1 1310.5 553.8 1309.2 554.3 1307.8 553.8 1306.9 552.8 1306.2 551.8 1305.2 551.6 1304.0 551.3 1303.4 550.5 1303.1 549.5 1302.8 548.5 1303.3 547.3 1303.4 546.3 1302.6 545.5 1301.7 544.4M1366.1 526.4 1368.3 526.5 1370.4 526.2 1372.4 525.9 1374.6 525.6 1377.3 525.1 1380.0 524.4M1366.1 526.4 1365.5 528.8 1364.7 531.1 1364.3 533.6 1364.0 536.0 1365.4 538.1 1367.5 539.1 1368.9 540.5 1369.9 542.3 1370.9 544.0 1372.1 546.4 1373.2 548.6 1373.7 551.1 1375.1 550.9 1376.9 549.9 1378.1 547.9 1380.0 547.2M1355.2 566.7 1354.7 565.0 1354.3 563.2 1355.2 561.7 1357.0 560.9 1358.1 560.0 1359.2 559.1 1360.4 558.4 1361.7 557.5 1363.2 556.9 1364.9 556.2 1366.9 555.5 1369.0 556.1 1370.3 558.4 1371.6 559.9 1373.0 561.2 1374.1 562.9 1374.4 564.9 1374.6 566.9 1374.1 568.9 1373.2 570.6 1372.8 572.4 1372.2 574.2 1371.1 575.7 1369.6 577.1 1368.2 577.4 1366.9 578.7 1365.1 579.6 1363.4 579.1 1361.8 578.2 1360.4 577.2 1359.2 575.8 1357.9 574.6 1356.1 573.5 1355.0 571.6 1355.7 568.9 1355.2 566.7M1331.4 630.6 1328.9 633.6 1329.8 635.4 1330.0 637.7 1329.5 640.2 1330.0 642.4 1331.0 644.5 1332.3 646.3 1333.4 648.0 1334.5 649.7 1335.6 651.4 1337.7 651.5 1339.8 651.6 1342.0 651.3 1344.1 651.6 1345.7 651.5 1347.7 651.1 1349.9 651.4 1352.1 651.4 1354.1 650.7 1356.0 650.0 1358.0 649.5 1360.1 648.2 1361.7 646.8 1362.8 644.8 1364.3 643.2 1366.0 641.9 1367.7 640.6 1369.4 639.3 1371.0 637.9 1371.9 636.4 1373.7 634.7 1374.8 632.7 1375.6 630.4 1374.6 628.9 1373.9 626.9 1373.1 625.0M1083.8 712.5 1084.4 710.8 1085.4 709.4 1085.5 708.0 1085.3 706.3 1086.3 705.1 1088.3 705.1 1089.6 704.8 1090.6 703.8 1091.8 703.1 1093.3 702.4 1095.0 701.8 1096.9 702.3 1098.6 703.8 1099.9 705.3 1100.6 707.0 1101.2 708.6 1101.8 710.2 1102.1 711.9 1101.8 713.6 1101.1 715.2 1100.6 716.8 1099.9 718.6 1098.6 720.0 1097.0 721.3 1095.1 721.9 1093.3 721.4 1091.8 720.9 1090.4 721.2 1088.8 721.5 1087.7 720.6 1087.0 719.1 1086.3 718.0 1085.8 716.7 1085.4 715.4 1084.8 714.1 1083.8 712.5M1156.4 725.0 1157.7 723.9 1159.6 723.4 1160.9 722.0 1162.1 719.9 1164.2 719.2 1166.5 719.4 1168.8 719.4 1171.1 719.6 1173.4 719.9 1175.7 719.5 1178.1 719.0 1180.2 720.2 1179.8 722.9 1180.1 724.7 1181.6 726.7 1182.0 728.9 1181.0 731.1 1180.1 733.3 1180.2 735.6 1180.4 738.0 1179.6 740.0 1178.0 741.9 1177.6 743.9 1178.2 745.8 1177.1 747.8 1175.8 750.0M1156.4 725.0 1156.7 727.1 1157.6 729.1 1158.1 731.1 1158.6 733.2 1158.9 735.3 1158.3 737.6 1158.5 739.8 1160.2 741.6 1161.6 743.4 1161.6 745.8 1161.7 748.2 1163.3 750.0M1252.2 734.7 1252.3 732.3 1253.6 730.0 1254.2 727.6 1254.8 725.2 1256.0 724.9 1257.5 723.0 1259.2 721.7 1261.3 721.0 1263.4 720.2 1265.1 718.7 1266.7 717.1 1268.8 716.5 1271.2 717.0 1273.3 716.7 1275.3 715.8 1277.3 715.0 1279.2 713.7 1281.2 712.6 1283.2 712.0 1285.3 711.3 1287.5 711.4 1289.8 712.1 1291.9 711.8 1293.8 710.3 1295.8 709.6 1298.1 710.4 1300.3 711.0 1302.3 710.0 1304.5 710.2 1306.6 711.0 1308.8 711.8 1310.8 712.8 1312.6 714.3 1314.6 715.5 1315.7 717.1 1316.9 719.0 1317.4 721.0 1317.9 723.1 1319.0 725.0 1319.4 727.2 1318.9 729.3 1317.2 731.1 1316.4 733.2 1316.2 734.9 1315.7 736.9 1314.1 738.3 1312.3 739.5 1311.6 741.4 1313.9 742.9 1315.3 744.5 1315.8 746.9 1317.1 748.7 1318.9 750.0M1226.9 762.5 1227.3 761.2 1227.9 760.0 1228.1 758.9 1228.0 757.6 1228.7 756.6 1229.9 756.2 1231.0 755.7 1231.7 754.5 1232.7 753.6 1234.1 753.7 1235.6 754.1 1236.9 754.3 1238.4 755.2 1239.8 755.8 1241.3 756.2 1242.6 757.1 1243.2 758.5 1243.6 760.0 1244.7 761.1 1245.9 762.5 1245.5 764.3 1244.1 765.9 1243.8 767.6 1244.4 769.6 1243.4 771.2 1241.4 770.9 1239.7 770.7 1238.3 770.9 1237.0 770.9 1235.6 770.9 1234.2 770.7 1232.8 770.4 1231.2 770.3 1229.6 769.5 1228.1 768.5 1226.7 767.0 1226.7 764.6 1226.9 762.5M1263.3 754.2 1264.1 756.1 1266.1 757.4 1266.9 759.3 1268.2 760.3 1270.3 761.2 1272.1 762.5 1274.1 763.4 1275.4 764.6 1277.0 766.1 1278.4 767.8 1279.9 769.5 1282.7 768.6 1285.3 767.1 1287.1 766.0 1289.3 765.0 1291.4 764.0 1293.5 763.2 1295.9 762.9 1298.1 763.3 1300.3 763.9 1302.4 763.6 1304.4 762.2 1306.0 760.9 1307.0 758.9 1308.5 757.5 1310.8 757.3 1313.0 757.4 1314.8 755.7 1316.4 753.7 1318.7 753.6 1320.3 751.4M1283.8 789.6 1284.9 787.3 1285.9 785.0 1287.6 784.7 1289.7 783.7 1291.8 783.6 1293.9 784.1 1296.2 785.4 1298.2 786.6 1300.2 787.7 1302.4 788.6 1304.2 787.9 1306.3 787.8 1308.6 788.4 1310.6 788.0 1312.6 788.1 1314.5 788.9 1315.7 790.7 1317.1 792.4 1316.6 793.7 1316.6 796.0 1314.1 796.9 1312.1 797.6 1310.0 797.9 1307.8 797.4 1305.9 798.0 1304.3 799.6 1302.7 801.0 1299.9 799.9 1298.1 798.5 1296.1 797.6 1294.1 796.5 1291.9 796.1 1289.8 796.1 1287.7 795.9 1285.6 795.8 1284.5 793.6 1283.1 791.4 1283.8 789.6M1080.0 816.7 1080.7 814.7 1080.8 812.4 1081.8 810.6 1083.4 808.9 1084.3 807.0 1086.2 806.7 1088.3 806.5 1090.4 808.0 1092.2 809.4 1093.9 811.1 1096.1 812.0 1098.5 812.1 1100.9 812.0 1100.8 809.7M1093.9 811.1 1094.5 808.9 1095.9 806.9 1096.5 804.7 1097.1 802.5 1097.6 800.2 1096.9 797.9 1096.6 795.8 1096.1 793.8 1095.7 791.7 1095.6 789.6 1095.5 787.5 1096.1 785.4 1097.5 783.3 1098.8 782.9 1099.7 780.7 1101.1 779.1 1103.1 778.5 1105.0 777.8 1107.1 778.5 1109.1 779.3 1111.3 779.7 1113.6 779.7 1115.5 780.9 1116.9 782.5 1118.4 783.8 1120.3 784.5 1122.2 785.3 1122.5 788.1 1122.3 790.3 1122.6 792.4 1123.0 794.4 1123.4 796.5 1124.0 798.6 1124.5 800.6 1125.1 802.7 1125.3 805.1 1125.1 807.4 1124.7 809.7 1126.8 809.3 1129.1 809.0 1131.4 808.9 1133.7 808.7 1136.0 808.7 1138.3 808.9 1140.0 808.3 1142.3 808.1 1144.7 808.3 1146.6 807.3 1148.3 805.9 1150.3 805.1 1152.5 804.9 1154.4 805.4 1156.9 804.3 1159.3 803.5 1161.5 804.8 1163.7 806.5 1166.0 806.5 1167.9 804.3 1169.5 802.8 1171.5 801.9 1173.3 800.6 1174.7 799.0 1176.7 796.7 1178.8 794.7 1180.7 793.5 1182.2 791.8 1183.4 789.8 1185.2 788.4 1187.0 790.5 1188.5 792.2 1190.7 792.8 1192.8 793.7 1194.4 795.2 1195.2 797.5 1196.1 799.4 1197.1 801.1 1197.8 803.1 1197.9 805.2 1198.3 807.2 1198.8 809.2 1199.4 811.1 1197.3 811.0 1195.2 811.0 1193.2 810.2 1191.3 808.8 1188.8 809.2 1186.7 810.9 1184.6 811.7 1182.3 811.2 1180.0 810.9 1181.1 813.4 1182.5 815.5 1183.2 817.9 1181.6 819.7 1180.4 821.4 1179.1 822.9 1177.9 824.6 1178.9 827.6 1179.9 829.8 1181.5 831.9 1180.2 834.3 1178.3 835.6 1176.3 836.7 1173.9 837.4 1171.7 837.5 1169.5 837.9 1167.2 838.0 1165.6 840.8 1166.1 843.3 1167.0 845.8 1166.1 848.0 1164.6 850.0 1163.3 851.8 1162.1 853.6 1160.9 855.6 1159.6 857.4 1158.4 859.3 1156.9 860.5 1155.2 862.2 1153.0 862.9 1150.5 863.2 1150.6 866.4 1151.6 868.5 1152.3 870.8 1149.6 869.5 1147.0 868.3 1146.1 867.3 1144.1 865.7 1143.9 863.4 1144.8 860.8 1144.9 859.0 1144.0 856.9 1143.6 854.9 1143.6 852.8 1143.6 850.7 1143.3 848.6 1141.8 847.2 1140.8 845.2 1139.9 843.2 1139.0 841.1 1138.6 838.7 1137.0 837.2 1135.3 836.2 1133.6 835.1 1131.6 834.5 1129.5 834.1 1127.7 832.3 1126.3 830.4 1124.6 828.7 1122.7 827.3 1121.0 825.7 1121.0 827.6 1119.6 829.6 1120.2 830.9 1120.8 832.8 1121.2 834.8 1121.6 836.8 1121.9 838.8 1121.7 841.2 1122.2 843.3 1123.0 845.2 1123.9 847.1 1125.0 848.9 1126.1 850.7 1127.2 852.5 1128.6 854.2 1129.6 856.5 1130.5 858.8 1131.4 861.1 1130.1 862.8 1128.8 864.5 1127.8 866.3 1129.7 869.3 1131.6 871.1 1133.6 872.8 1135.5 874.1 1137.4 875.4 1139.2 876.7 1141.3 877.5 1143.4 878.5 1144.8 880.3 1146.1 882.2 1147.7 883.7 1149.2 885.7 1150.9 887.5 1152.7 889.1 1154.5 890.8 1157.4 890.4 1159.9 890.1 1162.0 891.3 1164.0 890.7 1165.6 889.2 1167.0 887.3 1168.6 885.7 1171.2 885.6 1173.4 885.8 1175.5 887.3 1177.6 888.5 1179.9 888.5 1182.3 888.2 1184.6 888.5 1186.9 888.9 1189.2 888.9 1191.6 888.1 1194.0 887.9 1196.2 888.1 1198.9 887.9 1201.2 887.1 1203.1 887.7 1205.5 888.0 1208.0 888.3 1210.4 888.6 1212.7 888.6 1214.9 888.7 1217.1 889.2 1219.3 889.5 1221.6 889.8 1221.8 891.1 1222.9 892.9 1224.2 894.6 1226.2 896.0 1228.2 897.2 1230.1 898.5 1231.6 900.2 1233.2 901.7 1235.1 902.8 1237.0 903.9 1238.8 905.1 1240.6 906.4 1242.4 907.3 1244.7 907.5 1246.6 908.2 1247.8 910.2 1247.1 912.3 1248.0 914.7 1249.0 917.0 1249.1 919.5 1250.7 922.3 1252.9 924.3 1255.8 924.0 1257.9 924.4 1259.3 926.4 1260.9 928.2 1262.9 928.8 1262.5 930.6 1262.9 933.3 1262.0 935.4 1260.4 937.0 1258.0 938.0 1256.0 939.4 1255.0 941.7 1253.7 944.0 1251.9 945.9 1250.0 947.8 1247.6 948.5 1245.3 948.8 1243.3 949.5 1241.3 950.6 1239.6 951.6 1237.5 952.1 1235.6 952.8 1235.8 955.7 1235.9 958.6 1238.2 960.2 1240.1 960.9 1241.9 961.9 1243.6 963.0 1241.0 962.6 1238.3 963.8 1236.2 963.5 1234.2 962.4 1232.3 961.1 1230.3 960.4 1228.5 959.5 1226.6 958.6 1224.7 957.8 1222.8 956.9 1221.2 955.6 1219.4 954.4 1217.4 953.6 1215.3 952.7 1213.2 952.0 1210.9 951.7 1208.8 950.9 1206.6 950.4 1204.5 949.6 1203.0 947.6 1201.5 945.9 1199.8 944.6 1198.1 943.2 1196.1 942.3 1193.7 941.9 1192.5 940.2 1191.7 938.3 1190.8 936.5 1190.0 934.6 1189.1 932.8 1186.6 931.5 1184.5 930.5 1182.2 930.0 1179.5 930.2 1177.4 929.2 1175.7 927.4 1173.7 926.1 1171.3 925.7 1172.0 927.5 1170.9 929.3 1169.9 931.0 1170.2 932.4 1169.7 934.9 1170.3 937.0 1171.6 938.9 1173.4 940.1 1174.8 941.7 1176.2 943.3 1177.9 944.5 1179.7 945.8 1181.3 947.1 1183.1 948.3 1184.8 949.6 1186.6 950.8 1188.3 952.2 1189.8 953.7 1191.4 955.2 1192.9 957.5 1194.2 959.9 1196.1 961.7 1198.3 962.8 1200.2 964.1 1202.4 965.0 1204.4 966.2 1206.5 967.3 1208.5 968.5 1210.0 969.8 1211.5 971.1 1213.0 972.5 1214.2 974.2 1215.8 975.4 1217.8 976.1 1219.5 977.1 1221.0 978.5 1222.5 979.8 1224.1 981.1 1225.7 982.3 1227.7 983.0 1230.1 983.0 1231.8 984.0 1233.1 985.9 1234.6 987.2 1236.9 987.4 1239.0 987.8 1240.3 989.6 1241.5 991.6 1243.4 992.3 1245.7 992.3 1247.6 993.2 1249.3 994.3 1251.0 995.5 1252.2 997.4 1253.6 999.1 1255.8 999.3 1257.8 1000.0M1202.5 801.4 1203.2 799.3 1204.1 797.2 1204.2 795.0 1203.7 792.6 1203.9 790.4 1204.5 788.3 1205.0 786.1 1207.1 785.6 1209.0 785.0 1210.4 783.4 1211.7 781.7 1213.5 780.9 1215.6 781.2 1217.5 780.5 1219.1 778.6 1220.9 777.5 1223.1 778.0 1221.5 779.6 1221.5 781.9 1221.8 784.3 1220.9 786.3 1218.9 788.1 1217.6 790.1 1216.9 792.5 1215.8 794.7 1214.2 796.5 1212.2 797.9 1209.9 798.6 1207.4 799.1 1205.8 800.7 1204.3 801.4 1202.5 801.4M1174.0 852.7 1174.3 850.6 1174.5 848.6 1175.3 846.7 1176.7 845.0 1177.5 843.1 1179.5 842.0 1181.3 840.4 1182.5 838.4 1183.9 836.4 1185.5 834.6 1187.8 835.8 1189.7 837.5 1187.8 838.7 1186.6 840.4 1185.6 842.1 1184.6 843.9 1184.2 846.3 1183.7 848.5 1183.7 850.8 1183.9 853.1 1181.4 854.8 1179.0 855.4 1177.0 856.7 1175.8 854.9 1174.0 852.7M1212.4 841.8 1213.2 839.9 1214.0 837.9 1214.6 835.9 1215.0 833.8 1215.8 831.8 1217.9 830.1 1219.9 828.3 1221.9 826.6 1223.9 827.3 1226.1 828.1 1228.4 828.9 1228.7 830.4 1230.3 832.5 1231.4 834.7 1230.6 836.6 1229.6 838.4 1227.7 839.6 1226.1 841.0 1225.0 842.8 1223.7 845.4 1223.5 846.8 1221.8 848.8 1221.3 851.0 1221.3 853.3 1221.2 855.5 1218.9 855.2 1216.1 855.4 1215.2 853.7 1214.1 851.9 1213.4 850.0 1212.9 847.9 1212.2 846.0 1211.4 844.0 1212.4 841.8M1243.0 871.3 1245.3 869.5 1247.7 867.7 1249.9 869.5 1251.6 871.2 1252.8 873.2 1253.7 875.6 1255.2 877.4 1257.1 878.7 1258.9 880.4 1261.3 881.6 1264.0 882.7 1265.6 884.6 1266.7 886.9 1268.4 888.7 1270.1 890.4 1270.5 892.7 1271.6 895.0 1272.6 897.4 1272.5 899.9 1270.0 902.1 1268.0 903.7 1265.7 905.1 1263.9 904.4 1261.6 904.2 1259.2 903.8 1257.2 902.5 1255.0 900.9 1253.6 898.7 1254.0 896.1 1253.3 893.7 1252.1 891.4 1251.7 889.0 1250.3 887.1 1248.6 885.1 1246.6 883.4 1245.9 881.2 1246.0 878.8 1246.3 876.4 1245.5 874.2 1243.0 871.3M1095.3 870.8 1096.2 872.6 1096.5 874.9 1097.7 876.5 1099.2 877.9 1100.3 879.5 1101.4 881.2 1102.5 882.9 1104.1 884.3 1105.5 885.8 1107.3 886.4 1109.4 887.3 1111.2 888.5 1112.9 890.1 1114.8 891.3 1116.6 892.7 1118.5 893.9 1120.1 894.9 1121.8 896.0 1123.7 896.6 1125.8 897.2 1127.5 898.1 1129.5 899.0 1131.3 900.3 1132.7 902.0 1134.3 903.4 1135.8 905.1 1137.5 906.3 1139.7 906.9M1091.7 899.5 1092.9 897.9 1094.1 896.3 1095.0 894.4 1095.7 892.5 1099.3 892.2 1101.6 893.0 1104.0 893.5 1106.4 894.0 1107.7 896.0 1108.2 898.1 1108.4 900.3 1109.4 902.1 1109.3 903.7 1109.5 906.0 1110.9 908.3 1108.7 909.8 1106.6 910.4 1103.9 908.0 1102.4 905.4 1100.1 903.9 1097.7 903.9 1095.2 904.8 1093.2 902.5 1091.7 899.5M1082.8 900.0 1084.2 901.5 1085.3 903.2 1086.4 904.8 1087.5 906.5 1088.4 908.3 1089.4 910.6 1090.8 912.5 1093.2 913.4 1095.5 914.5 1097.2 916.2 1099.2 916.7 1101.2 918.0 1103.0 920.0 1105.2 920.9 1107.7 921.0 1109.9 921.8 1111.7 923.4 1113.6 924.8 1115.8 925.6 1116.0 927.3 1116.2 929.5 1116.2 931.8 1116.6 934.0 1117.7 936.1 1118.4 938.1 1119.0 940.1 1119.5 942.2 1119.2 944.4 1121.3 944.5 1123.5 943.8 1125.6 942.8 1127.8 942.2 1130.0 941.8 1131.6 942.9 1133.1 944.2 1134.7 945.4 1136.3 946.6 1137.9 947.8 1139.1 949.1 1140.9 950.3 1142.2 951.9 1143.1 953.6 1144.2 955.4 1145.3 957.1 1146.6 958.8 1148.5 959.5 1150.5 960.1 1152.3 961.0 1154.3 962.1 1156.0 963.5 1157.4 965.3 1159.2 966.7M1080.0 916.7 1082.3 917.0 1084.2 918.6 1086.5 919.0 1088.8 919.2 1091.1 919.6 1093.1 920.1 1095.0 921.0 1096.4 922.7 1094.6 923.5 1094.4 925.7 1094.4 928.0 1091.7 927.6 1089.7 926.9 1087.6 926.1 1085.6 925.6 1083.5 924.9 1081.9 923.3 1080.0 922.2M1080.0 927.8 1081.9 928.7 1083.7 930.1 1085.8 930.5 1088.3 930.2 1090.3 930.8 1092.2 931.9 1094.1 932.9 1095.5 934.5 1097.0 935.9 1098.5 937.3 1099.8 938.8 1101.6 939.8 1103.5 940.9 1105.3 942.5 1106.9 944.2 1108.5 945.9 1110.1 947.7 1111.9 949.2 1114.1 950.3 1116.3 951.2 1117.9 952.8 1119.2 955.0 1121.0 956.5 1123.7 956.9 1126.0 957.3 1128.3 957.2 1130.7 957.3 1132.9 958.0 1134.8 960.0 1136.5 962.0 1138.3 963.9M1080.0 944.4 1082.3 944.3 1084.5 943.4 1086.7 942.9 1088.9 942.3 1091.1 941.8 1092.6 943.1 1094.2 944.3 1095.6 945.7 1097.2 947.0 1099.3 947.4 1101.6 947.5 1103.3 948.7 1104.7 950.1 1106.4 951.2 1108.3 951.9 1110.1 952.2 1111.9 953.4 1113.8 954.3 1115.8 955.0 1117.7 955.8 1119.6 956.6 1121.4 957.8 1123.4 958.4 1125.5 958.7 1127.5 959.2 1129.5 959.6 1131.5 960.1 1133.6 960.5 1135.6 960.9 1137.6 959.0 1139.7 956.9M1080.0 966.7 1082.1 967.8 1084.2 968.7 1086.6 968.8 1089.1 968.2 1091.3 968.7 1093.1 970.0 1095.0 970.7 1096.9 971.2 1098.9 971.7 1100.9 971.8 1103.0 971.8 1104.9 972.5 1106.0 974.6 1107.5 976.3 1109.2 978.0 1110.9 979.7 1112.7 981.2 1114.6 982.2 1116.2 983.4 1117.8 984.6 1119.6 985.6 1121.4 986.5 1123.1 987.6 1124.7 989.0 1126.5 989.8 1128.6 990.3M1107.8 963.9 1109.8 963.1 1111.8 961.9 1113.8 961.1 1115.7 960.0 1118.7 961.2 1120.3 963.1 1122.2 964.5 1124.2 965.9 1124.8 967.7 1126.4 969.3 1128.3 970.8 1129.5 972.7 1130.7 974.6 1132.2 976.1 1133.9 977.8 1135.6 979.4 1137.1 981.2 1138.3 983.3M1080.0 972.2 1080.9 972.8 1082.0 972.8 1082.6 973.6 1082.7 974.6 1083.2 975.2 1084.4 975.5 1084.8 976.4 1083.3 977.0 1082.2 977.1 1082.0 978.0 1081.4 979.0 1080.0 979.2M1080.0 994.4 1080.5 993.6 1081.2 993.4 1082.0 993.3 1082.8 993.1 1083.4 993.5 1083.5 994.5 1083.3 995.1 1083.1 995.6 1082.6 995.9 1081.9 996.1 1081.0 996.3 1080.0 997.2M1090.5 993.6 1091.4 993.1 1092.8 992.8 1094.2 992.9 1095.6 993.6 1097.1 993.8 1098.6 993.7 1100.2 994.0 1101.6 994.6 1102.9 995.4 1103.8 996.5 1104.4 997.7 1105.0 998.6 1104.0 999.6 1102.7 999.7 1101.2 998.7 1099.9 998.3 1098.4 999.0 1096.9 999.4 1095.6 998.3 1094.7 996.9 1093.7 996.2 1092.9 995.6 1092.2 994.9 1090.5 993.6M1146.7 925.0 1148.9 926.5 1150.4 928.7 1152.3 930.5 1153.4 932.2 1154.6 933.9 1156.2 935.3 1157.4 936.9 1157.6 939.5 1157.9 941.8 1158.7 943.9 1159.5 946.1 1160.5 948.1 1161.7 950.1 1164.2 951.1 1166.6 951.7 1169.0 952.5 1170.7 954.1 1172.3 955.6 1174.0 957.0 1175.7 958.5 1176.4 960.3 1177.6 962.0 1178.0 964.0 1177.5 966.3 1177.6 968.3 1180.4 969.5 1182.8 969.4M1080.0 1008.3 1082.0 1009.2 1083.8 1011.0 1086.0 1011.1 1088.6 1010.3 1090.8 1010.8 1092.6 1012.2 1094.6 1013.1 1096.9 1013.3 1099.1 1013.6 1101.0 1014.7 1103.0 1015.8 1105.0 1016.7 1106.9 1017.8 1109.0 1018.5 1111.1 1019.3 1113.2 1020.0 1115.3 1020.4 1117.4 1020.8 1119.5 1021.5 1121.6 1022.1 1123.6 1022.7 1125.7 1023.2 1127.8 1024.0 1129.6 1025.1 1131.6 1026.0 1133.7 1026.6 1135.8 1027.2 1137.7 1027.5 1139.8 1027.7 1141.7 1028.4 1143.5 1029.8 1145.5 1030.3 1147.6 1030.2 1149.7 1030.5 1151.7 1030.7 1153.8 1031.0 1155.8 1031.1 1157.9 1031.1 1160.0 1031.7 1162.0 1032.8 1164.1 1033.0 1166.4 1032.3 1168.5 1032.2 1170.7 1032.5 1172.8 1032.8 1174.9 1033.3 1177.0 1034.0 1179.1 1034.3 1181.2 1034.8 1183.4 1035.2 1185.4 1035.9 1187.6 1036.1 1189.8 1035.9 1191.9 1035.7 1194.1 1036.1 1196.2 1036.5 1198.3 1036.6 1200.5 1036.7 1202.6 1036.7 1204.7 1036.4 1206.9 1036.4 1209.0 1036.5 1211.2 1036.6 1213.3 1036.0 1215.5 1034.9 1217.6 1035.0 1219.7 1035.2 1221.9 1035.2 1224.0 1034.9 1226.2 1034.8 1228.3 1036.1 1230.4 1037.1 1232.6 1037.0 1234.7 1036.7 1236.8 1036.7 1239.0 1036.5 1241.1 1036.4 1243.2 1035.5 1245.3 1035.0 1247.5 1035.0 1249.6 1034.9 1251.7 1034.4 1253.8 1033.9 1256.0 1034.0 1258.2 1034.6 1260.4 1034.7 1262.6 1035.1 1264.7 1035.1 1266.8 1033.8 1268.8 1032.8 1270.7 1032.2 1272.7 1031.5 1274.7 1031.3 1276.7 1031.2 1278.7 1031.0 1280.7 1031.0 1282.7 1030.9 1284.8 1031.4 1286.9 1031.8 1288.9 1031.4 1290.8 1030.9 1292.8 1030.4 1294.7 1029.5 1296.6 1028.9 1298.5 1027.9 1300.5 1027.3 1302.5 1026.9 1304.5 1026.6 1306.6 1026.2 1308.6 1025.9 1310.7 1026.0 1312.9 1026.7 1315.0 1026.4 1316.9 1025.5 1318.9 1025.0 1321.2 1025.2 1323.4 1025.3 1325.4 1024.7 1327.5 1024.0 1329.6 1023.4 1331.6 1022.7 1333.6 1022.1 1335.6 1021.0 1337.4 1020.0 1339.5 1019.8 1341.5 1019.4 1343.0 1017.8 1344.4 1016.1 1346.3 1015.2 1348.1 1014.4 1350.0 1013.8 1352.2 1013.8 1354.3 1013.3 1356.2 1012.4 1358.2 1011.5 1360.0 1010.4 1361.8 1009.2 1363.8 1008.4 1365.8 1007.7 1367.8 1006.7 1369.6 1005.3 1371.5 1004.2 1374.1 1004.5 1376.5 1004.4 1378.3 1002.9 1380.0 1001.4M1143.9 1027.8 1146.0 1028.2 1148.0 1029.1 1150.1 1029.1 1152.2 1029.2M1157.8 1031.9 1159.9 1031.4 1162.1 1031.0 1164.2 1031.4 1166.2 1032.0 1168.3 1032.4 1170.3 1033.3 1172.3 1033.7 1174.5 1033.7 1176.6 1033.6 1178.7 1033.4 1180.8 1033.1 1182.9 1033.9 1184.8 1035.5 1186.8 1036.0 1189.0 1035.9 1191.1 1035.6M1145.3 1008.3 1147.4 1008.6 1149.5 1008.0 1151.5 1007.4 1153.5 1006.4 1155.6 1006.1 1157.7 1006.3 1160.1 1006.7 1162.4 1007.4 1164.7 1008.0 1167.0 1008.5 1169.2 1009.2 1171.6 1009.1 1173.8 1008.3 1175.8 1008.1 1177.9 1008.3 1180.0 1008.2 1182.1 1007.4 1184.1 1006.8 1186.2 1006.7 1188.3 1006.7 1190.4 1007.0 1192.6 1008.1 1194.6 1008.0 1196.7 1007.0 1198.7 1006.8 1200.8 1006.7 1202.9 1006.6 1204.8 1007.4 1206.7 1008.4 1208.8 1008.4 1210.9 1007.8 1213.0 1008.0 1215.0 1008.3 1217.0 1008.7 1218.9 1009.3 1221.0 1009.9 1223.1 1010.4 1225.1 1011.0 1227.2 1011.4 1229.2 1011.8 1231.3 1012.2 1233.4 1012.7 1235.5 1013.0 1237.7 1012.5 1239.7 1012.0 1241.8 1011.4 1243.8 1010.6 1245.9 1010.9 1248.1 1011.9 1250.2 1011.7 1252.2 1010.3 1253.9 1009.3 1256.2 1009.2 1258.4 1008.9 1260.5 1008.2 1262.7 1008.4 1264.7 1008.9 1266.7 1009.8 1268.8 1010.2 1269.3 1012.2 1270.2 1014.6 1271.8 1016.6 1274.3 1016.9 1276.4 1018.3 1278.5 1019.8 1276.1 1019.3 1273.7 1019.6 1271.3 1020.0 1268.9 1020.8 1267.1 1022.3 1265.6 1024.1 1263.9 1025.8 1261.1 1025.7 1258.6 1025.1 1256.4 1025.8 1254.4 1026.9 1252.2 1027.7 1249.8 1029.9 1251.4 1027.8 1253.5 1027.9 1255.6 1027.9 1257.8 1028.6 1260.0 1029.6 1262.0 1029.0 1264.0 1027.6 1266.1 1027.8M1160.6 1011.1 1161.6 1013.1 1163.0 1014.8 1164.4 1016.6 1165.6 1018.5 1166.6 1020.1 1168.7 1021.4 1169.7 1023.2 1167.5 1026.4M1171.0 982.2 1172.7 981.2 1174.5 980.2 1176.3 979.2 1178.2 978.5 1180.8 980.1 1182.1 982.5 1183.8 984.3 1186.4 984.8 1188.8 985.5 1190.3 986.8 1191.8 988.4 1193.6 989.5 1195.0 990.9 1196.8 991.9 1198.8 992.5 1200.6 993.4 1200.7 995.4 1201.1 997.6 1200.2 997.8 1198.8 999.6 1197.0 1000.7 1194.4 1000.9 1192.0 1001.0 1189.7 1001.3 1188.5 1003.0 1185.7 1004.3 1183.0 1003.8 1180.7 1004.9 1178.4 1006.3 1175.9 1006.1 1175.3 1003.1 1174.0 1001.1 1172.3 999.5 1171.9 997.8 1170.7 995.9 1169.8 993.9 1170.1 991.7 1171.4 989.7 1171.4 987.6 1170.6 985.3 1171.0 982.2M1203.6 984.7 1205.0 986.3 1206.5 987.7 1208.2 988.8 1210.0 989.9 1212.0 990.6 1214.6 990.1 1216.7 990.5 1218.0 992.6 1219.4 994.4 1221.4 995.0 1222.2 996.6 1222.7 998.7 1223.0 1001.0 1223.7 1003.0 1222.5 1003.5 1220.7 1004.6 1218.8 1005.4 1216.9 1004.5 1214.8 1003.9 1212.7 1003.2 1210.7 1002.4 1208.2 1002.3 1206.0 1002.7 1204.0 1004.3 1201.8 1004.7 1199.4 1004.2M1271.7 1002.8 1273.9 1002.1 1276.2 1001.0 1278.5 1001.2 1281.0 1002.3 1283.3 1002.1 1285.5 1000.6 1287.3 999.6 1289.7 1000.3 1292.0 1000.7 1294.1 1000.2 1296.2 999.6 1298.2 998.9 1300.1 997.7 1302.2 997.0 1304.0 995.9 1305.9 995.2 1308.1 995.5 1310.3 995.6 1312.1 994.7 1313.9 993.5 1315.9 993.1 1318.0 993.0 1320.0 992.5 1321.9 991.4 1323.8 990.8 1326.1 991.6 1328.3 992.1 1330.2 991.1 1332.1 989.9 1334.0 989.3 1336.0 988.4 1338.0 987.8 1339.9 986.8 1341.9 986.2 1344.1 986.7 1346.3 986.9 1348.4 986.5 1350.4 986.2 1352.5 985.7 1354.4 985.2 1356.4 984.4 1358.0 982.7 1359.9 981.7 1362.0 981.6 1364.0 981.4 1366.0 980.8 1368.0 980.2 1370.0 980.0 1372.2 980.3 1374.2 979.8 1375.9 978.2 1377.9 977.7 1380.0 977.8M1282.8 1012.5 1284.5 1011.1 1286.4 1010.2 1288.4 1009.6 1290.4 1009.1 1292.4 1008.7 1294.7 1009.1 1296.8 1008.8 1298.9 1008.2 1301.0 1007.7 1303.2 1007.1 1305.3 1006.5 1307.5 1006.0 1309.6 1005.5 1311.8 1005.0 1313.9 1004.4 1316.1 1003.9 1318.2 1003.8 1320.3 1003.5 1322.4 1003.1 1324.5 1002.7 1326.7 1002.4 1328.8 1002.4 1330.9 1002.0 1332.9 1001.2 1335.0 1000.6 1337.1 1000.3 1339.2 999.9 1341.3 999.6 1343.5 999.1 1345.5 998.4 1347.5 997.6 1349.5 996.9 1351.4 996.1 1353.4 995.3 1355.1 993.7 1356.9 992.3 1359.1 992.4 1361.4 992.7 1363.5 992.3 1365.7 991.8 1367.8 991.1 1369.6 989.7 1371.6 988.7 1373.9 988.7 1376.2 988.5 1378.0 987.0 1380.0 986.1M1287.4 1021.2 1287.6 1020.2 1288.3 1019.0 1289.8 1018.4 1291.6 1018.0 1293.6 1017.7 1295.7 1017.5 1298.0 1017.4 1300.2 1017.3 1302.4 1017.4 1304.5 1017.3 1306.4 1017.3 1308.0 1018.0 1307.4 1019.7 1306.2 1020.2 1304.5 1019.9 1302.9 1020.0 1301.3 1020.9 1299.4 1021.5 1297.2 1021.4 1295.1 1021.0 1293.0 1021.0 1290.9 1021.1 1288.9 1020.7 1287.4 1021.2M1341.1 1008.3 1342.8 1007.2 1344.5 1006.1 1346.4 1005.5 1348.4 1005.0 1350.2 1004.1 1351.8 1002.7 1353.6 1001.7 1355.5 1001.2 1357.5 1000.7 1359.8 1001.0 1362.0 1001.6 1364.0 1001.3 1366.1 1001.0 1368.1 1000.5 1369.9 999.1 1371.8 998.3 1374.0 998.6 1376.1 998.7 1378.1 998.1 1380.0 997.2M1335.6 1018.1 1337.5 1017.0 1339.2 1015.5 1341.4 1015.2 1343.9 1015.7 1345.9 1015.0 1347.6 1013.4 1349.5 1012.3 1351.7 1012.0 1353.9 1011.6 1355.8 1010.5 1357.7 1009.4 1359.7 1008.8 1361.8 1008.5 1363.9 1008.1 1366.2 1008.2 1368.2 1007.7 1369.9 1005.9 1371.6 1004.4 1373.8 1004.2 1376.0 1004.1 1378.0 1003.5 1380.0 1002.8M1366.1 1013.9 1368.2 1013.1 1370.6 1012.9 1372.5 1011.8 1374.3 1010.5 1376.3 1009.5 1378.3 1008.6 1380.0 1006.9M1288.3 891.7 1289.0 889.5 1290.5 887.5 1290.5 885.1 1289.5 882.5 1289.9 880.2 1291.8 878.2 1293.4 876.5 1295.3 875.0 1297.2 873.5 1298.8 871.8 1300.5 870.3 1301.6 869.0 1302.4 866.7 1304.0 865.4 1305.9 864.7 1307.7 863.8 1308.9 862.1 1310.1 860.4 1311.0 858.6 1312.7 858.0 1314.7 857.3 1316.8 856.6 1318.7 855.8 1320.7 855.0 1322.7 854.2 1324.4 852.7 1326.4 851.6 1328.4 851.1 1330.5 850.6 1332.6 849.9 1334.6 849.0 1336.7 848.6 1339.0 849.2 1341.2 849.1 1342.8 847.5 1344.5 846.0 1346.3 845.2 1347.0 843.3 1348.4 841.1 1350.4 839.3 1351.5 837.8 1352.1 835.7 1352.9 833.9 1353.9 832.1 1354.2 829.5 1354.6 827.1 1355.1 824.7 1355.4 822.3 1353.3 821.0 1351.4 820.1 1349.7 819.0 1347.3 820.4 1345.8 822.3 1344.2 824.1 1341.5 822.9 1339.5 821.8 1337.6 820.4 1335.3 819.9 1332.5 819.2 1335.2 819.2 1336.6 821.2 1337.6 823.4 1338.6 825.6 1340.2 827.4 1342.0 828.0 1343.7 829.0 1345.5 830.0 1347.2 831.1 1348.8 831.8 1350.8 831.9M1346.7 819.4 1348.2 817.8 1350.3 816.8 1351.7 814.9 1352.5 812.6 1353.9 810.9 1355.4 809.2 1357.0 807.6 1359.0 806.6 1360.8 805.7 1362.5 804.6 1364.3 803.7 1366.1 802.7 1368.6 802.3 1370.9 801.3 1373.1 800.0 1374.3 798.2 1376.1 796.9 1377.7 795.4 1378.6 793.3 1380.0 791.7M1355.0 823.6 1356.6 822.2 1357.4 819.9 1359.3 818.9 1361.8 818.6 1363.4 817.2 1364.3 815.0 1365.6 813.4 1367.3 815.9 1368.1 818.2 1369.5 820.0 1370.6 821.9 1371.7 823.9 1372.9 825.9 1374.1 827.9 1376.5 829.4 1378.5 831.2 1380.0 833.3M1357.8 833.3 1358.9 835.6 1359.3 838.1 1360.2 840.4 1363.3 841.1 1366.1 841.7M1288.3 891.7 1290.0 892.9 1291.5 894.4 1292.1 896.4 1291.9 898.9 1292.9 900.6 1295.6 901.5 1297.6 902.5 1299.0 904.3 1300.6 905.9 1299.8 908.3 1299.2 911.1 1300.5 913.2 1302.1 915.0 1303.3 917.0 1304.6 918.9 1306.0 918.7 1308.1 919.1 1310.2 919.5 1312.0 920.9 1313.8 922.7 1316.0 922.7 1317.9 923.9 1318.9 926.0 1318.6 928.8 1319.2 931.1 1321.4 932.6 1323.4 934.0 1324.4 936.1 1326.0 937.6 1328.1 938.2 1330.4 938.2 1332.2 939.1 1333.5 941.1 1335.2 942.3 1337.8 941.0 1339.8 939.9 1342.1 939.5 1344.4 939.1 1346.6 938.6 1348.9 938.1 1351.1 937.2 1353.1 935.6 1355.2 934.5 1357.5 933.9 1359.3 933.2 1361.4 932.8 1363.7 932.6 1365.4 931.4 1366.8 929.7 1368.6 928.7 1370.6 927.9 1372.5 927.0 1374.6 926.7 1376.6 926.1 1378.2 924.6 1380.0 923.6M1330.0 909.7 1331.6 908.2 1333.2 906.7 1335.1 905.4 1337.1 904.4 1338.6 902.7 1339.8 900.9 1341.1 899.1 1342.9 897.9 1344.7 896.5 1346.0 895.6 1347.9 894.0 1350.0 894.0 1352.3 894.7 1354.3 894.0 1356.3 893.3 1358.2 892.5 1359.6 890.7 1361.1 889.2 1362.9 888.0 1364.1 886.3 1365.9 884.8 1368.1 883.7 1369.8 882.0 1371.1 880.0 1370.0 878.8 1369.8 876.6 1369.5 874.3 1369.1 872.2 1370.5 870.9 1371.2 869.0 1371.4 866.7 1372.4 864.9 1373.5 863.3 1377.1 862.5 1380.0 862.5M1331.4 911.1 1333.8 911.7 1336.4 912.0 1338.7 912.9 1340.4 912.4 1342.6 912.2 1344.9 912.5 1347.2 912.5 1349.4 912.5M1355.0 945.8 1357.0 947.5 1358.4 949.6 1359.9 949.0 1362.3 949.4 1364.6 948.9 1366.7 948.1 1368.9 947.4 1371.4 947.0 1373.7 946.5 1376.0 945.8 1378.1 944.7 1380.0 943.1M1380.0 192.2 1381.6 193.7 1383.7 194.3 1385.6 195.1 1387.7 195.6 1389.6 196.5 1391.5 197.3 1393.4 198.3 1394.7 200.3 1396.2 202.0 1398.4 202.3 1400.7 202.4 1402.6 203.2 1404.6 204.0 1406.4 205.0 1408.1 206.3 1409.9 207.2 1411.3 208.9 1412.9 210.3 1414.9 210.6 1417.1 210.7 1418.9 211.6 1420.5 212.8 1422.4 213.5 1424.7 213.1 1426.7 213.5 1428.4 214.8 1430.1 216.0 1428.0 215.3 1425.9 214.5 1424.0 213.5 1422.0 212.6 1420.1 211.5 1418.6 209.7 1416.8 208.6 1414.7 207.8M1381.4 199.4 1383.8 199.2 1386.3 198.9 1388.7 198.8 1391.2 198.7 1393.5 199.8 1394.9 201.7 1396.7 203.0 1398.7 203.7 1400.6 204.4 1402.8 204.7 1405.0 204.9 1406.8 206.0 1404.0 207.2 1401.5 206.9 1399.1 206.5 1396.7 206.3 1394.8 205.8 1392.7 205.3 1390.6 204.8 1388.5 204.4 1386.5 203.5 1384.7 202.3 1382.8 201.4 1381.4 199.4M1384.4 218.9 1387.2 218.3 1390.0 217.9 1391.4 218.6 1393.6 219.2 1395.7 220.1 1397.7 221.2 1399.7 222.2 1402.1 222.4 1404.4 222.9 1406.1 224.4 1407.7 226.2 1409.9 226.7 1412.4 226.6 1414.5 227.4 1416.5 228.5 1418.5 230.5 1419.9 232.8 1421.5 234.9 1419.4 233.9 1417.1 233.2 1414.8 233.5 1412.3 234.7 1410.0 234.7 1407.7 234.2 1405.3 233.0 1403.1 232.2 1400.9 231.4 1399.1 229.9 1397.4 228.4 1395.3 227.5 1393.1 227.0 1391.1 226.1 1389.1 225.0 1387.2 223.9 1385.6 222.2 1385.5 219.9 1384.4 218.9M1432.8 221.7 1434.6 222.7 1436.3 224.0 1438.3 224.6 1440.7 224.5 1442.5 225.6 1443.6 228.0 1445.2 229.5 1447.6 229.5 1449.8 229.8 1451.5 231.0 1453.2 232.3 1455.0 233.3 1456.8 234.5 1458.4 235.8 1459.8 237.5 1461.4 238.9 1463.6 239.4 1465.6 240.1 1467.1 241.8 1468.4 243.5 1470.3 244.5 1472.4 245.1 1474.3 246.0 1476.9 245.8 1479.2 246.0 1481.3 247.4 1479.9 245.3 1477.6 244.8 1475.2 244.6 1473.5 243.0 1472.2 240.7 1470.4 239.6 1468.1 239.6 1466.0 239.0 1464.0 238.4 1462.1 237.7 1460.6 236.0 1459.3 234.1 1457.1 233.8 1455.0 233.3M1434.2 222.2 1435.9 223.5 1438.1 224.0 1439.6 225.6 1440.7 227.4 1442.3 228.9 1444.1 230.0 1445.7 231.3 1446.6 233.4 1444.9 234.8 1444.8 237.1 1445.1 239.5 1445.8 237.6 1448.1 237.5M1435.6 222.8 1437.2 224.0 1438.8 225.4 1440.7 226.1 1443.0 226.3 1444.8 227.3 1446.5 228.5 1448.2 229.6 1450.1 230.5 1451.9 231.5 1453.1 233.4 1454.2 235.6 1456.2 236.2 1458.7 236.0 1460.6 236.9 1462.4 237.9 1464.1 239.0 1465.6 240.6 1467.1 242.0 1468.8 243.2 1470.5 244.3 1472.1 245.5 1473.8 246.7 1475.8 247.2M1474.4 254.2 1476.4 254.7 1478.1 256.0 1479.9 256.8 1481.9 257.4 1483.8 258.2 1485.6 259.0 1487.5 259.8 1489.0 261.3 1490.7 262.7 1492.6 263.3 1494.6 263.8 1496.4 264.7 1498.1 265.9 1499.9 266.8 1501.7 267.8 1503.0 268.9 1505.3 269.4 1507.4 270.0 1508.5 271.9 1509.4 274.0 1511.2 275.1 1513.4 275.6 1515.2 276.7 1517.1 277.5 1518.8 278.6 1519.6 281.0 1520.5 283.0 1522.7 283.6 1525.1 283.9 1526.8 285.2 1528.4 286.5 1530.0 287.9 1531.2 289.7 1532.6 291.2 1534.2 292.6 1535.8 294.0 1536.8 296.0 1537.7 298.2 1539.2 299.5 1540.9 300.8 1542.6 302.1 1544.7 302.8 1546.5 304.0 1547.9 305.5 1549.4 306.9M1482.8 254.2 1484.6 255.3 1486.5 256.1 1488.4 256.7 1490.6 257.0 1492.5 257.9 1494.2 259.0 1496.0 260.0 1497.6 261.5 1499.2 262.9 1501.1 263.7 1503.0 264.6 1504.8 265.6 1506.0 267.2 1507.4 268.7 1508.8 270.2 1510.2 271.7 1511.6 273.1 1513.1 274.6 1515.2 275.3 1517.5 275.8 1519.1 277.1 1520.7 278.3 1522.1 279.9 1522.6 282.3 1523.7 284.1 1525.6 285.3 1527.4 286.6 1529.3 287.8 1531.2 288.9 1532.5 290.7 1533.4 292.9 1535.0 294.4 1537.1 295.4 1538.8 296.7 1540.3 298.2 1541.8 299.7 1543.2 301.3 1544.6 302.9 1546.0 304.5 1547.3 306.2 1548.7 307.8 1550.0 309.5 1551.5 311.0 1553.6 311.8 1555.6 312.8 1556.6 314.9 1557.3 317.1 1558.4 318.7 1559.7 320.2 1560.9 321.8 1562.2 323.3 1563.4 325.0 1564.2 326.8 1565.2 328.6 1566.1 330.3 1567.1 332.1 1568.7 333.5 1570.9 334.4 1572.1 336.0 1572.6 338.1 1573.4 340.0 1574.2 341.8 1574.0 339.2 1573.1 336.8 1572.2 334.5 1570.7 332.7 1569.2 331.2 1567.7 329.6 1565.7 328.5 1564.1 327.1 1563.6 324.6 1562.9 322.4 1561.4 320.9 1559.8 319.4 1558.0 318.1 1556.4 316.7M1507.8 284.7 1509.7 285.6 1511.4 286.8 1512.8 288.4 1514.0 290.3 1515.6 291.6 1517.4 292.7 1519.1 293.8 1521.4 294.1 1523.6 294.7 1525.0 296.3 1526.2 298.2 1528.1 299.2 1530.2 299.8 1531.6 301.4 1532.6 303.4 1533.8 305.2 1535.1 306.9 1536.4 308.6 1538.3 309.7 1540.5 310.7 1541.9 312.3 1543.1 314.1 1544.5 315.7 1545.9 317.3 1547.3 318.9 1549.1 321.2 1550.8 323.6M1541.1 304.2 1543.1 305.4 1544.9 306.8 1546.9 308.0 1549.0 309.2 1550.6 310.8 1551.5 313.0 1552.8 314.9 1554.0 316.9 1555.3 318.7 1557.2 320.0 1559.0 321.3 1560.5 322.8 1562.2 324.2 1563.6 325.9 1564.5 328.0 1565.7 329.8 1567.4 331.2 1569.0 332.7 1570.6 334.1 1572.3 335.5 1573.2 337.7 1573.6 339.8 1574.4 341.7M1463.1 256.0 1465.9 255.6 1468.8 255.2 1470.7 257.0 1471.9 259.2 1473.7 260.7 1473.1 261.9 1472.8 264.2 1472.2 266.5 1474.5 269.4 1476.7 271.3 1475.1 270.4 1473.1 270.4 1471.0 270.5 1468.9 270.4 1468.3 268.8 1467.3 267.1 1466.6 265.1 1465.8 263.2 1464.7 261.5 1463.0 259.4 1463.1 256.0M1474.4 254.2 1475.8 255.9 1476.6 258.2 1478.0 259.8 1479.7 261.3 1481.5 262.5 1482.9 264.0 1484.5 265.3 1486.1 266.4 1487.8 267.5 1489.7 269.0 1491.8 270.6 1493.9 272.2 1495.0 274.2 1495.3 276.4M1439.7 275.0 1442.0 274.9 1444.3 274.0 1446.6 273.7 1449.0 273.8 1451.1 274.2 1453.1 275.0 1455.0 276.4M1439.7 275.0 1441.9 275.8 1443.7 277.2 1445.4 278.6 1447.1 280.0 1448.0 282.3 1448.1 284.6 1448.6 286.6 1449.0 288.7 1449.6 290.8 1452.4 291.5 1455.0 291.3 1456.7 292.3 1458.3 293.5 1459.9 293.9 1461.9 294.4M1464.5 281.5 1466.7 280.8 1468.9 280.0 1471.0 281.6 1473.3 283.0 1474.2 285.3 1474.7 287.4 1475.4 289.5 1476.0 291.6 1476.9 293.4 1478.2 295.0 1479.5 296.5 1480.7 298.2 1481.6 300.7 1482.1 303.0 1482.6 305.3 1479.3 306.7 1477.2 306.6 1475.0 305.2 1473.3 304.2 1471.6 303.2 1470.1 301.8 1469.0 299.9 1468.2 297.8 1467.3 295.6 1466.2 293.5 1464.6 291.7 1464.1 289.2 1464.7 286.8 1465.5 284.4 1464.5 281.5M1475.8 276.4 1478.6 275.5 1481.2 274.2 1483.9 275.0 1486.1 276.6 1488.6 276.8 1491.1 276.4M1475.8 276.4 1476.6 278.4 1477.8 280.2 1478.4 282.2 1478.7 284.4 1479.6 286.3 1481.1 288.1 1482.1 290.1 1481.9 292.4 1482.0 294.7 1483.0 296.7 1483.9 298.5 1485.2 300.2 1488.6 299.8 1491.3 300.4 1492.4 303.1 1493.3 305.1 1495.0 306.5 1496.6 308.1 1497.3 310.2 1497.8 312.4 1498.9 314.2 1500.6 315.9 1502.2 317.3 1503.9 318.7 1505.6 320.0 1507.8 320.8 1510.2 321.2 1512.4 322.1 1514.4 323.3 1516.1 325.0M1480.0 305.6 1480.4 307.9 1480.3 310.1 1479.7 312.3 1478.8 314.4 1478.5 316.7 1479.7 319.0 1480.3 321.4 1479.8 323.9 1480.0 326.4M1460.6 315.3 1463.3 313.8 1465.1 315.8 1466.9 317.8 1468.5 319.8 1469.5 321.5 1471.2 322.9 1471.7 325.0M1460.6 315.3 1459.5 317.3 1458.0 319.0 1456.9 320.9 1455.7 322.8 1454.6 324.7 1452.6 325.1 1450.3 325.6 1447.9 325.6 1446.6 328.7 1447.0 331.2 1447.8 333.8 1447.4 336.2 1448.2 337.6 1449.1 339.4 1449.6 341.4 1450.5 343.3 1452.1 344.7 1453.5 346.2 1454.6 347.9 1455.8 349.5 1457.1 351.1 1458.4 352.8 1459.6 354.6 1460.3 356.9 1461.4 358.8 1462.7 360.5 1464.0 362.3 1465.5 363.8 1467.0 365.4 1468.3 367.2 1469.4 369.0 1470.8 370.5 1472.4 371.9 1473.9 373.3 1475.8 374.3 1477.6 375.5 1479.0 377.0 1480.4 378.5 1481.5 380.3 1482.8 381.9M1471.7 330.6 1470.2 332.2 1468.5 333.5 1466.5 334.2 1465.9 335.4 1465.5 337.5 1465.8 339.7 1465.6 341.8 1465.7 343.6 1466.2 345.8 1467.4 347.5 1468.7 349.2 1470.2 350.8 1472.0 352.1 1473.4 353.7 1475.0 355.2 1476.2 356.9 1477.4 358.5 1478.5 360.2 1479.1 362.2 1479.7 364.2 1480.7 366.0 1481.7 367.7 1482.8 369.4 1484.8 369.6 1486.8 369.9 1488.7 370.8 1490.6 371.6 1492.6 371.8 1494.7 371.9 1496.6 372.5 1498.8 372.9 1500.8 372.8 1502.9 371.6 1505.0 371.1 1507.1 371.1 1509.2 371.0 1511.2 371.4 1513.3 371.9 1511.3 371.0 1509.6 369.5 1507.7 368.2 1505.6 367.3 1503.7 366.3 1502.2 364.6 1500.6 363.0 1498.5 362.3 1496.3 361.7 1494.6 360.3 1493.1 358.7 1491.6 357.3 1490.2 355.7 1488.7 354.2 1487.4 352.5 1485.9 350.9 1484.7 349.1 1483.4 347.2 1481.8 345.5 1479.8 344.1 1478.4 342.3 1477.2 340.3M1524.4 329.2 1526.6 328.7 1528.8 327.6 1531.0 327.5 1533.3 327.8 1535.5 327.7 1535.1 325.6 1534.5 323.5 1536.2 323.4 1538.3 323.0 1540.1 325.6 1541.4 327.8 1541.7 330.3 1541.3 332.8 1542.1 334.7 1543.6 336.2 1545.3 337.5M1518.9 341.7 1519.8 343.5 1521.2 345.1 1522.3 346.9 1523.9 348.3 1525.2 350.1 1525.7 352.6 1526.7 354.6 1528.9 356.2 1531.0 357.6 1533.5 357.0 1535.5 356.1 1537.6 355.5 1539.6 354.5 1542.0 356.9 1542.9 359.1 1544.2 361.2 1545.9 362.9 1547.6 364.6 1547.9 363.1 1550.5 361.8 1549.0 358.7 1546.5 357.4 1545.3 355.4 1544.6 353.1 1544.3 350.6 1544.5 348.1 1544.6 345.7 1545.8 347.2 1548.3 347.8 1550.3 349.2 1552.3 350.5 1554.3 351.9 1555.6 349.2 1553.8 349.6 1552.1 348.1 1550.3 346.6 1548.7 345.5 1547.0 344.1 1545.1 343.1 1543.3 342.0 1541.1 341.7M1566.1 352.8 1566.6 354.9 1567.7 356.9 1568.4 358.9 1569.3 361.0 1570.1 363.0 1571.1 365.0 1569.6 363.0 1570.1 361.0 1570.6 358.9 1571.8 357.0 1574.2 354.7 1571.2 352.4 1568.9 351.4M1571.7 354.2 1572.2 356.4 1573.1 358.4 1574.5 360.0 1576.4 361.3 1577.6 363.1 1578.0 365.4 1579.0 367.4 1581.5 368.2 1583.6 368.8 1585.6 369.4 1586.4 371.5 1586.6 373.7 1586.6 375.9 1586.8 378.1 1586.7 380.3 1586.8 382.5 1587.1 384.7 1587.4 386.8 1588.4 388.9 1587.2 391.4 1585.3 393.3 1583.4 395.1 1582.4 396.6 1580.3 397.8 1578.9 399.5 1578.2 401.0 1576.8 402.8 1574.6 403.0 1572.2 403.0 1570.5 404.1 1569.0 405.8 1566.0 405.3 1563.2 404.8 1560.9 404.3 1558.7 403.7 1556.5 403.2 1554.3 402.4 1552.2 401.5 1550.2 400.4 1548.4 398.9 1546.3 398.3 1543.8 399.0 1542.1 400.2 1539.7 399.8 1537.6 399.3 1535.6 400.0M1581.4 369.4 1582.8 370.9 1584.7 371.9 1586.3 373.2 1588.1 374.4 1589.6 375.8 1590.8 377.5 1592.2 379.0 1593.3 380.9 1594.5 382.6 1596.0 384.0 1597.8 385.5 1599.6 386.7 1601.7 387.7 1603.6 388.9 1606.0 389.5 1607.9 390.6 1608.9 393.0 1610.1 395.0 1611.1 396.5 1612.4 398.1 1613.2 399.9 1613.8 401.9 1614.8 403.7 1615.8 405.5 1616.8 407.2 1618.7 408.5 1619.9 410.3 1619.8 412.5 1619.5 414.8 1620.0 416.9 1620.6 419.0 1621.3 421.0 1622.8 422.9 1623.7 424.8 1623.3 427.1 1623.0 429.2 1622.7 431.3 1622.5 433.4 1622.1 435.4 1621.7 437.5M1599.4 383.3 1600.4 385.2 1600.3 387.5 1601.5 389.2 1603.2 390.7 1604.2 392.5 1604.8 394.5 1605.6 396.5 1606.1 398.5 1606.8 400.5 1607.9 402.3 1609.0 404.0 1610.2 405.7 1611.8 407.5 1612.4 409.6 1612.0 412.0 1612.2 414.3 1613.1 416.3 1613.9 418.3 1614.4 420.5 1614.8 422.7 1616.0 424.6 1617.5 426.1 1618.9 427.8M1605.0 384.7 1606.1 386.5 1606.5 388.6 1607.6 390.4 1608.9 392.0 1609.8 393.9 1610.0 396.1 1610.7 398.1 1612.6 399.4 1614.3 400.9 1614.8 403.2 1615.1 405.6 1616.1 407.6 1617.4 409.6 1618.2 411.7 1618.4 414.1 1618.7 416.1 1620.0 417.9 1621.1 419.7 1621.1 421.9 1621.0 424.1 1621.8 426.0 1623.1 427.8M1613.3 416.7 1611.8 418.2 1610.9 420.1 1610.0 421.9 1610.4 424.3 1610.9 426.3 1611.3 428.3 1611.8 430.2 1613.1 432.0 1614.2 433.9 1613.6 436.0 1610.9 436.7 1609.1 438.2 1607.6 440.1 1605.9 441.6 1604.1 443.1 1602.2 444.4M1503.6 395.8 1503.9 398.0 1504.3 400.1 1505.6 401.9 1507.5 403.4 1508.5 405.3 1508.3 407.9 1508.2 410.2 1508.4 412.5 1508.5 414.8 1508.7 417.1 1508.9 419.4 1509.4 421.2 1509.7 423.4 1510.4 425.5 1511.6 427.4 1512.2 429.6 1511.4 431.8 1510.9 434.0 1511.9 435.9 1513.2 437.7 1513.7 439.7 1514.3 441.7 1514.8 443.7 1515.2 445.7 1515.1 447.8 1514.7 450.0M1533.0 399.9 1533.2 402.3 1533.1 404.6 1533.5 406.9 1533.8 409.2 1534.5 411.4 1536.3 413.2 1537.4 415.1 1537.6 417.4 1538.0 419.6 1538.4 421.7 1538.7 424.0 1539.6 426.0 1541.1 427.8 1542.0 429.7 1542.2 431.8 1542.9 433.8 1546.1 433.2 1547.9 432.1 1549.5 430.7 1548.3 428.6 1547.9 426.4 1548.2 424.0 1547.6 421.9 1546.4 420.0 1545.4 418.0 1544.0 416.2 1542.8 414.2 1542.7 412.0 1542.7 409.7 1542.2 407.5 1541.9 405.3 1540.4 403.2 1538.5 401.7 1537.0 400.0 1534.9 400.0 1533.0 399.9M1539.7 401.4 1541.1 403.1 1543.1 404.5 1544.4 406.3 1545.6 408.3 1547.0 410.1 1548.4 411.9 1549.7 413.7 1549.7 416.1 1549.8 418.3 1550.9 420.2 1552.1 422.0 1553.3 423.9 1555.0 425.5 1555.7 427.5 1555.0 430.1 1555.1 432.5 1556.9 434.4 1558.5 436.4 1558.4 438.7 1555.6 438.7 1553.3 438.7 1551.1 439.0 1548.9 439.0 1546.7 438.5 1545.7 436.7 1544.0 435.1 1542.3 433.5 1540.6 431.8 1538.8 430.3 1537.7 428.3 1538.0 429.8 1537.4 431.8 1536.5 433.7 1535.9 435.7 1535.6 437.7 1535.3 439.7 1535.4 441.9 1535.7 444.0 1535.4 446.1 1535.0 448.1 1534.2 450.0M1575.6 407.6 1577.9 407.6 1580.3 407.9 1581.0 409.6 1582.8 411.6 1584.7 413.3 1584.9 414.8 1584.8 417.2 1584.4 419.5 1582.2 418.8 1580.5 417.6 1578.9 416.2 1578.6 414.3 1578.3 412.1 1577.4 410.1 1575.6 407.6M1380.0 411.1 1382.3 410.9 1384.5 409.8 1386.9 409.8 1389.3 410.2 1391.6 410.1 1393.9 409.8 1395.9 409.3 1397.9 409.2 1399.9 409.0 1401.8 408.0 1403.6 406.8 1405.7 406.9 1408.0 407.9 1409.6 408.6 1411.7 409.0 1413.8 409.3 1416.0 409.0 1418.2 408.8 1420.2 409.5 1422.2 410.2 1424.4 410.1 1426.6 408.8 1428.8 408.5 1431.2 409.5 1433.5 409.7 1435.6 408.9 1437.6 409.2 1439.6 410.1 1441.6 411.1 1443.6 411.9 1445.8 412.4 1448.1 412.5M1421.7 450.0 1422.2 448.0 1422.8 445.9 1424.2 444.4 1426.0 443.3 1427.3 441.7 1429.4 441.5 1431.4 440.8 1433.3 439.9 1435.1 439.0 1437.0 438.1 1438.9 437.2 1440.3 437.6 1442.7 437.4 1445.0 437.9 1447.0 439.2 1449.2 440.0 1449.8 441.0 1451.1 442.7 1452.5 444.3 1454.0 445.9 1454.5 448.0 1455.0 450.0M1482.8 450.0 1484.1 448.2 1485.1 446.1 1486.4 444.4 1487.8 442.7 1490.2 441.8 1492.4 441.4 1494.5 440.8 1496.6 440.2 1498.7 441.0 1500.8 441.7 1502.9 442.3 1505.1 442.7 1507.2 444.2 1508.7 445.8 1509.9 447.7 1510.6 450.0M1555.0 450.0 1556.4 447.2M1421.7 450.0 1422.4 452.2 1423.6 454.2 1423.9 456.5 1423.7 458.9 1424.1 461.2 1424.4 463.4 1425.0 465.5 1426.8 467.1 1428.4 468.7 1428.8 470.9 1429.0 473.1 1429.7 475.1 1431.9 476.0 1433.8 476.4 1435.8 476.9 1437.8 477.3 1439.8 477.6 1441.8 478.0 1443.8 478.4 1446.1 478.0 1448.1 477.4 1450.1 476.2 1452.1 475.9 1454.0 475.1 1455.7 473.8 1457.2 472.2 1458.7 470.7 1459.3 468.4 1459.7 465.9 1460.3 464.1 1462.2 461.9 1462.7 459.5 1462.1 457.0 1460.7 455.3 1459.2 453.9 1458.2 452.1 1457.8 450.0M1388.5 471.3 1390.4 470.0 1392.2 468.5 1394.2 470.8 1394.8 472.8 1395.7 474.6 1396.4 476.5 1398.1 478.1 1399.4 479.9 1400.8 481.6 1402.9 482.4 1405.3 483.0 1406.8 485.0 1408.0 487.2 1409.8 488.9 1412.2 490.0 1413.3 492.9 1414.1 495.6 1412.0 497.6 1410.3 498.7 1408.6 499.8 1406.8 500.7 1404.4 498.9 1402.8 497.4 1401.3 495.7 1399.6 494.2 1398.4 492.7 1397.1 491.0 1396.0 489.2 1394.9 487.5 1394.0 485.6 1393.2 483.7 1391.9 482.1 1390.3 480.5 1388.8 478.8 1387.6 477.0 1387.5 473.6 1388.5 471.3M1380.0 502.8 1381.4 504.3 1382.2 506.2 1383.2 507.9 1384.3 509.6 1385.0 511.9 1384.9 514.5 1385.5 516.8 1387.0 518.8 1388.4 520.8 1385.2 523.3 1382.6 523.5 1380.0 525.0M1380.0 533.3 1382.2 532.3 1384.1 530.8 1386.3 529.9 1388.6 529.1 1390.8 528.3 1393.6 528.5 1396.0 529.0 1398.1 530.4 1397.9 532.7 1398.0 534.7 1398.0 536.8 1398.7 538.7 1400.1 540.5 1400.7 542.4 1401.2 544.4 1401.2 546.7 1401.1 548.9 1401.0 551.1 1401.1 553.3 1401.2 555.6 1399.9 557.3 1398.3 558.7 1397.1 560.3 1396.5 562.3 1395.5 564.1 1395.2 566.2 1394.8 568.4 1393.3 570.2 1391.6 571.9 1392.6 574.5 1393.9 576.2 1395.0 578.1 1396.7 579.6 1397.9 581.4 1397.7 583.7 1397.9 585.9 1399.1 587.6 1400.3 589.2 1398.4 589.5 1396.3 591.0 1394.0 592.0 1391.9 592.1 1389.9 592.4 1387.8 592.5 1385.8 592.8 1384.0 593.9 1384.4 596.8 1384.3 599.1 1384.2 601.4M1413.3 570.8 1414.7 569.4M1417.5 569.4 1415.8 571.9 1413.6 573.9 1413.4 575.7 1412.5 577.8 1412.4 579.9 1412.5 581.9 1414.5 583.9 1416.4 585.1 1418.2 586.3 1419.8 587.8 1421.4 589.3 1423.8 588.4 1425.7 587.2 1427.8 586.6 1430.3 586.9 1432.8 586.3 1434.9 584.8 1437.0 583.5 1437.3 581.2 1437.4 579.1 1437.6 577.0 1437.5 574.9 1435.8 573.8 1434.1 571.8 1432.8 569.4M1399.4 601.4 1400.1 603.8 1400.0 606.2 1399.8 608.7 1399.6 611.1 1401.2 612.8 1402.9 614.6 1404.7 616.3 1406.6 617.9 1408.5 618.0 1410.5 619.0 1412.5 620.1 1414.6 620.2 1416.2 617.6 1417.8 615.9 1419.7 614.4 1421.5 612.9 1423.6 611.6 1424.6 609.2 1424.6 607.1 1424.4 604.9 1424.4 602.8M1477.2 450.0 1477.5 452.2 1477.5 454.5 1477.6 456.7 1477.6 459.0 1478.0 461.2 1478.6 463.4 1478.7 465.6 1478.3 467.8 1477.9 470.0 1477.6 472.3 1477.5 474.5 1477.6 476.9 1477.6 479.2 1477.4 481.5 1476.5 483.8 1476.1 486.1 1477.7 488.4 1479.0 490.3 1480.2 492.3 1481.5 494.2 1482.4 496.3 1483.2 498.4 1484.6 499.5 1485.8 501.3 1487.3 502.6 1489.5 502.9 1491.6 503.4 1493.0 501.8 1495.6 500.3 1495.9 498.0 1495.4 495.7 1495.8 493.7 1496.7 491.8 1497.4 489.8 1497.8 487.8 1498.3 485.8 1500.2 484.2 1502.3 483.2 1503.1 481.3 1503.2 479.0 1504.2 477.2 1507.2 478.0 1509.1 478.9 1511.0 479.6 1512.1 482.6 1512.1 484.9 1512.1 487.1 1512.0 489.4 1511.4 491.7 1510.7 493.5 1510.2 495.5 1509.6 497.4 1508.7 499.3 1507.9 501.3 1507.2 503.2 1506.6 505.2 1506.2 507.3 1506.3 509.4 1505.7 511.4 1504.5 513.2 1503.7 515.2 1504.4 517.5 1504.7 519.8 1504.6 521.6 1504.2 524.3 1505.3 526.4 1507.0 528.3 1508.0 530.5 1507.9 532.9 1507.5 535.2 1506.1 537.2 1504.9 539.3 1504.2 541.5 1502.6 542.7 1501.1 544.7 1499.9 547.0 1498.3 548.9 1497.0 550.7 1495.4 552.2 1493.0 552.7 1490.7 553.4 1489.1 554.9 1487.5 556.7 1486.0 558.5 1484.5 560.3 1482.8 561.9 1480.6 563.1 1478.7 563.8 1477.3 566.2 1475.7 568.2 1473.6 569.2 1475.1 569.9 1476.0 572.2 1476.8 574.6 1478.4 574.4 1480.7 574.7 1483.0 575.1 1482.0 578.3 1480.4 579.8 1479.6 581.7 1477.8 582.7 1475.8 584.0 1474.2 585.9 1472.1 587.1 1469.1 587.8 1466.3 588.4 1463.6 587.9 1461.3 587.5 1459.1 586.5 1459.3 588.1 1459.6 590.1 1459.9 592.2 1460.2 594.2 1460.1 596.2 1460.7 598.2 1461.9 600.0M1507.8 450.0 1508.6 452.1 1509.5 454.3 1510.1 456.5 1510.7 458.7 1511.0 461.0 1510.5 463.5 1510.7 465.7 1511.3 467.8 1512.0 469.9 1514.8 471.7 1517.2 472.7 1518.0 470.0 1517.3 467.7 1517.4 465.4 1517.7 463.2 1518.0 461.0 1517.4 459.1 1516.8 456.9 1516.5 454.6 1516.4 452.3 1516.1 450.0M1513.3 450.0 1513.7 452.3 1514.0 454.6 1514.9 456.7 1516.6 458.6 1517.2 460.8 1517.0 463.0 1517.2 465.1 1517.1 467.2 1517.2 469.3 1517.9 471.3 1518.7 473.2 1519.2 475.2 1519.9 477.1 1520.3 479.2M1542.5 450.0 1544.7 451.2 1546.8 452.5 1548.7 453.2 1550.7 454.5 1552.7 455.0 1554.8 455.2 1556.4 457.0 1558.4 459.1 1560.2 460.6 1562.2 461.7 1564.2 462.7 1566.2 463.8 1567.9 465.6 1569.1 467.6 1570.1 469.7 1571.1 471.8 1571.5 474.1 1572.0 476.3 1572.3 478.5 1572.6 480.7 1570.3 479.1 1567.9 479.3 1566.1 478.3 1564.9 476.1 1564.8 474.0 1564.1 472.0 1560.7 470.8 1557.9 470.4 1555.0 469.4 1552.3 470.4 1549.7 472.0 1550.8 472.8 1549.6 475.0 1549.3 477.2 1550.2 479.2 1550.8 481.2 1550.8 483.3 1550.9 485.5 1551.5 487.6 1552.2 489.6 1552.7 491.7 1552.9 493.9 1553.4 496.0 1554.4 497.9 1555.2 499.9 1555.3 502.2 1555.2 504.6 1555.9 506.7 1556.6 508.7 1557.3 510.8 1558.0 512.9 1558.7 515.0 1559.9 516.9 1560.9 518.9 1562.0 520.8 1563.1 522.8 1563.8 524.9 1564.4 527.0 1565.1 529.0 1566.0 531.1 1566.7 533.1 1566.2 535.5 1565.9 537.7 1566.5 539.8 1567.2 541.8 1567.6 543.9 1568.1 546.0 1570.7 547.3 1572.8 548.1 1574.8 548.8 1576.8 549.7 1575.0 550.4 1574.4 552.9 1573.9 555.4 1574.6 557.9 1575.8 560.1 1576.2 562.4 1578.1 561.5 1580.4 560.3 1580.8 562.5 1582.0 565.1 1579.0 565.1 1576.8 564.1 1574.4 563.9 1572.1 563.1 1570.3 561.7 1569.2 559.3 1567.6 557.6 1565.4 556.6 1563.3 555.6 1561.7 557.6 1560.1 559.7 1557.9 561.2 1555.2 561.7 1553.1 563.1 1551.8 562.6 1550.0 561.3 1549.6 558.7 1549.0 556.5 1547.4 554.9 1544.1 554.1 1541.2 553.9 1540.7 556.3 1539.7 558.0 1537.7 559.2 1536.3 560.7 1536.5 563.3 1536.7 565.6 1536.4 567.8 1535.8 570.0 1536.0 572.2 1537.8 574.3 1539.1 576.0 1540.5 577.7 1541.7 579.5 1542.2 581.8 1542.9 584.0 1544.6 585.3 1546.7 586.6 1547.3 588.6 1547.1 591.0 1548.0 592.8 1550.0 594.2 1551.4 596.4 1551.8 598.9 1552.2 601.4M1596.7 477.8 1598.6 477.0 1600.6 476.5 1602.4 475.3 1604.1 476.8 1605.4 478.9 1605.6 481.6 1606.3 484.0 1607.3 486.3 1607.5 488.3 1608.3 490.4 1609.3 492.5 1609.2 494.7 1608.7 496.9 1608.6 499.1 1608.4 501.3 1608.4 503.4 1609.4 505.5 1609.8 507.7 1609.1 509.7 1608.3 511.8 1608.3 513.9 1608.8 516.0 1608.7 518.1 1608.4 520.2 1608.1 522.2 1606.5 524.0 1605.1 525.8 1604.3 527.7 1603.5 529.7 1602.6 531.7 1601.7 533.6 1601.1 535.7 1601.4 538.0 1601.2 540.1 1600.4 542.1 1599.6 544.0 1598.8 545.9 1597.8 547.8 1597.3 549.8 1597.0 552.0 1596.7 554.1 1596.9 556.2 1596.8 558.3 1595.8 560.3 1595.0 562.3 1595.3 564.5 1595.3 566.7M1593.9 569.4 1592.2 571.0 1589.8 571.7 1588.2 573.4 1589.5 575.6 1589.8 577.6 1589.2 579.9 1589.3 582.0 1591.9 583.4 1594.3 584.8 1595.4 587.4 1597.9 586.7 1599.5 584.8 1600.7 582.5 1602.3 580.7 1604.2 581.4 1606.3 581.9 1608.5 581.3 1610.7 580.9 1610.8 579.1 1612.3 576.5 1610.0 574.2 1607.6 572.4 1605.8 571.6 1603.9 570.7 1602.2 569.4M1613.3 472.2 1615.9 469.2 1618.5 469.4 1620.1 470.7 1621.3 472.9 1621.8 474.8 1622.8 476.9 1623.9 478.9 1626.1 480.4 1628.8 481.7 1630.6 484.2 1632.1 484.9 1634.2 485.3 1636.3 485.7 1638.3 486.1 1639.9 488.3 1641.6 490.2 1643.4 492.1 1642.7 493.7 1642.6 496.1 1642.6 498.4 1641.7 500.6 1640.1 502.5 1641.4 505.1 1643.7 506.3 1645.3 507.9 1646.6 509.7 1647.8 511.5 1648.3 513.8 1647.8 516.3 1648.8 518.4 1650.5 520.4 1651.3 522.5 1651.7 524.8 1652.6 526.7 1653.2 529.0 1654.0 531.3 1655.2 533.2 1656.0 535.4 1656.7 537.6 1657.5 539.8 1657.9 542.1 1657.1 544.6 1657.2 546.7 1658.5 548.5 1659.5 550.3 1659.8 552.3 1660.6 554.2M1613.3 472.2 1613.6 474.5 1612.7 477.0 1613.1 479.3 1613.8 481.5 1614.1 483.8 1613.7 486.2 1614.1 488.5 1615.0 490.4 1615.8 492.3 1616.5 494.2 1617.3 496.1 1618.0 498.1 1618.8 500.0 1619.5 502.1 1619.8 504.3 1620.4 506.3 1621.8 508.1 1623.0 509.9 1624.2 511.7 1625.5 513.5 1625.6 515.7 1624.8 518.1 1625.2 520.2 1625.9 522.1 1626.6 524.1 1627.4 526.0 1628.1 527.9 1629.0 529.9 1629.9 531.8 1631.1 533.5 1632.8 534.9 1633.8 536.7 1634.4 538.8 1635.3 540.9 1635.8 543.3 1636.5 545.5 1637.4 547.7 1638.2 549.9 1639.3 552.0 1640.4 554.0 1641.7 556.0 1643.7 557.6 1645.0 559.7 1645.1 562.2 1645.5 564.6 1646.7 566.7M1624.4 458.3 1627.0 458.7 1629.3 459.6 1631.4 461.1M1625.8 458.3 1626.2 460.6 1626.2 463.0 1626.1 465.3 1625.7 467.6 1625.6 469.9 1625.2 472.2 1626.3 474.3 1627.7 475.8 1629.0 477.4 1630.5 478.8 1632.1 480.1 1633.4 481.9 1634.1 484.5 1635.7 486.2 1638.1 487.2 1639.7 488.9M1638.3 470.8 1638.9 472.9 1638.6 475.0 1638.5 477.1 1638.1 479.3 1638.4 481.4 1639.6 483.3 1641.3 484.8 1642.5 486.6 1643.8 488.4 1645.4 489.9 1647.1 491.3 1648.4 493.4 1649.8 495.3 1650.9 497.4 1651.7 499.6 1652.0 501.8 1652.6 503.8 1653.1 505.7 1653.3 507.8 1653.4 509.8 1653.6 511.8 1653.4 513.9 1653.7 516.0 1654.1 518.0 1654.5 520.0 1654.3 522.1 1654.3 524.2 1654.9 526.2 1655.7 528.1 1656.4 530.1 1657.3 532.0 1657.5 534.1 1657.8 536.1M1639.3 512.6 1639.2 511.7 1639.2 511.1 1639.4 510.6 1639.7 509.9 1640.5 509.9 1641.2 510.5 1641.9 511.1 1643.0 511.4 1644.0 512.1 1644.1 513.8 1643.7 515.5 1644.5 516.9 1646.1 518.6 1646.6 520.5 1645.9 522.6 1646.0 524.4 1647.8 525.5 1649.2 526.6 1649.6 527.9 1649.8 529.1 1649.4 530.2 1648.1 530.9 1647.5 531.5 1646.9 532.5 1645.0 531.4 1644.3 529.7 1643.6 528.1 1642.3 526.8 1640.9 525.5 1640.4 523.5 1640.9 521.2 1640.4 519.4 1639.6 517.7 1639.1 516.0 1638.9 514.2 1639.3 512.6M1627.2 522.2 1630.2 521.2 1630.5 522.9 1632.0 524.4 1634.1 525.4 1635.3 527.1 1636.0 529.7 1636.5 531.9 1636.5 534.3 1636.6 536.6 1636.5 539.0 1636.4 541.4 1637.5 543.3 1639.2 545.1 1639.7 547.2M1627.2 522.2 1626.1 524.0 1624.4 525.4 1623.6 527.4 1624.7 530.1 1625.2 532.3 1625.4 534.6 1625.9 536.9 1627.6 538.8 1629.5 539.8 1630.4 541.6 1631.3 543.4 1632.1 545.2 1632.8 547.2M1618.9 533.3 1621.5 536.3 1622.8 538.2 1623.0 540.5 1622.5 543.0 1623.0 545.2 1624.2 547.3 1622.7 548.9 1621.2 550.9 1619.6 552.8 1617.3 554.0 1615.7 552.7 1613.3 552.8M1620.3 563.9 1620.8 565.9 1620.1 568.2 1620.3 570.3 1620.4 572.4 1621.2 574.7 1623.2 576.5 1624.3 578.6 1623.9 581.1 1623.8 583.5 1625.7 586.2 1625.6 583.9 1625.8 581.8 1625.9 579.7 1626.3 577.6 1629.1 576.1 1631.4 575.0M1456.4 626.4 1458.9 626.8 1461.3 626.8 1463.6 626.1 1465.4 626.0 1467.7 626.5 1469.9 627.1 1472.1 627.6 1474.5 627.4 1476.9 628.4 1478.3 630.3 1479.6 632.4 1481.5 633.7 1483.6 634.8 1485.6 636.1M1456.4 626.4 1457.1 628.5 1457.8 630.7 1458.0 632.8 1458.1 635.0 1458.3 637.2 1458.6 639.4 1458.7 641.6 1458.6 643.8 1458.6 646.2 1459.0 648.5 1459.2 650.8 1460.2 652.9 1460.2 655.2 1459.2 657.3 1457.6 659.1 1456.4 661.1 1455.2 663.1 1454.1 665.2 1453.1 667.3 1452.1 669.4 1453.9 670.6 1455.7 671.5 1457.3 672.6 1458.9 673.9 1460.5 675.1 1462.8 675.5 1465.0 676.2 1466.8 677.4 1468.6 678.6 1470.3 680.0 1471.8 681.7 1473.7 681.3 1475.7 680.7 1477.8 680.2 1480.0 680.7 1482.2 680.0 1483.6 678.3 1485.0 676.4 1487.0 675.5 1489.3 675.2 1491.0 673.8 1492.5 672.2M1493.9 663.9 1496.1 664.3 1498.2 664.8 1500.2 665.8 1502.0 667.2 1504.4 666.9 1506.3 665.6 1508.4 664.9 1510.5 665.2 1512.9 664.7 1515.0 663.8 1517.2 663.0 1519.2 661.7 1518.5 659.0 1518.1 657.0 1517.8 654.9 1517.5 652.8M1531.4 647.2 1532.9 649.2 1534.2 651.2 1535.0 653.5 1535.8 655.7 1536.6 658.0 1537.2 659.6 1538.2 661.4 1539.6 662.9 1541.0 664.4 1541.5 666.4 1542.8 665.0 1544.1 663.1 1545.2 661.0 1545.0 659.0 1544.8 656.9 1544.8 654.9 1545.1 652.8 1544.1 650.9 1543.4 648.8 1542.8 646.6 1541.3 645.0 1539.1 643.8 1537.7 642.1 1538.5 639.4 1539.3 637.5 1540.5 635.8 1543.3 637.6 1545.2 639.4 1547.0 641.3 1548.4 642.7 1549.5 644.7 1551.1 645.9 1552.9 646.7 1554.7 647.7 1556.8 645.9 1558.3 644.3 1559.9 642.7 1561.4 641.0 1563.0 639.2 1564.5 637.3 1566.3 635.6 1568.1 633.9 1568.4 632.2 1569.9 630.1 1571.2 628.0 1570.0 625.6 1568.8 623.9 1567.6 622.2 1565.9 620.7 1565.2 618.8 1564.7 616.7M1548.1 675.0 1548.8 672.9 1549.4 670.7 1551.0 669.1 1553.1 667.8 1554.4 666.1 1555.5 664.2 1557.0 663.3 1558.5 661.9 1560.0 660.6 1561.5 659.1 1562.8 657.6 1565.3 657.4 1567.6 657.9 1569.6 657.7 1571.7 656.9 1572.9 658.6 1573.6 660.5 1574.4 662.4 1576.0 663.8 1578.5 664.4 1580.3 666.2 1582.6 666.5 1584.9 665.6 1586.7 663.2 1588.0 661.4 1590.2 660.6 1592.5 659.7M1599.4 633.3 1601.1 631.3 1603.5 630.0 1605.5 628.3 1607.4 626.7 1608.7 624.8 1609.2 622.2 1608.7 620.1 1608.6 618.1 1608.5 616.0 1609.0 613.9 1609.6 611.8 1609.3 609.7 1610.6 607.4 1612.4 605.5 1614.4 603.9 1617.0 606.1 1618.8 608.5 1618.0 610.3 1618.0 612.5 1618.0 614.6 1617.9 616.7 1619.3 618.0 1620.4 619.6 1621.6 621.3 1622.7 623.0 1623.3 621.9 1625.4 620.9 1627.6 620.0 1629.3 618.0 1630.1 616.1 1630.8 614.1 1631.4 612.0 1630.9 609.5 1632.8 611.6 1632.5 613.8 1632.4 616.0 1632.8 618.1 1631.7 619.8 1630.8 621.6 1630.2 623.6 1629.0 625.2 1627.3 626.5 1625.9 628.0 1625.1 629.8 1624.1 631.6 1623.1 633.3M1599.4 633.3 1600.8 635.7 1602.5 637.7 1604.5 639.3 1605.9 640.8 1607.0 642.5 1608.5 644.1 1609.4 646.2 1609.6 648.5 1609.9 650.7 1611.0 652.6 1611.6 654.9 1611.2 656.9 1610.2 659.0 1610.0 661.1 1610.4 663.3 1610.7 665.4 1611.2 667.4 1611.7 669.5 1614.0 669.0 1616.1 668.5 1617.5 666.9 1618.4 664.4 1620.1 663.0 1622.7 662.6 1624.8 661.6 1625.5 659.1 1626.0 657.1 1625.5 654.9 1624.8 652.6 1623.2 652.7 1621.0 651.5 1618.7 650.5 1618.3 652.4 1617.1 654.2 1614.9 655.4 1613.3 656.9M1628.6 643.1 1631.0 643.5 1633.5 643.4 1635.9 644.0 1638.3 644.9 1639.9 646.2 1642.2 647.0 1644.2 648.2 1645.3 646.5 1647.0 644.5 1647.3 641.9 1648.8 642.9 1651.1 644.0 1651.9 646.6 1651.8 648.7 1651.5 650.8 1651.2 652.9 1650.1 654.9 1649.2 656.9 1648.8 659.0 1648.4 661.0 1649.3 663.5 1650.4 665.4 1651.3 667.4 1652.8 669.2 1653.8 671.2 1653.4 673.7 1653.3 676.0 1654.2 678.1 1653.8 679.8 1653.7 682.2 1654.2 684.7 1653.7 686.9 1652.7 689.0 1652.0 690.9 1651.0 692.7 1650.1 694.6 1650.3 696.7 1650.7 699.0 1650.2 700.9 1649.6 702.9 1648.9 704.8 1647.8 706.6 1647.0 708.4 1645.2 709.8 1643.6 711.1 1642.3 712.7 1641.1 714.2 1640.3 716.2 1641.4 718.9 1641.4 721.1 1640.4 723.3 1640.0 725.6 1640.2 727.8 1639.5 729.3 1638.5 731.1 1637.4 732.9 1636.7 734.8 1636.2 736.9 1635.2 738.7 1634.0 740.9 1633.2 743.0 1633.1 745.4 1633.1 747.7 1632.8 750.0M1624.4 684.7 1626.6 685.1 1628.6 686.1 1628.8 688.4 1629.1 690.7 1629.4 693.0 1629.9 695.3 1630.2 697.6 1630.4 700.0 1630.0 702.1 1629.5 704.2 1628.9 706.2 1628.5 708.3 1628.0 710.4 1627.8 712.5 1628.1 714.7 1628.0 716.8 1627.5 718.8 1627.0 720.8 1626.4 722.7 1625.6 724.6 1625.2 726.6 1624.8 728.6 1624.5 730.6 1624.3 732.7 1624.0 734.8 1623.2 736.8 1622.6 738.8 1624.5 740.7 1626.5 742.1 1627.7 744.1 1628.1 742.6 1629.1 740.7 1629.6 738.7 1630.7 736.7 1632.5 735.3 1634.1 733.7 1635.2 731.8 1636.3 729.9 1637.5 728.1 1638.2 725.7 1638.7 723.5 1638.8 721.2 1639.2 718.9 1639.3 716.6 1639.4 714.5 1640.6 712.7 1642.0 710.9 1642.2 708.9 1641.9 706.8 1642.1 704.8 1642.3 702.7 1643.0 700.4 1643.7 698.2 1644.5 695.9 1645.4 693.7 1646.4 691.6 1646.6 689.6 1647.2 687.5 1647.3 685.4 1647.5 683.3 1647.5 681.2 1647.0 679.2 1646.6 677.1 1646.9 675.0 1644.9 673.1 1642.7 672.0 1642.4 674.5 1641.8 676.6 1640.7 678.6 1639.9 680.6 1639.7 682.8 1639.6 685.0 1639.3 687.3 1639.1 689.5 1638.8 691.7 1640.1 693.3 1641.3 695.2 1642.2 697.5 1641.1 699.8 1640.5 702.6 1638.8 703.8 1636.9 705.6M1401.1 671.6 1403.1 670.8 1405.1 669.9 1406.6 671.2 1408.4 672.6 1410.3 674.0 1412.6 674.4 1414.7 674.7 1416.7 675.1 1418.8 675.5 1420.9 677.1 1423.5 678.7 1421.9 681.5 1420.4 683.5 1418.6 685.2 1416.5 686.5 1413.4 687.2 1410.8 688.4 1407.8 686.6 1406.7 684.0 1405.9 681.1 1405.1 679.4 1403.5 677.4 1402.6 675.2 1402.0 672.9 1401.1 671.6M1505.0 683.3 1506.7 682.0 1508.5 681.1 1510.3 680.0 1510.3 678.1 1511.1 676.1 1513.0 674.4 1514.1 672.5 1515.5 672.0 1517.3 671.0 1519.1 669.8 1520.7 670.4 1522.6 671.2 1524.6 671.9 1526.2 674.1 1527.7 676.1 1525.7 677.9 1523.6 678.5 1521.7 679.2 1519.6 678.6 1517.6 677.9 1515.5 677.4 1513.5 676.7 1511.0 677.9 1509.3 679.0 1507.8 680.3 1506.4 681.9M1505.0 683.3 1506.6 684.6 1507.6 686.6 1509.6 687.3 1512.0 687.3 1513.8 688.1 1515.1 690.3 1516.0 692.2 1516.8 694.1 1517.6 696.0 1517.8 698.2 1517.9 700.5 1518.6 702.4 1519.5 704.3 1520.5 706.3 1522.2 707.9 1523.3 709.8 1523.3 712.0 1523.5 714.3 1525.0 716.3 1526.4 718.0 1528.2 719.4 1530.0 720.8M1463.0 701.4 1462.5 700.1 1462.1 698.7 1463.0 697.4 1464.8 696.8 1465.5 696.0 1465.7 694.7 1466.5 693.8 1467.7 693.1 1468.9 692.7 1470.3 692.7 1471.7 693.1 1473.1 693.1 1474.4 693.8 1475.4 695.0 1476.5 696.4 1477.0 698.0 1476.7 699.7 1476.3 701.4 1476.1 703.0 1475.7 704.6 1475.4 706.2 1475.1 708.0 1473.9 709.4 1472.1 710.2 1470.3 710.0 1469.2 709.2 1468.2 708.5 1467.1 708.6 1465.9 708.6 1465.3 707.8 1465.1 706.6 1464.7 705.8 1464.2 704.9 1463.9 703.9 1463.0 702.8 1463.0 701.4M1466.4 723.6 1466.2 722.6 1466.0 721.5 1466.5 720.5 1467.1 719.5 1468.1 718.9 1469.7 719.4 1470.7 719.5 1471.7 719.4 1472.6 719.5 1473.6 718.9 1475.0 718.2 1476.1 719.0 1476.7 720.6 1477.4 721.8 1477.9 722.8 1478.3 723.9 1478.9 724.9 1479.1 726.0 1479.1 727.2 1478.9 728.5 1477.8 729.4 1476.3 729.7 1474.8 730.1 1473.0 729.8 1471.8 729.4 1470.7 729.1 1469.7 728.8 1468.9 728.4 1468.1 728.1 1467.3 727.7 1466.3 727.5 1465.8 726.8 1465.6 726.0 1465.5 725.2 1465.5 724.4 1466.4 723.6M1492.5 705.6 1494.5 707.1 1497.2 707.5 1498.2 706.9 1500.7 707.2 1502.4 706.2 1503.5 704.0 1505.9 704.2 1507.7 705.8 1505.6 707.1 1504.8 709.6 1506.3 712.3 1506.9 715.2 1503.6 714.5 1500.9 713.7 1498.4 713.1 1496.1 712.3 1493.9 711.1M1557.8 702.8 1557.5 704.9 1556.4 706.8 1556.2 708.9 1556.4 711.1 1558.0 712.6 1559.1 714.7 1560.6 716.3 1563.2 716.5 1565.5 717.1 1566.8 719.4 1567.8 721.5 1569.2 723.3 1571.5 722.2 1574.3 721.6 1576.5 723.0 1578.6 723.6M1584.3 727.8 1584.5 726.1 1584.9 724.4 1585.9 723.1 1587.4 722.3 1588.2 721.1 1588.4 719.3 1589.4 718.1 1590.9 717.6 1592.4 717.4 1593.9 717.7 1595.3 718.5 1596.6 718.5 1597.3 719.9 1597.6 722.0 1596.7 724.3 1596.3 726.6 1597.4 729.1 1598.0 731.7 1596.8 733.9 1595.4 735.9 1594.4 737.9 1593.4 739.9 1592.0 741.4 1590.3 742.8 1588.0 742.5 1586.7 741.6 1585.6 740.5 1584.6 739.4 1583.9 738.1 1583.5 736.6 1583.5 735.1 1583.4 733.6 1583.4 732.1 1583.5 730.6 1583.8 729.2 1584.3 727.8M1491.1 750.0 1493.0 749.2 1495.2 748.9 1496.5 747.3 1497.4 745.0 1499.0 743.8 1501.3 743.7 1503.3 743.4 1505.3 742.8 1507.2 742.2 1509.1 741.5 1510.3 739.8 1511.9 738.3 1514.0 737.2 1515.3 735.5 1515.8 733.1 1519.4 735.6 1518.4 738.4 1517.4 740.6 1517.7 743.0 1518.3 745.4 1518.0 747.7 1517.5 750.0M1524.4 750.0 1524.4 747.9 1524.3 745.8 1525.4 743.9 1527.4 742.3 1528.0 740.3 1527.5 738.1 1527.5 736.0 1527.7 733.9 1527.9 731.9 1529.0 730.0 1530.3 728.3 1530.7 726.3 1531.0 724.2 1531.4 722.2M1535.6 750.0 1535.9 748.0 1535.4 745.9 1535.5 743.9 1535.7 741.9 1536.0 739.8 1537.1 737.9 1537.5 735.9 1536.7 733.8 1536.1 731.7 1536.3 729.7 1536.5 727.7 1536.4 725.6 1536.1 723.6 1538.2 725.5 1537.8 727.8 1537.9 730.0 1538.3 732.0 1538.8 734.1 1539.5 736.2 1540.1 738.4 1540.4 740.7 1540.7 743.0 1541.0 745.3 1541.3 747.6 1541.1 750.0M1543.9 750.0 1544.5 748.0 1544.2 745.9 1544.8 743.9 1545.7 742.0 1545.9 739.9 1545.0 737.7 1544.8 735.6 1545.5 733.6 1546.0 731.6 1547.2 729.7 1548.6 727.9 1548.5 725.8 1548.1 723.6M1430.0 783.3 1430.9 781.3 1431.5 779.0 1432.6 777.1 1433.7 775.1 1434.9 773.2 1437.3 772.3 1439.2 771.1 1440.9 769.8 1442.6 768.5 1443.9 766.7 1445.8 765.4 1447.9 764.9 1450.2 764.8 1452.3 764.1 1454.6 763.8 1456.9 764.1 1458.9 765.3 1461.0 766.4 1463.4 766.5 1465.7 767.8 1467.3 769.7 1468.6 771.8 1470.3 773.6 1471.5 775.3 1472.6 777.1 1473.2 779.1 1474.2 777.5 1474.8 775.5 1475.3 773.4 1476.6 771.8 1478.8 770.4 1480.6 768.9 1482.4 767.4 1484.1 765.8 1485.2 763.6 1486.6 761.7 1488.4 760.5 1490.2 759.3 1492.0 758.1 1494.1 757.2 1496.0 755.9 1497.7 754.3 1499.5 752.8 1496.7 750.0M1468.9 800.0 1470.4 798.7 1472.3 797.8 1474.2 797.0 1476.2 796.5 1478.0 796.1 1479.8 795.1 1481.7 794.4 1483.7 794.1 1485.8 793.7 1486.7 790.8 1487.1 788.3 1488.0 786.0 1489.3 784.1 1490.6 782.2 1492.5 780.7 1493.9 779.0 1494.8 776.9 1494.8 774.1 1494.6 771.8 1494.3 769.4 1495.6 767.8 1496.6 765.5 1498.2 763.8 1500.5 762.7 1502.4 761.3 1503.5 759.5 1504.8 757.8 1507.1 757.6 1509.5 757.6 1511.2 756.6 1513.3 754.6 1514.8 752.4 1516.1 750.0M1380.0 791.7 1381.9 793.4 1383.1 796.0 1385.1 797.7 1385.7 799.5 1386.2 801.7 1387.4 803.8 1387.9 806.0 1386.9 808.3 1384.9 809.9 1384.3 812.2 1383.9 814.6 1382.7 816.6 1382.5 819.1 1382.8 821.5 1383.6 823.7 1386.4 824.6 1388.7 824.8 1391.1 825.1 1393.5 825.5 1396.0 826.0 1398.4 825.6 1400.8 824.4 1403.0 825.4 1404.3 827.4 1405.9 828.7 1405.3 829.5 1404.9 831.7 1404.3 833.7 1402.3 835.4 1400.4 836.2 1398.3 836.6 1396.6 838.3 1395.1 840.5 1393.4 842.5 1391.4 844.0 1389.5 845.4 1387.3 846.3 1386.3 843.8 1385.1 842.1 1383.4 840.7 1386.3 838.8 1388.6 838.4 1390.9 838.0 1393.7 837.5 1396.5 836.9 1399.2 839.2 1401.3 841.2 1403.6 840.8 1406.6 841.2 1408.0 838.2 1408.4 835.9 1408.9 833.6 1409.5 835.3 1411.9 836.1M1380.0 862.5 1382.3 862.1 1384.3 860.8 1386.6 860.7 1389.1 861.2 1391.4 860.8 1393.5 859.9 1395.6 859.2 1397.6 858.3 1399.7 857.6 1401.3 855.1 1402.6 852.7 1404.4 850.8 1407.0 847.8 1409.8 846.9 1412.6 847.3 1415.2 846.9 1416.0 843.9 1416.2 841.7 1418.1 840.9 1419.9 840.0 1421.7 838.9M1518.9 750.0 1518.9 752.3 1519.4 754.6 1519.5 757.0 1519.1 759.3 1519.4 761.6 1520.2 763.9 1519.7 766.0 1519.4 768.2 1519.0 770.4 1517.5 772.2 1516.6 774.6 1517.3 776.8 1518.7 778.8 1519.1 781.1 1518.5 783.4 1517.5 785.2 1516.7 787.2 1515.9 789.3 1515.9 791.6 1515.2 793.8 1513.6 795.4 1511.6 796.6 1510.2 798.3 1508.9 800.1 1507.4 801.6 1505.9 803.2 1504.4 804.8 1502.7 806.2 1501.1 807.6 1499.1 808.5 1496.6 808.9 1494.9 810.3 1493.9 812.5 1493.5 814.7 1492.6 816.7 1494.8 816.2 1497.1 815.8 1499.4 815.3 1501.6 814.1 1503.5 812.5 1505.7 811.8 1508.4 812.1 1510.8 811.8 1512.7 811.2 1514.7 810.6 1516.7 810.1 1518.8 809.7 1520.7 808.8 1522.4 807.3 1524.3 806.5 1526.9 804.9 1526.8 807.7 1525.5 809.2 1524.2 810.8 1522.8 812.2 1521.2 813.5 1520.1 815.2 1519.1 817.0 1518.0 818.7 1517.3 820.6 1516.3 822.4 1515.2 824.1 1514.2 825.9 1513.7 827.9 1513.2 830.0 1511.9 831.7 1509.7 832.9 1509.0 835.3 1509.2 837.7 1509.0 840.0 1508.4 842.2 1507.8 844.4 1507.4 846.8 1507.0 849.1 1507.4 851.4 1508.4 853.7 1508.5 856.0 1507.5 858.3 1507.4 860.7 1508.2 863.0 1508.9 865.2 1508.6 867.6 1508.1 870.0 1508.8 872.3 1508.9 874.7 1508.0 876.9 1506.7 878.8 1505.5 880.8 1503.2 881.6 1501.2 882.2 1499.5 883.4 1497.9 884.6 1496.1 885.6 1494.4 886.8 1492.6 887.7 1490.2 887.9 1487.8 888.2 1485.6 889.3 1484.0 890.7 1481.9 891.6 1479.8 892.4 1478.0 893.8 1476.5 895.5 1474.6 896.4 1472.1 896.2 1470.1 896.7 1468.7 898.5 1467.2 900.0 1465.1 900.4 1462.9 900.6 1461.1 902.2 1459.7 904.0 1458.0 905.4 1456.2 906.7 1454.5 904.7 1452.5 902.5 1450.1 902.8 1448.1 903.7 1446.1 904.8 1444.0 904.8 1441.5 904.5 1439.2 905.3 1437.3 906.9 1435.2 908.0 1432.7 908.0 1430.2 908.2 1428.0 909.1 1425.8 910.1 1423.6 911.0 1421.5 912.0 1419.5 912.6 1417.5 912.9 1415.5 913.5 1413.7 914.6 1411.8 915.6 1409.7 916.0 1407.6 916.2 1405.6 915.7 1403.5 914.9 1401.2 914.8 1398.8 915.9 1396.6 916.1 1394.9 916.9 1392.9 917.7 1390.7 918.1 1388.4 918.3 1386.3 918.6 1384.2 918.8 1382.1 919.2 1380.0 919.4M1514.4 798.5 1514.6 796.7 1514.8 794.9 1515.6 793.1 1516.4 791.5 1517.5 790.0 1519.0 788.9 1520.2 787.7 1520.7 786.1 1521.3 784.7 1522.5 784.1 1523.6 783.7 1524.4 783.3 1526.0 783.8 1527.3 784.4 1528.5 785.0 1529.3 785.8 1529.8 786.9 1530.0 788.0 1529.7 789.2 1529.0 790.3 1529.2 791.6 1529.9 793.5 1529.1 795.0 1526.8 795.5 1525.2 796.0 1524.5 797.9 1523.6 799.5 1522.4 800.5 1521.2 801.5 1519.7 801.6 1518.2 800.7 1517.3 800.6 1516.5 800.8 1515.9 800.5 1515.3 799.7 1514.4 798.5M1538.3 750.0 1539.2 752.0 1539.4 754.2 1540.4 756.1 1542.1 757.7 1542.9 759.7 1543.1 761.9 1543.7 764.0 1544.3 766.1 1544.9 768.2 1545.9 770.2 1547.0 772.1 1547.5 774.2 1548.1 776.4M1541.1 750.0 1542.1 751.8 1543.8 753.3 1544.5 755.2 1544.8 757.4 1545.6 759.3 1546.2 761.3 1546.9 763.5 1548.7 765.4 1550.2 767.4 1550.2 769.9 1550.8 772.2M1540.4 830.7 1539.9 828.6 1539.3 826.6 1539.0 824.5 1539.0 822.3 1540.0 819.9 1540.8 817.8 1541.7 815.8 1543.2 814.1 1544.7 812.3 1545.4 810.2 1546.1 808.0 1547.8 806.3 1549.4 804.8 1551.1 803.2 1552.9 801.8 1554.5 800.3 1556.0 798.6 1557.5 797.0 1559.8 796.3 1562.1 795.9 1564.1 794.9 1566.0 793.8 1567.9 792.6 1569.4 790.7 1571.2 789.3 1573.2 792.1 1573.8 794.2 1574.7 796.2 1575.7 798.2 1575.4 800.8 1574.6 802.8 1574.3 804.9 1574.5 807.0 1574.3 809.1 1573.2 811.1 1571.7 813.1 1570.8 815.3 1569.8 817.5 1568.8 819.7 1567.7 821.8 1566.4 822.7 1565.3 825.2 1563.8 827.1 1562.1 828.7 1560.4 830.2 1558.1 830.9 1555.3 830.8 1553.2 831.8 1551.2 833.2 1548.9 834.0 1546.4 833.9 1545.5 832.4 1543.2 831.7 1540.4 830.7M1528.1 844.0 1529.3 842.2 1530.4 840.3 1531.8 838.9 1533.3 837.4 1534.8 836.0 1536.4 834.6 1537.9 833.2 1539.8 832.2 1541.6 831.1 1542.5 832.6 1544.3 834.1 1546.3 835.3 1548.7 833.8 1550.6 832.6 1552.3 831.1 1554.2 830.0 1556.4 829.3 1558.5 828.5 1560.7 828.0 1562.8 827.5 1564.3 826.2 1565.5 824.4 1567.1 823.2 1569.0 822.4 1568.4 825.0 1568.6 827.8 1567.4 829.4 1566.1 831.2 1564.8 833.0 1563.4 834.7 1561.8 836.4 1560.5 838.1 1559.5 840.2 1558.3 842.1 1557.3 843.8 1556.2 845.8 1555.2 847.8 1554.1 849.7 1553.0 851.0 1552.3 853.5 1550.7 855.0 1548.7 856.0 1546.9 857.2 1544.6 856.5 1542.5 855.9 1540.4 855.8 1538.3 855.6 1536.9 855.3 1534.3 855.8 1532.5 854.8 1531.4 852.8 1530.9 850.7 1530.1 848.7 1529.2 846.8 1528.6 844.8 1528.1 844.0M1580.8 812.6 1581.1 810.7 1581.8 809.0 1582.1 807.2 1582.7 805.5 1583.2 803.8 1583.2 801.7 1584.0 799.9 1585.7 798.8 1587.3 797.7 1588.6 796.6 1590.0 795.6 1591.3 794.8 1591.7 795.6 1592.4 796.6 1593.9 797.6 1594.4 799.3 1593.7 801.2 1592.8 803.0 1592.4 804.9 1591.9 806.8 1590.8 808.4 1589.3 809.8 1588.1 811.2 1587.1 812.7 1586.5 813.2 1585.9 813.8 1585.4 814.3 1584.6 813.8 1583.9 813.1 1583.4 813.3 1583.0 814.0 1582.5 813.8 1582.4 812.9 1582.3 812.4 1581.6 812.8 1580.8 812.6M1555.3 869.2 1556.5 867.6 1558.0 866.3 1558.3 864.6 1558.2 862.6 1559.2 861.2 1561.5 860.8 1563.1 860.1 1563.3 858.0 1564.0 856.2 1565.9 856.1 1567.7 856.5 1569.0 855.9 1569.7 856.5 1570.3 857.7 1570.9 859.0 1571.1 860.4 1570.6 861.9 1570.0 863.3 1569.4 864.6 1568.5 865.9 1567.6 867.3 1566.5 868.7 1565.2 870.0 1563.8 871.5 1562.6 872.1 1561.5 871.8 1560.5 871.5 1559.8 871.8 1559.0 872.1 1558.4 871.6 1558.2 870.3 1557.9 870.1 1557.1 870.7 1556.5 870.6 1556.3 870.1 1555.3 869.2M1627.2 750.0 1628.0 752.1 1628.2 754.3 1628.8 756.4 1629.2 758.6 1628.6 760.2 1628.6 762.5 1628.2 764.7 1626.9 766.6 1625.8 768.5 1625.7 770.8 1625.7 773.1 1625.1 775.2 1624.9 777.5 1624.4 779.7 1624.0 782.0 1623.0 784.1 1621.7 786.1M1631.4 750.0 1632.2 751.9 1632.6 754.0 1633.8 755.7 1633.8 757.9 1633.1 760.2 1632.5 762.5 1631.4 764.7 1630.0 766.7M1632.8 750.0 1631.8 751.9 1631.9 754.3 1631.0 756.2 1629.7 758.1 1628.9 760.1 1628.4 762.2 1627.7 764.2 1627.5 766.5 1627.2 768.6 1626.0 770.5 1624.6 772.3 1623.4 774.0 1621.7 775.5 1620.8 777.3 1620.9 779.7 1620.3 781.7 1619.0 783.4 1617.7 785.1 1616.7 786.9 1615.6 788.6 1615.1 790.7 1615.2 793.0 1614.2 794.9 1611.7 796.1 1610.1 797.8 1610.1 800.4 1609.8 802.8 1608.5 804.6 1607.4 806.4 1606.2 808.3 1604.6 810.0 1603.7 812.0 1603.9 814.6 1603.4 816.8 1602.0 818.5 1600.7 820.4 1600.0 822.5 1599.2 824.5 1598.0 826.1 1596.4 827.5 1595.4 829.2 1595.0 831.3 1594.2 833.2 1592.9 834.8 1591.7 836.4 1590.6 838.1 1589.4 839.7 1588.4 841.5 1587.6 843.3 1586.5 845.1 1585.4 846.8 1584.3 848.4 1583.0 850.0 1581.8 851.6 1580.4 853.0 1578.9 854.4 1578.0 856.2 1577.4 858.3 1576.2 859.9 1574.1 860.9 1572.4 862.2 1571.5 864.3 1570.5 866.3 1569.2 868.0 1568.0 869.9 1566.7 871.6 1565.3 873.2 1563.7 874.8 1561.5 875.8 1559.9 877.2 1559.4 879.7 1558.8 882.0 1556.8 883.3 1554.5 884.3 1553.4 886.3 1552.9 888.8 1551.3 890.3 1549.4 891.7M1577.2 856.9 1578.7 855.4 1579.2 853.1 1580.5 851.5 1581.9 849.9 1583.4 848.5 1585.6 847.6 1587.2 846.2 1588.3 844.4M1385.5 897.2 1385.0 895.4 1384.6 893.4 1385.0 891.3 1386.0 889.4 1386.8 887.3 1387.5 885.3 1388.6 883.4 1390.3 882.0 1392.0 880.8 1393.3 879.5 1394.7 878.3 1396.5 877.8 1398.8 878.1 1400.6 878.7 1402.0 880.1 1403.3 881.2 1405.1 881.6 1406.6 882.5 1406.7 884.4 1406.2 886.2 1406.6 887.5 1407.1 888.8 1407.0 890.3 1406.9 891.9 1405.7 893.3 1404.4 894.4 1402.9 895.4 1400.9 895.8 1398.9 896.0 1397.0 896.5 1395.1 897.0 1393.1 897.2 1391.1 897.1 1389.2 897.0 1387.3 897.4 1385.5 897.2M1415.5 904.0 1416.7 902.6 1418.4 901.6 1419.2 900.4 1419.9 899.4 1421.0 898.5 1422.2 898.0 1423.4 897.5 1424.6 897.1 1425.9 896.8 1427.2 895.9 1428.6 895.0 1430.1 895.5 1430.4 897.4 1430.8 898.4 1431.4 899.3 1431.7 900.3 1432.1 901.4 1432.2 902.7 1430.7 903.4 1428.9 903.5 1428.1 904.3 1427.3 905.5 1425.9 906.1 1424.3 906.2 1423.1 906.1 1421.9 906.4 1420.8 906.5 1419.7 906.9 1418.7 907.4 1418.0 906.7 1417.9 905.1 1417.4 904.8 1416.4 905.5 1415.7 905.4 1415.5 904.9 1415.5 904.0M1380.0 941.7 1382.3 941.2 1384.6 941.1 1386.7 940.2 1388.7 938.5 1390.9 938.0 1393.3 938.4 1395.7 938.2 1397.7 936.8 1399.7 935.6 1402.1 935.5 1404.4 935.2 1406.7 934.5 1409.0 933.9 1411.3 933.2 1413.5 932.4 1415.7 931.6 1417.6 929.8 1419.6 928.2 1421.8 927.6 1424.1 927.0 1426.5 927.1 1428.8 928.1 1430.9 927.8 1432.8 926.5 1434.8 925.7 1436.9 925.4 1439.0 925.1 1441.1 924.7 1443.0 924.1 1445.1 923.6 1447.3 923.6 1449.3 923.1 1451.3 922.5 1453.3 921.9 1455.3 921.2 1457.2 920.3 1459.2 919.4M1391.1 934.7 1390.9 937.1 1390.7 939.5 1389.7 941.7M1380.0 980.6 1382.3 980.4 1384.5 980.3 1386.4 979.2 1388.1 977.6 1390.1 976.8 1392.4 976.7 1394.5 976.1 1396.1 974.5 1397.9 973.1 1400.2 972.8 1402.4 972.8 1404.5 972.1 1406.5 971.3 1408.5 970.6 1410.7 970.2 1412.8 969.6 1414.7 968.7 1416.7 967.8 1418.7 967.1 1420.8 966.4 1422.6 965.2 1424.3 963.5 1426.2 962.7 1428.5 962.8 1430.5 962.4 1432.2 961.2 1434.0 960.1 1435.9 959.2 1437.7 958.2 1439.7 957.5 1441.6 956.8 1443.6 956.2 1445.8 956.2 1447.7 955.4 1449.4 954.2M1380.0 986.1 1381.8 984.7 1383.6 983.6 1385.7 983.1 1388.0 983.0 1389.9 982.2 1391.7 980.8 1393.6 979.8 1395.6 979.2 1397.7 978.5 1399.6 977.5 1401.4 976.4 1403.4 975.6 1405.4 974.9 1407.5 974.3 1409.8 974.4 1412.0 973.9 1413.7 972.4 1415.4 971.1 1417.7 971.0 1420.0 971.1 1421.9 970.0 1423.5 968.4 1425.5 967.6 1427.8 967.6 1429.9 967.1 1431.6 965.5 1433.4 964.2 1435.3 963.3 1437.3 962.5 1439.4 961.8 1441.5 961.3 1443.5 960.5 1445.3 959.1 1447.2 958.1 1449.5 958.0 1451.7 957.7 1453.7 956.8 1455.6 956.0 1457.6 955.0 1459.1 953.5 1461.0 952.7 1463.5 953.2 1465.6 952.7 1467.1 951.1 1468.7 949.7 1470.1 948.0 1471.5 946.2 1473.6 945.3 1476.4 945.2 1478.2 943.9 1479.2 941.5 1480.6 939.7 1482.3 938.3 1482.7 936.5 1483.0 934.2 1483.2 931.9 1483.8 929.7 1484.4 927.5 1484.6 925.5 1485.7 923.1 1486.1 920.8 1485.9 918.5 1485.8 916.2 1485.7 913.9 1486.6 912.0 1487.5 910.0 1488.1 907.9 1489.1 905.9 1490.2 904.0 1491.3 902.2 1493.3 900.8 1495.0 899.2 1496.0 897.4 1497.0 895.1 1498.9 893.7 1501.4 892.8 1503.2 891.2 1501.7 892.5 1502.4 894.4 1504.1 896.1 1505.5 897.8 1505.2 899.9 1504.6 902.3 1505.5 904.3 1507.4 906.0 1507.9 908.1 1507.2 910.4 1507.2 912.6 1510.2 912.7 1512.4 912.2 1514.6 911.5 1516.8 910.8 1519.0 910.2 1521.7 909.2 1524.5 908.6 1526.7 907.8 1528.6 906.7 1529.9 904.7 1531.3 902.9 1533.4 902.1 1535.6 901.5 1537.4 900.2 1539.0 898.6 1540.8 897.4 1542.8 896.4 1544.7 895.4 1546.7 894.4M1456.4 948.6 1458.4 948.3 1460.3 947.6 1462.2 946.8 1464.1 946.1 1466.1 945.5 1468.2 945.3 1470.2 944.9 1472.0 944.0 1473.8 943.7 1475.9 943.2 1477.9 942.6 1480.0 942.1 1482.0 941.5 1484.1 941.4 1486.4 940.9 1488.4 939.8 1489.6 937.7 1490.9 935.8 1492.3 934.0 1493.7 932.0 1495.4 930.4 1497.4 929.1 1499.2 927.5 1501.3 926.4 1503.0 925.0 1504.9 923.7 1506.6 922.3 1508.0 920.5 1509.3 918.6 1510.9 917.0 1512.8 916.0 1515.0 915.1 1517.1 914.2 1518.9 912.5M1502.2 927.8 1504.2 926.5 1506.3 925.6 1508.0 923.9 1509.4 921.9 1511.1 920.4 1512.8 918.7 1514.5 917.5 1516.7 917.1 1518.7 916.6 1520.6 915.8 1518.2 916.3 1517.1 918.1 1516.5 920.4 1515.1 922.0 1513.2 923.1 1511.5 924.5 1509.9 925.8 1508.3 926.6 1507.1 928.4 1506.1 930.5 1504.3 931.4 1502.2 931.9M1439.7 977.8 1442.2 977.7 1444.5 977.2 1446.4 975.9 1448.1 974.1 1450.1 973.1 1452.5 972.7 1454.5 972.1 1456.3 971.1 1458.2 970.1 1459.9 968.7 1461.6 967.3 1463.7 966.9 1466.3 967.4 1468.2 966.5 1469.6 964.4 1471.3 963.0 1472.9 961.8 1474.6 960.6 1476.6 959.8 1478.6 959.2 1480.3 957.8 1481.6 956.1 1483.4 954.9 1485.6 954.5 1487.5 953.6 1489.3 952.4 1491.0 951.2 1492.9 950.3 1494.9 949.5 1496.2 947.9 1497.0 945.8 1498.5 944.4 1500.5 943.5 1502.2 942.4 1503.7 940.9 1505.1 939.5 1506.4 937.9 1507.7 936.3 1509.1 934.7 1510.6 933.3M1380.0 997.2 1382.0 996.5 1384.2 996.1 1386.2 995.2 1388.1 994.2 1390.1 993.4 1392.0 992.3 1394.0 991.5 1396.2 991.1 1398.3 990.7 1400.5 990.3 1402.7 990.2 1404.5 989.1 1406.1 987.1 1408.0 986.2 1410.1 985.8 1412.2 985.3 1414.0 984.2 1416.0 983.2 1418.0 982.6 1420.1 982.1 1422.2 981.8 1424.4 981.9M1380.0 1002.8 1382.2 1002.8 1384.5 1003.0 1386.5 1002.4 1388.6 1001.7 1390.6 1001.0 1392.6 1000.1 1394.6 999.4 1396.7 998.8 1398.7 998.1 1400.5 996.8 1402.2 995.3 1404.2 994.8 1406.4 994.7 1408.5 994.1 1410.4 993.2 1412.3 992.5 1414.5 992.3 1416.6 992.0 1418.4 990.7 1420.1 989.2 1422.3 989.0 1424.4 988.9M1380.0 1008.3 1381.8 1007.0 1383.5 1005.4 1385.7 1004.8 1388.1 1004.8 1390.2 1004.0 1392.1 1002.9 1393.9 1001.4"/>
<ellipse cx="1087" cy="443" rx="10" ry="7"/>
<ellipse cx="1385.5" cy="753" rx="8" ry="8"/>
<ellipse cx="1377" cy="904" rx="8" ry="8"/>
<path d="M1479 451 L1484 444 L1492 440 L1501 440 L1508 446 L1510 452"/>
<path d="M1156 737 L1160 748 L1168 751 L1178 747 L1182 738"/>
<path d="M1366 1008 L1385 1000 L1405 993 L1425 984 L1440 977"/>
<path d="M1135 1028.4 L1158 1032.5 L1186 1035.3 L1213 1036.7 L1241 1036.7 L1269 1034 L1297 1030 L1319 1025.6" stroke-width="0.8"/>

</g></svg>
</body></html>
